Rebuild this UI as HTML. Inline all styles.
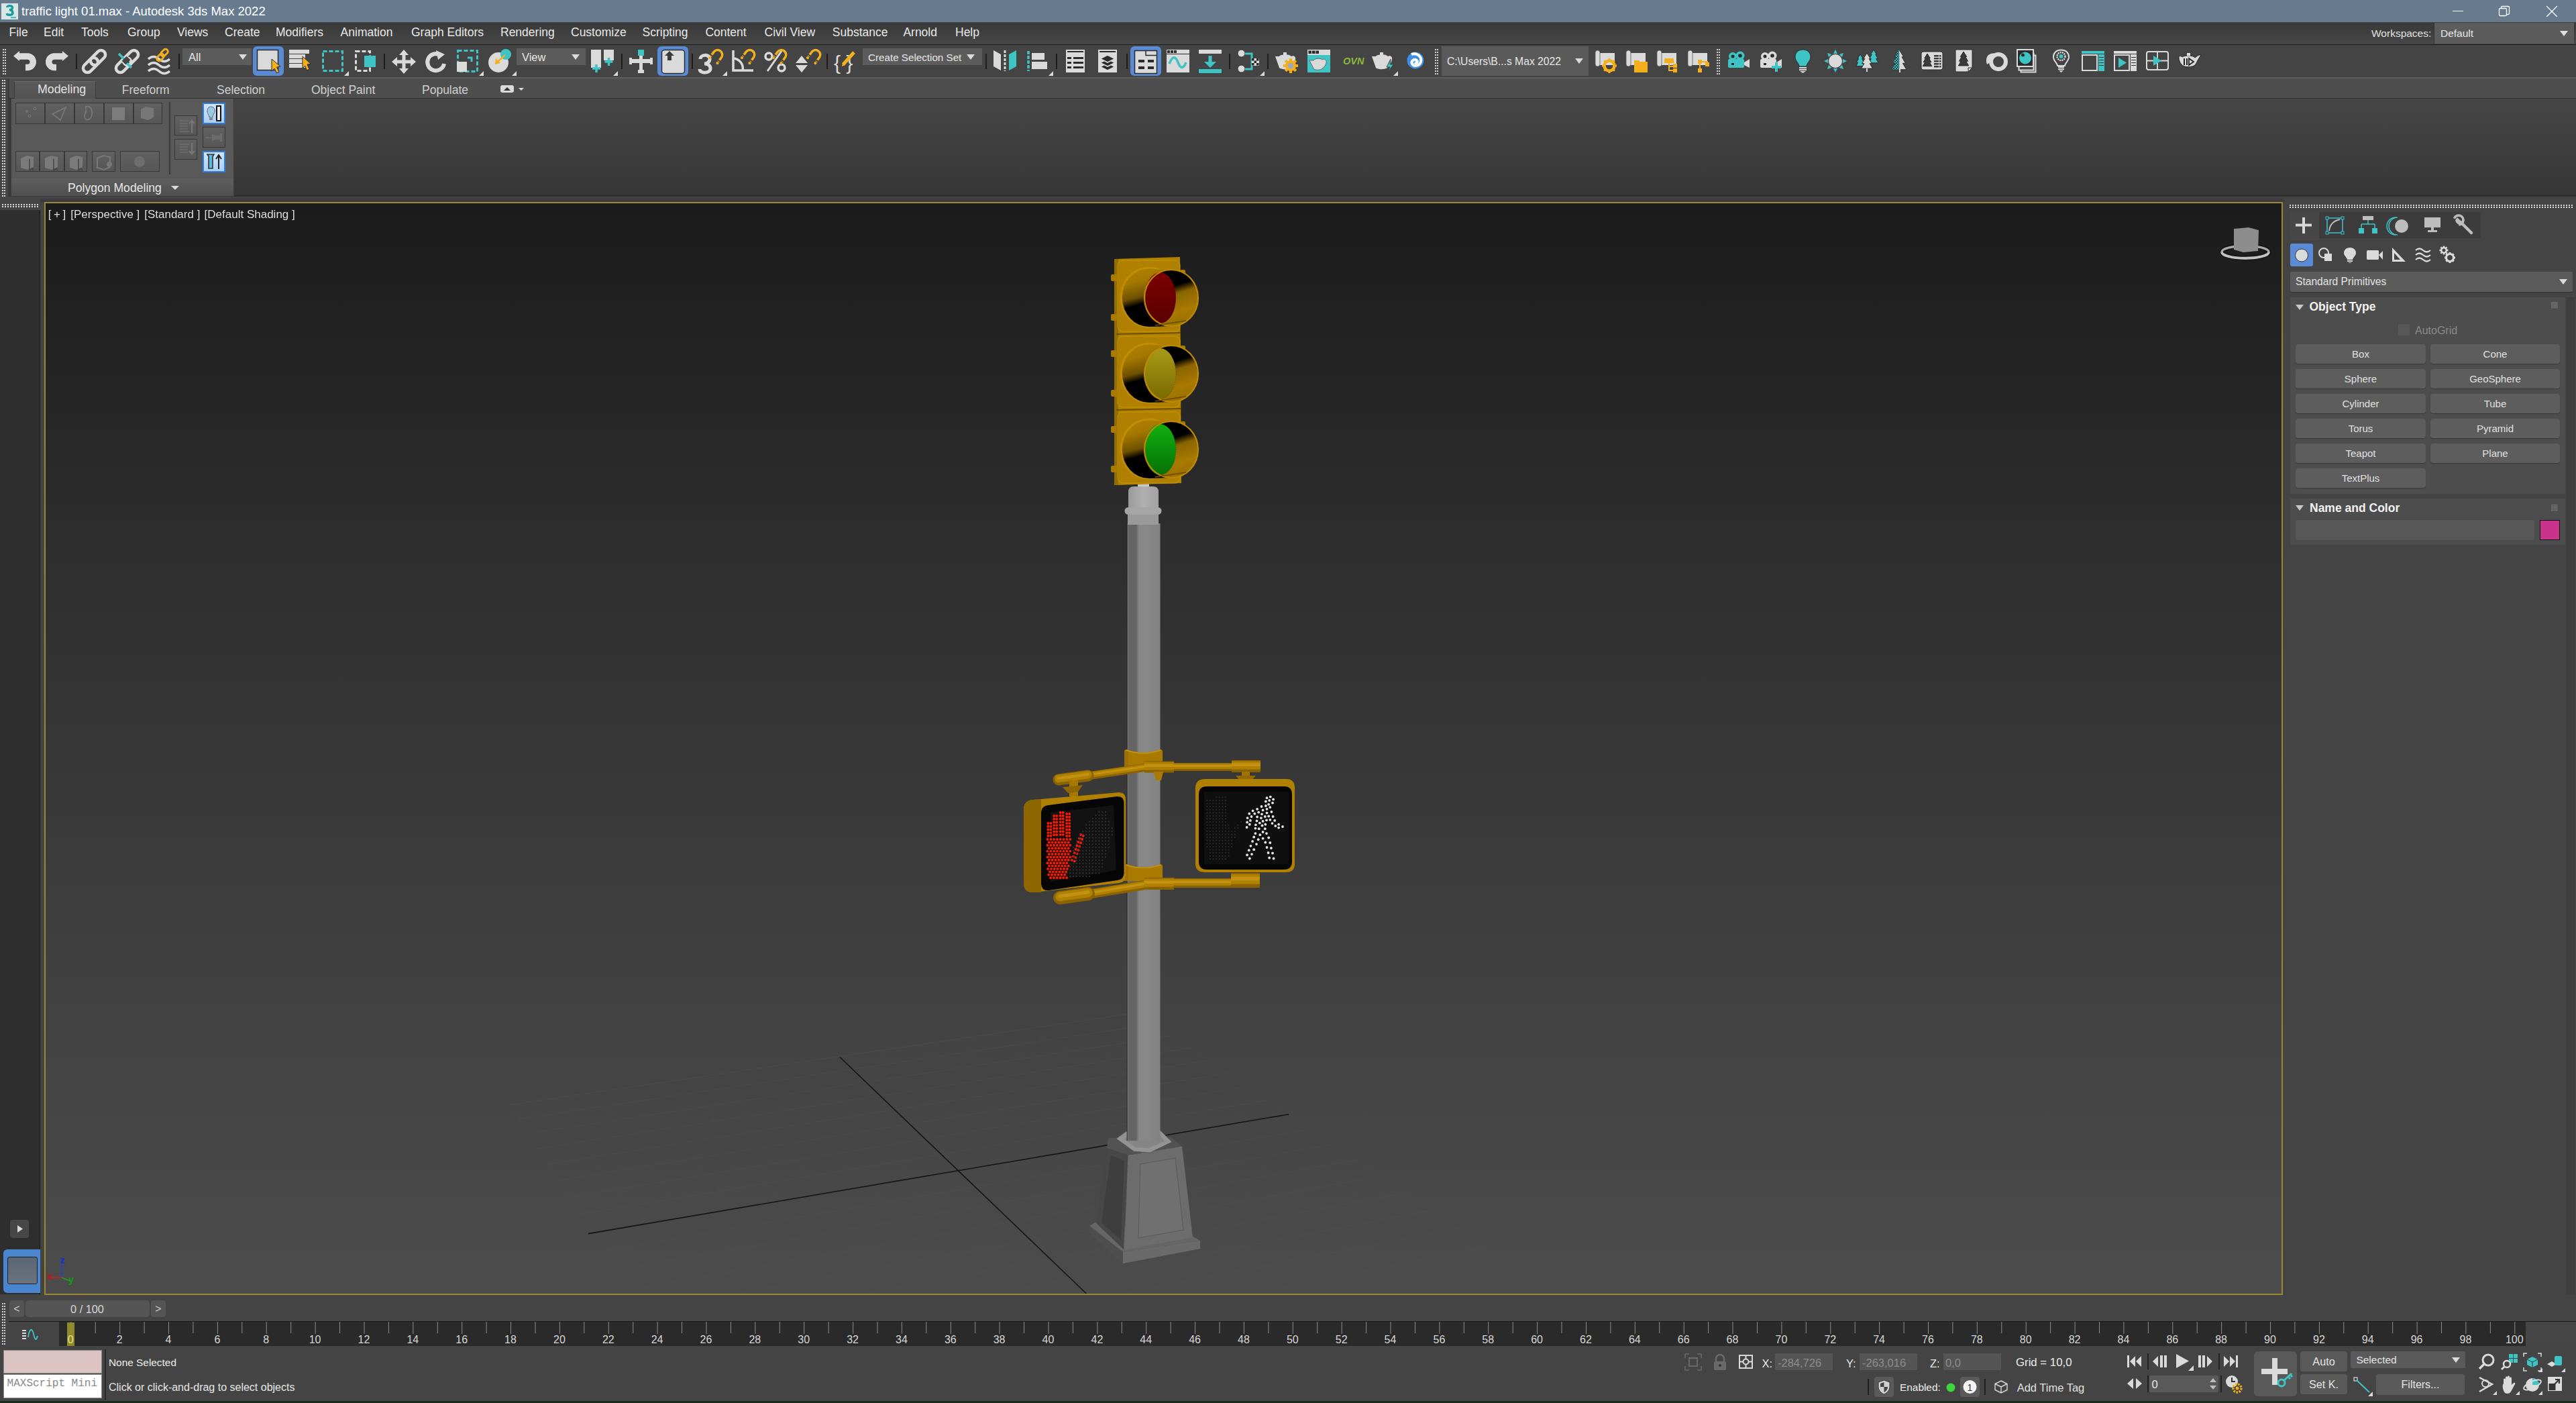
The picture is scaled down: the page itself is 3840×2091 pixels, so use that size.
<!DOCTYPE html>
<html><head><meta charset="utf-8">
<style>
*{box-sizing:border-box;margin:0;padding:0}
html,body{width:3840px;height:2091px;overflow:hidden;background:#444;font-family:"Liberation Sans",sans-serif;color:#ddd;position:relative}
.a{position:absolute}
.t{position:absolute;white-space:nowrap;line-height:1}
svg.a{overflow:visible}
</style></head><body>
<div class="a" style="left:0px;top:0px;width:3840px;height:33px;background:#687a8e;"></div>
<svg class="a" style="left:2px;top:5px;" width="25" height="24" viewBox="0 0 25 24"><rect x="0" y="0" width="25" height="24" fill="#d9e6e6"/><path d="M8.5 6 C9 2.8 16.5 2.8 16.5 6.5 C16.5 8.5 14.5 9.8 12 9.8 C15 9.8 17 11.3 17 14.3 C17 18 9 18.3 8 15" fill="none" stroke="#189c9c" stroke-width="3.4"/><rect x="14" y="20" width="8" height="2.2" fill="#3cc0c0"/></svg>
<div class="t" style="left:32.0px;top:7.8px;font-size:18.5px;color:#ffffff;font-weight:400;">traffic light 01.max - Autodesk 3ds Max 2022</div>
<div class="a" style="left:3656px;top:16px;width:16px;height:1px;background:#ffffff;"></div>
<svg class="a" style="left:3724px;top:8px;" width="18" height="18" viewBox="0 0 18 18"><rect x="1.5" y="4.5" width="11" height="11" rx="1.5" fill="none" stroke="#fff" stroke-width="1.3"/><path d="M4.5 4.5 V3 a1.5 1.5 0 0 1 1.5 -1.5 H15 a1.5 1.5 0 0 1 1.5 1.5 V12 a1.5 1.5 0 0 1 -1.5 1.5 H12.5" fill="none" stroke="#fff" stroke-width="1.3"/></svg>
<svg class="a" style="left:3795px;top:8px;" width="18" height="18" viewBox="0 0 18 18"><path d="M1 1 L17 17 M17 1 L1 17" stroke="#fff" stroke-width="1.4"/></svg>
<div class="a" style="left:0px;top:33px;width:3840px;height:33px;background:linear-gradient(#383838,#474747);"></div>
<div class="a" style="left:0px;top:33px;width:3840px;height:1px;background:#3a3f44;"></div>
<div class="t" style="left:13.5px;top:40.2px;font-size:17.5px;color:#e8e8e8;font-weight:400;">File</div>
<div class="t" style="left:65.0px;top:40.2px;font-size:17.5px;color:#e8e8e8;font-weight:400;">Edit</div>
<div class="t" style="left:121.0px;top:40.2px;font-size:17.5px;color:#e8e8e8;font-weight:400;">Tools</div>
<div class="t" style="left:190.0px;top:40.2px;font-size:17.5px;color:#e8e8e8;font-weight:400;">Group</div>
<div class="t" style="left:264.0px;top:40.2px;font-size:17.5px;color:#e8e8e8;font-weight:400;">Views</div>
<div class="t" style="left:335.0px;top:40.2px;font-size:17.5px;color:#e8e8e8;font-weight:400;">Create</div>
<div class="t" style="left:411.0px;top:40.2px;font-size:17.5px;color:#e8e8e8;font-weight:400;">Modifiers</div>
<div class="t" style="left:507.6px;top:40.2px;font-size:17.5px;color:#e8e8e8;font-weight:400;">Animation</div>
<div class="t" style="left:613.0px;top:40.2px;font-size:17.5px;color:#e8e8e8;font-weight:400;">Graph Editors</div>
<div class="t" style="left:746.0px;top:40.2px;font-size:17.5px;color:#e8e8e8;font-weight:400;">Rendering</div>
<div class="t" style="left:851.0px;top:40.2px;font-size:17.5px;color:#e8e8e8;font-weight:400;">Customize</div>
<div class="t" style="left:957.5px;top:40.2px;font-size:17.5px;color:#e8e8e8;font-weight:400;">Scripting</div>
<div class="t" style="left:1051.4px;top:40.2px;font-size:17.5px;color:#e8e8e8;font-weight:400;">Content</div>
<div class="t" style="left:1139.5px;top:40.2px;font-size:17.5px;color:#e8e8e8;font-weight:400;">Civil View</div>
<div class="t" style="left:1240.8px;top:40.2px;font-size:17.5px;color:#e8e8e8;font-weight:400;">Substance</div>
<div class="t" style="left:1346.4px;top:40.2px;font-size:17.5px;color:#e8e8e8;font-weight:400;">Arnold</div>
<div class="t" style="left:1424.0px;top:40.2px;font-size:17.5px;color:#e8e8e8;font-weight:400;">Help</div>
<div class="t" style="left:3535.0px;top:41.9px;font-size:15.5px;color:#e0e0e0;font-weight:400;">Workspaces:</div>
<div class="a" style="left:3629px;top:34px;width:208px;height:31px;background:#5c5c5c;"></div>
<div class="a" style="left:3628px;top:34px;width:1px;height:31px;background:#303030;"></div>
<div class="t" style="left:3638.0px;top:41.9px;font-size:15.5px;color:#e8e8e8;font-weight:400;">Default</div>
<svg class="a" style="left:3815px;top:45px;" width="14" height="10" viewBox="0 0 14 10"><path d="M1 1 H13 L7 9 Z" fill="#e0e0e0"/></svg>
<div class="a" style="left:0px;top:66px;width:3840px;height:1px;background:#1c1c1c;"></div>
<div class="a" style="left:0px;top:67px;width:3840px;height:49px;background:#444444;"></div>
<div class="a" style="left:0px;top:115px;width:3840px;height:2px;background:#5d5d5d;"></div>
<svg class="a" style="left:4px;top:73px;" width="6" height="38" viewBox="0 0 6 38"><rect x="0" y="0" width="2" height="2" fill="#cfcfcf"/><rect x="0" y="4" width="2" height="2" fill="#cfcfcf"/><rect x="0" y="8" width="2" height="2" fill="#cfcfcf"/><rect x="0" y="12" width="2" height="2" fill="#cfcfcf"/><rect x="0" y="16" width="2" height="2" fill="#cfcfcf"/><rect x="0" y="20" width="2" height="2" fill="#cfcfcf"/><rect x="0" y="24" width="2" height="2" fill="#cfcfcf"/><rect x="0" y="28" width="2" height="2" fill="#cfcfcf"/><rect x="0" y="32" width="2" height="2" fill="#cfcfcf"/><rect x="0" y="36" width="2" height="2" fill="#cfcfcf"/><rect x="3" y="0" width="2" height="2" fill="#cfcfcf"/><rect x="3" y="4" width="2" height="2" fill="#cfcfcf"/><rect x="3" y="8" width="2" height="2" fill="#cfcfcf"/><rect x="3" y="12" width="2" height="2" fill="#cfcfcf"/><rect x="3" y="16" width="2" height="2" fill="#cfcfcf"/><rect x="3" y="20" width="2" height="2" fill="#cfcfcf"/><rect x="3" y="24" width="2" height="2" fill="#cfcfcf"/><rect x="3" y="28" width="2" height="2" fill="#cfcfcf"/><rect x="3" y="32" width="2" height="2" fill="#cfcfcf"/><rect x="3" y="36" width="2" height="2" fill="#cfcfcf"/></svg>
<svg class="a" style="left:18px;top:74px;" width="40" height="36" viewBox="0 0 40 36"><path d="M10 10 H23 A8.2 8.2 0 0 1 23 26.5 H20" fill="none" stroke="#dadada" stroke-width="9.5"/><path d="M2 9.5 L11 2 V17 Z" fill="#dadada"/></svg>
<svg class="a" style="left:64px;top:74px;" width="40" height="36" viewBox="0 0 40 36"><path d="M30 10 H17 A8.2 8.2 0 0 0 17 26.5 H20" fill="none" stroke="#dadada" stroke-width="9.5"/><path d="M38 9.5 L29 2 V17 Z" fill="#dadada"/></svg>
<div class="a" style="left:113px;top:80px;width:2px;height:23px;background:#1e1e1e;"></div>
<svg class="a" style="left:122px;top:74px;" width="40" height="36" viewBox="0 0 40 36"><rect x="0" y="16.5" width="26" height="13" rx="6.5" fill="none" stroke="#dadada" stroke-width="4.5" transform="rotate(-45 13 23)"/><rect x="11" y="5.5" width="26" height="13" rx="6.5" fill="none" stroke="#dadada" stroke-width="4.5" transform="rotate(-45 24 12)"/></svg>
<svg class="a" style="left:171px;top:74px;" width="40" height="36" viewBox="0 0 40 36"><rect x="0" y="16.5" width="26" height="13" rx="6.5" fill="none" stroke="#dadada" stroke-width="4.5" transform="rotate(-45 13 23)"/><rect x="11" y="5.5" width="26" height="13" rx="6.5" fill="none" stroke="#dadada" stroke-width="4.5" transform="rotate(-45 24 12)"/><path d="M6 6 L14 14 M17 19 L25 27" stroke="#3fc4c6" stroke-width="3.5"/><rect x="12" y="12" width="10" height="8" fill="#444" transform="rotate(-45 17 16)"/></svg>
<svg class="a" style="left:219px;top:74px;" width="40" height="40" viewBox="0 0 40 40"><path d="M2 14 q8 -7 16 0 t16 0" fill="none" stroke="#dadada" stroke-width="3.5"/><path d="M2 23 q8 -7 16 0 t16 0" fill="none" stroke="#dadada" stroke-width="3.5"/><path d="M2 32 q8 -7 16 0 t16 0" fill="none" stroke="#dadada" stroke-width="3.5"/><rect x="20" y="1" width="12" height="7" rx="3.5" fill="none" stroke="#f4b01c" stroke-width="2.8" transform="rotate(-45 26 4.5)"/><rect x="14" y="8" width="12" height="7" rx="3.5" fill="none" stroke="#f4b01c" stroke-width="2.8" transform="rotate(-45 20 11.5)"/></svg>
<div class="a" style="left:266px;top:80px;width:2px;height:23px;background:#1e1e1e;"></div>
<div class="a" style="left:272px;top:72px;width:103px;height:25px;background:#5c5c5c;"></div>
<div class="t" style="left:281.0px;top:76.5px;font-size:16.5px;color:#e6e6e6;font-weight:400;">All</div>
<svg class="a" style="left:355px;top:80px;" width="14" height="10" viewBox="0 0 14 10"><path d="M1 1 H13 L7 9 Z" fill="#dadada"/></svg>
<div class="a" style="left:377px;top:69px;width:46px;height:44px;background:#5b8ad4;border-radius:6px"></div>
<svg class="a" style="left:377px;top:69px;" width="46" height="44" viewBox="0 0 46 44"><rect x="6.5" y="5.5" width="31" height="30" fill="#dadada" stroke="#2b2b2b" stroke-width="1.5"/><path d="M28 19 L41 30 L35.5 31 L39 38 L35.5 40 L32 33 L28 37 Z" fill="#f4b01c" stroke="#2b2b2b" stroke-width="1"/></svg>
<svg class="a" style="left:430px;top:72px;" width="40" height="40" viewBox="0 0 40 40"><rect x="1" y="2" width="30" height="6" fill="#dadada"/><rect x="1" y="9" width="24" height="6" fill="#dadada"/><rect x="1" y="16" width="24" height="6" fill="#dadada"/><rect x="1" y="23" width="24" height="6" fill="#dadada"/><path d="M21 12 L33 23 L28 24 L31 31 L27.5 33 L24.5 26 L21 30 Z" fill="#f4b01c" stroke="#2b2b2b" stroke-width="1"/></svg>
<svg class="a" style="left:478px;top:73px;" width="36" height="36" viewBox="0 0 36 36"><rect x="3.5" y="3.5" width="29" height="29" fill="none" stroke="#3fc4c6" stroke-width="3" stroke-dasharray="6 3"/></svg>
<svg class="a" style="left:513px;top:106px;" width="7" height="7" viewBox="0 0 7 7"><path d="M7 0 V7 H0 Z" fill="#dadada"/></svg>
<svg class="a" style="left:527px;top:73px;" width="36" height="36" viewBox="0 0 36 36"><rect x="3.5" y="3.5" width="21" height="29" fill="none" stroke="#dadada" stroke-width="3" stroke-dasharray="6 3"/><rect x="16" y="10" width="17" height="17" fill="#3fc4c6"/></svg>
<div class="a" style="left:572px;top:80px;width:2px;height:23px;background:#1e1e1e;"></div>
<svg class="a" style="left:583px;top:73px;" width="38" height="38" viewBox="0 0 38 38"><path d="M19 1 L26 9 H21.5 V16.5 H29 V12 L37 19 L29 26 V21.5 H21.5 V29 H26 L19 37 L12 29 H16.5 V21.5 H9 V26 L1 19 L9 12 V16.5 H16.5 V9 H12 Z" fill="#dadada"/></svg>
<svg class="a" style="left:632px;top:74px;" width="36" height="36" viewBox="0 0 36 36"><path d="M25 8.5 A12.5 12.5 0 1 0 30 21" fill="none" stroke="#dadada" stroke-width="6"/><path d="M18 1 L31 7 L21 15 Z" fill="#dadada"/></svg>
<svg class="a" style="left:680px;top:73px;" width="36" height="36" viewBox="0 0 36 36"><rect x="2.5" y="2.5" width="29" height="31" fill="none" stroke="#3fc4c6" stroke-width="3" stroke-dasharray="6 3"/><rect x="1" y="19" width="15" height="15" fill="#dadada"/><path d="M17 13 H23 V19" fill="none" stroke="#3fc4c6" stroke-width="3"/></svg>
<svg class="a" style="left:714px;top:106px;" width="7" height="7" viewBox="0 0 7 7"><path d="M7 0 V7 H0 Z" fill="#dadada"/></svg>
<svg class="a" style="left:726px;top:72px;" width="40" height="38" viewBox="0 0 40 38"><circle cx="17" cy="21" r="15" fill="#dadada"/><circle cx="28" cy="9" r="8" fill="#3fc4c6"/><path d="M27 10 L16 20" stroke="#f4b01c" stroke-width="2.5"/><path d="M12 24 L13 15 L20 22 Z" fill="#f4b01c"/></svg>
<svg class="a" style="left:763px;top:106px;" width="7" height="7" viewBox="0 0 7 7"><path d="M7 0 V7 H0 Z" fill="#dadada"/></svg>
<div class="a" style="left:770px;top:72px;width:103px;height:25px;background:#5c5c5c;"></div>
<div class="t" style="left:778.0px;top:76.5px;font-size:16.5px;color:#e6e6e6;font-weight:400;">View</div>
<svg class="a" style="left:851px;top:80px;" width="14" height="10" viewBox="0 0 14 10"><path d="M1 1 H13 L7 9 Z" fill="#dadada"/></svg>
<svg class="a" style="left:880px;top:73px;" width="40" height="40" viewBox="0 0 40 40"><rect x="1" y="1" width="15" height="27" fill="#dadada"/><rect x="20" y="1" width="15" height="16" fill="#dadada"/><path d="M9 23 V35 M3 29 H15" stroke="#3fc4c6" stroke-width="3.5"/><path d="M27.5 13 V25 M21.5 19 H33.5" stroke="#3fc4c6" stroke-width="3.5"/></svg>
<svg class="a" style="left:914px;top:106px;" width="7" height="7" viewBox="0 0 7 7"><path d="M7 0 V7 H0 Z" fill="#dadada"/></svg>
<div class="a" style="left:926px;top:80px;width:2px;height:23px;background:#1e1e1e;"></div>
<svg class="a" style="left:937px;top:73px;" width="38" height="38" viewBox="0 0 38 38"><rect x="14" y="1" width="9" height="9" fill="#3fc4c6"/><rect x="16" y="10" width="5" height="25" fill="#dadada"/><rect x="1" y="15" width="35" height="6" fill="#dadada"/><rect x="1" y="13" width="4" height="10" fill="#dadada"/><rect x="32" y="13" width="4" height="10" fill="#dadada"/><rect x="14" y="31" width="9" height="5" fill="#dadada"/></svg>
<div class="a" style="left:980px;top:69px;width:46px;height:44px;background:#5b8ad4;border-radius:6px"></div>
<svg class="a" style="left:980px;top:69px;" width="46" height="44" viewBox="0 0 46 44"><rect x="6.5" y="5.5" width="34" height="35" rx="4" fill="#dadada" stroke="#2b2b2b" stroke-width="1.5"/><path d="M11 14 L18 7 L25 14 H21 V21 H15 V14 Z" fill="#3a3a3a"/></svg>
<div class="a" style="left:1031px;top:80px;width:2px;height:23px;background:#1e1e1e;"></div>
<svg class="a" style="left:1040px;top:72px;" width="40" height="40" viewBox="0 0 40 40"><path d="M4 16 C4 9 18 8 18 16 C18 21 13 23 10 23 C14 23 19 25 19 30 C19 38 3 38 3 31" fill="none" stroke="#dadada" stroke-width="5"/><g transform="rotate(35 28 12)"><path d="M21 17 V9 A7 7 0 0 1 35 9 V17" fill="none" stroke="#f4b01c" stroke-width="3.5"/><rect x="19" y="14" width="4" height="2" fill="#444"/><rect x="33" y="14" width="4" height="2" fill="#444"/><circle cx="21" cy="19.5" r="2" fill="#f4b01c"/><circle cx="35" cy="19.5" r="2" fill="#f4b01c"/></g></svg>
<svg class="a" style="left:1077px;top:106px;" width="7" height="7" viewBox="0 0 7 7"><path d="M7 0 V7 H0 Z" fill="#dadada"/></svg>
<svg class="a" style="left:1089px;top:72px;" width="40" height="40" viewBox="0 0 40 40"><path d="M4 3 V33 H34" fill="none" stroke="#dadada" stroke-width="3.5"/><path d="M4 15 A15 15 0 0 1 18 33" fill="none" stroke="#dadada" stroke-width="3.5"/><g transform="rotate(35 27 12)"><path d="M20 17 V9 A7 7 0 0 1 34 9 V17" fill="none" stroke="#f4b01c" stroke-width="3.5"/><rect x="18" y="14" width="4" height="2" fill="#444"/><rect x="32" y="14" width="4" height="2" fill="#444"/><circle cx="20" cy="19.5" r="2" fill="#f4b01c"/><circle cx="34" cy="19.5" r="2" fill="#f4b01c"/></g></svg>
<svg class="a" style="left:1138px;top:72px;" width="40" height="40" viewBox="0 0 40 40"><circle cx="8" cy="12" r="5" fill="none" stroke="#dadada" stroke-width="3.5"/><circle cx="27" cy="29" r="5" fill="none" stroke="#dadada" stroke-width="3.5"/><path d="M6 34 L27 4" stroke="#dadada" stroke-width="3"/><g transform="rotate(35 25 12)"><path d="M18 17 V9 A7 7 0 0 1 32 9 V17" fill="none" stroke="#f4b01c" stroke-width="3.5"/><rect x="16" y="14" width="4" height="2" fill="#444"/><rect x="30" y="14" width="4" height="2" fill="#444"/><circle cx="18" cy="19.5" r="2" fill="#f4b01c"/><circle cx="32" cy="19.5" r="2" fill="#f4b01c"/></g></svg>
<svg class="a" style="left:1186px;top:72px;" width="40" height="40" viewBox="0 0 40 40"><path d="M9 11 L18 22 H0 Z" fill="#dadada"/><path d="M0 25 H18 L9 36 Z" fill="#dadada"/><g transform="rotate(35 28 12)"><path d="M21 17 V9 A7 7 0 0 1 35 9 V17" fill="none" stroke="#f4b01c" stroke-width="3.5"/><rect x="19" y="14" width="4" height="2" fill="#444"/><rect x="33" y="14" width="4" height="2" fill="#444"/><circle cx="21" cy="19.5" r="2" fill="#f4b01c"/><circle cx="35" cy="19.5" r="2" fill="#f4b01c"/></g></svg>
<div class="a" style="left:1232px;top:80px;width:2px;height:23px;background:#1e1e1e;"></div>
<svg class="a" style="left:1243px;top:72px;" width="40" height="40" viewBox="0 0 40 40"><text x="0" y="32" font-family="Liberation Sans" font-size="30" fill="#dadada">{ }</text><path d="M14 24 L30 6" stroke="#f4b01c" stroke-width="5"/><path d="M12 27 L13 21 L17 25 Z" fill="#f4b01c"/></svg>
<div class="a" style="left:1286px;top:72px;width:178px;height:25px;background:#5c5c5c;"></div>
<div class="t" style="left:1294.0px;top:77.6px;font-size:15.2px;color:#e6e6e6;font-weight:400;">Create Selection Set</div>
<svg class="a" style="left:1440px;top:80px;" width="14" height="10" viewBox="0 0 14 10"><path d="M1 1 H13 L7 9 Z" fill="#dadada"/></svg>
<div class="a" style="left:1469px;top:80px;width:2px;height:23px;background:#1e1e1e;"></div>
<svg class="a" style="left:1479px;top:72px;" width="40" height="40" viewBox="0 0 40 40"><path d="M2 3 L13 9 V33 L2 27 Z" fill="#dadada"/><path d="M19 3 V34" stroke="#dadada" stroke-width="3" stroke-dasharray="4 2"/><path d="M25 9 L36 3 V27 L25 33 Z" fill="#3fc4c6"/></svg>
<svg class="a" style="left:1530px;top:72px;" width="40" height="40" viewBox="0 0 40 40"><path d="M3 4 V34" stroke="#3fc4c6" stroke-width="3.5" stroke-dasharray="5 2"/><rect x="8" y="7" width="19" height="10" fill="#dadada"/><rect x="8" y="20" width="23" height="11" fill="#dadada"/></svg>
<svg class="a" style="left:1563px;top:106px;" width="7" height="7" viewBox="0 0 7 7"><path d="M7 0 V7 H0 Z" fill="#dadada"/></svg>
<div class="a" style="left:1574px;top:80px;width:2px;height:23px;background:#1e1e1e;"></div>
<svg class="a" style="left:1588px;top:73px;" width="32" height="36" viewBox="0 0 32 36"><rect x="1" y="1" width="28" height="34" fill="#dadada"/><rect x="3" y="3" width="24" height="2" fill="#2b2b2b"/><rect x="3" y="12" width="6" height="3" fill="#2b2b2b"/><rect x="12" y="12" width="15" height="3" fill="#2b2b2b"/><rect x="3" y="19" width="6" height="3" fill="#2b2b2b"/><rect x="12" y="19" width="15" height="3" fill="#2b2b2b"/><rect x="3" y="26" width="6" height="3" fill="#2b2b2b"/><rect x="12" y="26" width="15" height="3" fill="#2b2b2b"/></svg>
<svg class="a" style="left:1636px;top:73px;" width="32" height="36" viewBox="0 0 32 36"><rect x="1" y="1" width="28" height="34" fill="#dadada"/><rect x="3" y="3" width="24" height="2" fill="#2b2b2b"/><path d="M15 21 L26 26.5 L15 32 L4 26.5 Z" fill="#2b2b2b" stroke="#dadada" stroke-width="1.6"/><path d="M15 15 L26 20.5 L15 26 L4 20.5 Z" fill="#2b2b2b" stroke="#dadada" stroke-width="1.6"/><path d="M15 9 L26 14.5 L15 20 L4 14.5 Z" fill="#2b2b2b" stroke="#dadada" stroke-width="1.6"/></svg>
<div class="a" style="left:1679px;top:80px;width:2px;height:23px;background:#1e1e1e;"></div>
<div class="a" style="left:1685px;top:69px;width:46px;height:44px;background:#5b8ad4;border-radius:6px"></div>
<svg class="a" style="left:1685px;top:69px;" width="46" height="44" viewBox="0 0 46 44"><path d="M6.5 6.5 H39.5 V40.5 H6.5 Z" fill="#dadada" stroke="#2b2b2b" stroke-width="1.5"/><path d="M23 6.5 V13.5 H39.5" fill="none" stroke="#2b2b2b" stroke-width="1.5"/><rect x="12" y="20" width="9" height="4" fill="#2b2b2b"/><rect x="26" y="20" width="9" height="4" fill="#2b2b2b"/><rect x="12" y="30" width="9" height="4" fill="#2b2b2b"/><rect x="26" y="30" width="9" height="4" fill="#2b2b2b"/></svg>
<svg class="a" style="left:1738px;top:73px;" width="36" height="36" viewBox="0 0 36 36"><rect x="1" y="1" width="34" height="34" fill="#dadada"/><rect x="2" y="2" width="4" height="4" fill="#2b2b2b"/><rect x="7" y="2" width="4" height="4" fill="#2b2b2b"/><rect x="12" y="2" width="4" height="4" fill="#2b2b2b"/><path d="M1 7.5 H35" stroke="#2b2b2b" stroke-width="1.2"/><path d="M5 22 C10 10 14 10 18 20 S26 30 30 20" fill="none" stroke="#3fc4c6" stroke-width="3.5"/></svg>
<svg class="a" style="left:1786px;top:73px;" width="36" height="36" viewBox="0 0 36 36"><rect x="1" y="1" width="34" height="6" fill="#dadada"/><path d="M18 10 V22" stroke="#3fc4c6" stroke-width="5"/><path d="M9 19 H27 L18 28 Z" fill="#3fc4c6"/><rect x="1" y="30" width="34" height="6" fill="#3fc4c6"/></svg>
<div class="a" style="left:1832px;top:80px;width:2px;height:23px;background:#1e1e1e;"></div>
<svg class="a" style="left:1842px;top:73px;" width="40" height="38" viewBox="0 0 40 38"><circle cx="8.5" cy="6.5" r="5.5" fill="#dadada" stroke="#2b2b2b"/><circle cx="8.5" cy="29.5" r="5.5" fill="#dadada" stroke="#2b2b2b"/><path d="M14 7 H24 V30 H14" fill="none" stroke="#3fc4c6" stroke-width="3"/><rect x="24" y="14" width="11" height="11" fill="#dadada"/><rect x="24" y="14" width="3.5" height="3.5" fill="#2b2b2b"/><rect x="31" y="14" width="3.5" height="3.5" fill="#2b2b2b"/><rect x="27.5" y="17.5" width="3.5" height="3.5" fill="#2b2b2b"/><rect x="24" y="21" width="3.5" height="3.5" fill="#2b2b2b"/><rect x="31" y="21" width="3.5" height="3.5" fill="#2b2b2b"/></svg>
<svg class="a" style="left:1878px;top:106px;" width="7" height="7" viewBox="0 0 7 7"><path d="M7 0 V7 H0 Z" fill="#dadada"/></svg>
<div class="a" style="left:1889px;top:80px;width:2px;height:23px;background:#1e1e1e;"></div>
<svg class="a" style="left:1899px;top:74px;" width="40" height="40" viewBox="0 0 40 40"><path d="M2 10 L8 10 C10 7 22 6 26 10 C29 8 33 10 32 15 C31 20 28 24 26 26 C24 30 10 30 8 27 Z" fill="#dadada"/><rect x="14" y="4" width="5" height="4" fill="#dadada"/><circle cx="25" cy="24" r="8" fill="#f4b01c"/><circle cx="25" cy="24" r="4" fill="#9aa7c7"/><rect x="23" y="13" width="4" height="5" fill="#f4b01c" transform="rotate(0 25 24)"/><rect x="23" y="13" width="4" height="5" fill="#f4b01c" transform="rotate(45 25 24)"/><rect x="23" y="13" width="4" height="5" fill="#f4b01c" transform="rotate(90 25 24)"/><rect x="23" y="13" width="4" height="5" fill="#f4b01c" transform="rotate(135 25 24)"/><rect x="23" y="13" width="4" height="5" fill="#f4b01c" transform="rotate(180 25 24)"/><rect x="23" y="13" width="4" height="5" fill="#f4b01c" transform="rotate(225 25 24)"/><rect x="23" y="13" width="4" height="5" fill="#f4b01c" transform="rotate(270 25 24)"/><rect x="23" y="13" width="4" height="5" fill="#f4b01c" transform="rotate(315 25 24)"/></svg>
<svg class="a" style="left:1948px;top:73px;" width="36" height="36" viewBox="0 0 36 36"><rect x="1" y="1" width="34" height="34" fill="#3fc4c6"/><rect x="1" y="1" width="34" height="8" fill="#dadada"/><rect x="2.5" y="2.5" width="4.5" height="4.5" fill="#2b2b2b"/><rect x="8" y="2.5" width="4.5" height="4.5" fill="#2b2b2b"/><rect x="13.5" y="2.5" width="4.5" height="4.5" fill="#2b2b2b"/><path d="M4 17 H10 C12 14 20 13 23 16 C26 14 30 16 29 21 C28 25 25 28 23 29 C21 32 11 32 10 29 Z" fill="#dadada" stroke="#555" stroke-width="0.8"/></svg>
<svg class="a" style="left:2001px;top:80px;" width="28" height="20" viewBox="0 0 28 20"><text x="1" y="16" font-family="Liberation Sans" font-weight="700" font-style="italic" font-size="14.5" fill="#8cb83c">OVN</text></svg>
<svg class="a" style="left:2043px;top:74px;" width="40" height="40" viewBox="0 0 40 40"><path d="M2 10 L8 10 C10 7 22 6 26 10 C29 8 33 10 32 15 C31 20 28 24 26 26 C24 30 10 30 8 27 Z" fill="#dadada"/><rect x="14" y="4" width="5" height="4" fill="#dadada"/><path d="M30 14 L24 26 H29 L25 35 L34 22 H29 Z" fill="#3fc4c6" stroke="#444" stroke-width="1"/></svg>
<svg class="a" style="left:2077px;top:106px;" width="7" height="7" viewBox="0 0 7 7"><path d="M7 0 V7 H0 Z" fill="#dadada"/></svg>
<svg class="a" style="left:2096px;top:76px;" width="28" height="28" viewBox="0 0 28 28"><circle cx="14" cy="14" r="12.5" fill="#3d8ee6"/><path d="M8 5 C16 2 24 8 22 16 C20 22 12 24 9 19 C7 15 12 11 16 14 C18 16 15 19 13 17" fill="none" stroke="#fff" stroke-width="4"/></svg>
<svg class="a" style="left:2139px;top:73px;" width="6" height="38" viewBox="0 0 6 38"><rect x="0" y="0" width="2" height="2" fill="#cfcfcf"/><rect x="0" y="4" width="2" height="2" fill="#cfcfcf"/><rect x="0" y="8" width="2" height="2" fill="#cfcfcf"/><rect x="0" y="12" width="2" height="2" fill="#cfcfcf"/><rect x="0" y="16" width="2" height="2" fill="#cfcfcf"/><rect x="0" y="20" width="2" height="2" fill="#cfcfcf"/><rect x="0" y="24" width="2" height="2" fill="#cfcfcf"/><rect x="0" y="28" width="2" height="2" fill="#cfcfcf"/><rect x="0" y="32" width="2" height="2" fill="#cfcfcf"/><rect x="0" y="36" width="2" height="2" fill="#cfcfcf"/><rect x="3" y="0" width="2" height="2" fill="#cfcfcf"/><rect x="3" y="4" width="2" height="2" fill="#cfcfcf"/><rect x="3" y="8" width="2" height="2" fill="#cfcfcf"/><rect x="3" y="12" width="2" height="2" fill="#cfcfcf"/><rect x="3" y="16" width="2" height="2" fill="#cfcfcf"/><rect x="3" y="20" width="2" height="2" fill="#cfcfcf"/><rect x="3" y="24" width="2" height="2" fill="#cfcfcf"/><rect x="3" y="28" width="2" height="2" fill="#cfcfcf"/><rect x="3" y="32" width="2" height="2" fill="#cfcfcf"/><rect x="3" y="36" width="2" height="2" fill="#cfcfcf"/></svg>
<div class="a" style="left:2149px;top:69px;width:219px;height:44px;background:#5a5a5a;"></div>
<div class="t" style="left:2157.0px;top:83.7px;font-size:15.7px;color:#e6e6e6;font-weight:400;">C:\Users\B...s Max 2022</div>
<svg class="a" style="left:2347px;top:86px;" width="14" height="10" viewBox="0 0 14 10"><path d="M1 1 H13 L7 9 Z" fill="#dadada"/></svg>
<svg class="a" style="left:2377px;top:73px;" width="40" height="40" viewBox="0 0 40 40"><rect x="6" y="6" width="24" height="18" fill="#dadada"/><rect x="1" y="2" width="7" height="24" rx="3.5" fill="#dadada" stroke="#555" stroke-width="0.8"/><circle cx="22" cy="25" r="7.5" fill="none" stroke="#f4b01c" stroke-width="4.5"/><rect x="20.5" y="14" width="3" height="4" fill="#f4b01c" transform="rotate(0 22 25)"/><rect x="20.5" y="14" width="3" height="4" fill="#f4b01c" transform="rotate(45 22 25)"/><rect x="20.5" y="14" width="3" height="4" fill="#f4b01c" transform="rotate(90 22 25)"/><rect x="20.5" y="14" width="3" height="4" fill="#f4b01c" transform="rotate(135 22 25)"/><rect x="20.5" y="14" width="3" height="4" fill="#f4b01c" transform="rotate(180 22 25)"/><rect x="20.5" y="14" width="3" height="4" fill="#f4b01c" transform="rotate(225 22 25)"/><rect x="20.5" y="14" width="3" height="4" fill="#f4b01c" transform="rotate(270 22 25)"/><rect x="20.5" y="14" width="3" height="4" fill="#f4b01c" transform="rotate(315 22 25)"/></svg>
<svg class="a" style="left:2423px;top:73px;" width="40" height="40" viewBox="0 0 40 40"><rect x="6" y="6" width="24" height="18" fill="#dadada"/><rect x="1" y="2" width="7" height="24" rx="3.5" fill="#dadada" stroke="#555" stroke-width="0.8"/><path d="M13 17 H20 L22 19 H33 V35 H13 Z" fill="#f4b01c"/></svg>
<svg class="a" style="left:2469px;top:73px;" width="40" height="40" viewBox="0 0 40 40"><rect x="6" y="6" width="24" height="18" fill="#dadada"/><rect x="1" y="2" width="7" height="24" rx="3.5" fill="#dadada" stroke="#555" stroke-width="0.8"/><rect x="12" y="14" width="14" height="7" fill="#f4b01c"/><path d="M19 21 V32 H26 M19 26 H26" fill="none" stroke="#f4b01c" stroke-width="2"/><rect x="25" y="22" width="6" height="6" fill="#f4b01c"/><rect x="25" y="29" width="6" height="6" fill="#f4b01c"/></svg>
<svg class="a" style="left:2515px;top:73px;" width="40" height="40" viewBox="0 0 40 40"><rect x="6" y="6" width="24" height="18" fill="#dadada"/><rect x="1" y="2" width="7" height="24" rx="3.5" fill="#dadada" stroke="#555" stroke-width="0.8"/><rect x="16" y="16" width="6" height="6" fill="#f4b01c"/><rect x="27" y="20" width="6" height="6" fill="#f4b01c"/><rect x="16" y="29" width="6" height="6" fill="#f4b01c"/><path d="M19 22 V29 M22 19 H30 V20" fill="none" stroke="#f4b01c" stroke-width="2"/></svg>
<svg class="a" style="left:2559px;top:73px;" width="6" height="38" viewBox="0 0 6 38"><rect x="0" y="0" width="2" height="2" fill="#cfcfcf"/><rect x="0" y="4" width="2" height="2" fill="#cfcfcf"/><rect x="0" y="8" width="2" height="2" fill="#cfcfcf"/><rect x="0" y="12" width="2" height="2" fill="#cfcfcf"/><rect x="0" y="16" width="2" height="2" fill="#cfcfcf"/><rect x="0" y="20" width="2" height="2" fill="#cfcfcf"/><rect x="0" y="24" width="2" height="2" fill="#cfcfcf"/><rect x="0" y="28" width="2" height="2" fill="#cfcfcf"/><rect x="0" y="32" width="2" height="2" fill="#cfcfcf"/><rect x="0" y="36" width="2" height="2" fill="#cfcfcf"/><rect x="3" y="0" width="2" height="2" fill="#cfcfcf"/><rect x="3" y="4" width="2" height="2" fill="#cfcfcf"/><rect x="3" y="8" width="2" height="2" fill="#cfcfcf"/><rect x="3" y="12" width="2" height="2" fill="#cfcfcf"/><rect x="3" y="16" width="2" height="2" fill="#cfcfcf"/><rect x="3" y="20" width="2" height="2" fill="#cfcfcf"/><rect x="3" y="24" width="2" height="2" fill="#cfcfcf"/><rect x="3" y="28" width="2" height="2" fill="#cfcfcf"/><rect x="3" y="32" width="2" height="2" fill="#cfcfcf"/><rect x="3" y="36" width="2" height="2" fill="#cfcfcf"/></svg>
<svg class="a" style="left:2575px;top:75px;" width="36" height="30" viewBox="0 0 36 30"><circle cx="8" cy="9" r="6" fill="#3fc4c6"/><circle cx="19" cy="8" r="6.5" fill="#3fc4c6"/><circle cx="8" cy="9" r="2.5" fill="#2b2b2b"/><circle cx="19" cy="8" r="2.8" fill="#2b2b2b"/><rect x="1" y="13" width="24" height="13" rx="2" fill="#3fc4c6"/><path d="M25 18 L33 13 V26 L25 22 Z" fill="#dadada"/><rect x="6" y="19" width="4" height="3" fill="#2b2b2b"/></svg>
<svg class="a" style="left:2623px;top:75px;" width="36" height="34" viewBox="0 0 36 34"><circle cx="8" cy="9" r="6" fill="#dadada"/><circle cx="19" cy="8" r="6.5" fill="#dadada"/><circle cx="8" cy="9" r="2.5" fill="#2b2b2b"/><circle cx="19" cy="8" r="2.8" fill="#2b2b2b"/><rect x="1" y="13" width="24" height="13" rx="2" fill="#dadada"/><path d="M25 18 L33 13 V26 L25 22 Z" fill="#dadada"/><rect x="6" y="19" width="4" height="3" fill="#2b2b2b"/><path d="M25 18 V32 M18 25 H32" stroke="#3fc4c6" stroke-width="4"/></svg>
<svg class="a" style="left:2675px;top:73px;" width="26" height="36" viewBox="0 0 26 36"><path d="M12.5 1 C20 1 24 6 24 12 C24 18 18 21 18 26 H7 C7 21 1 18 1 12 C1 6 5 1 12.5 1 Z" fill="#3fc4c6" stroke="#2a2a2a" stroke-width="1"/><rect x="7" y="27" width="11" height="2" fill="#dadada"/><rect x="7" y="30" width="11" height="2" fill="#dadada"/><path d="M8 33 H17 L12.5 36 Z" fill="#dadada"/></svg>
<svg class="a" style="left:2719px;top:73px;" width="34" height="36" viewBox="0 0 34 36"><path d="M17 1 L20 7 H14 Z" fill="#3fc4c6" transform="rotate(0 17 18)"/><path d="M17 1 L20 7 H14 Z" fill="#3fc4c6" transform="rotate(45 17 18)"/><path d="M17 1 L20 7 H14 Z" fill="#3fc4c6" transform="rotate(90 17 18)"/><path d="M17 1 L20 7 H14 Z" fill="#3fc4c6" transform="rotate(135 17 18)"/><path d="M17 1 L20 7 H14 Z" fill="#3fc4c6" transform="rotate(180 17 18)"/><path d="M17 1 L20 7 H14 Z" fill="#3fc4c6" transform="rotate(225 17 18)"/><path d="M17 1 L20 7 H14 Z" fill="#3fc4c6" transform="rotate(270 17 18)"/><path d="M17 1 L20 7 H14 Z" fill="#3fc4c6" transform="rotate(315 17 18)"/><circle cx="17" cy="18" r="10" fill="#dadada"/></svg>
<svg class="a" style="left:2766px;top:73px;" width="36" height="36" viewBox="0 0 36 36"><path d="M7 8 L11.0 14.4 H9.4 L12.600000000000001 20.0 H10.2 L13.4 25.6 H0.5999999999999996 L3.8 20.0 H1.3999999999999995 L4.6 14.4 H3.0 Z" fill="#3fc4c6" stroke="#2a2a2a" stroke-width="1"/><path d="M27 1 L31.5 8.2 H29.7 L33.3 14.5 H30.6 L34.2 20.8 H19.8 L23.4 14.5 H20.7 L24.3 8.2 H22.5 Z" fill="#3fc4c6" stroke="#2a2a2a" stroke-width="1"/><path d="M17 6 L22.25 14.4 H20.15 L24.35 21.75 H21.2 L25.4 29.1 H8.6 L12.8 21.75 H9.649999999999999 L13.85 14.4 H11.75 Z" fill="#dadada" stroke="#2a2a2a" stroke-width="1"/><rect x="16" y="29" width="2" height="5" fill="#dadada"/></svg>
<svg class="a" style="left:2816px;top:73px;" width="32" height="36" viewBox="0 0 32 36"><defs><clipPath id="htc"><path d="M15 1 L21.75 11.8 H19.05 L24.450000000000003 21.25 H20.4 L25.8 30.700000000000003 H4.199999999999999 L9.6 21.25 H5.549999999999999 L10.95 11.8 H8.25 Z" fill="#dadada" /></clipPath></defs><path d="M15 1 L21.75 11.8 H19.05 L24.450000000000003 21.25 H20.4 L25.8 30.700000000000003 H4.199999999999999 L9.6 21.25 H5.549999999999999 L10.95 11.8 H8.25 Z" fill="#dadada" stroke="#2a2a2a" stroke-width="1"/><g clip-path="url(#htc)"><rect x="0" y="0" width="15" height="36" fill="#2a3a3a"/><rect x="0" y="0" width="2" height="2" fill="#3fc4c6"/><rect x="0" y="4" width="2" height="2" fill="#3fc4c6"/><rect x="0" y="8" width="2" height="2" fill="#3fc4c6"/><rect x="0" y="12" width="2" height="2" fill="#3fc4c6"/><rect x="0" y="16" width="2" height="2" fill="#3fc4c6"/><rect x="0" y="20" width="2" height="2" fill="#3fc4c6"/><rect x="0" y="24" width="2" height="2" fill="#3fc4c6"/><rect x="0" y="28" width="2" height="2" fill="#3fc4c6"/><rect x="0" y="32" width="2" height="2" fill="#3fc4c6"/><rect x="2" y="2" width="2" height="2" fill="#3fc4c6"/><rect x="2" y="6" width="2" height="2" fill="#3fc4c6"/><rect x="2" y="10" width="2" height="2" fill="#3fc4c6"/><rect x="2" y="14" width="2" height="2" fill="#3fc4c6"/><rect x="2" y="18" width="2" height="2" fill="#3fc4c6"/><rect x="2" y="22" width="2" height="2" fill="#3fc4c6"/><rect x="2" y="26" width="2" height="2" fill="#3fc4c6"/><rect x="2" y="30" width="2" height="2" fill="#3fc4c6"/><rect x="2" y="34" width="2" height="2" fill="#3fc4c6"/><rect x="4" y="0" width="2" height="2" fill="#3fc4c6"/><rect x="4" y="4" width="2" height="2" fill="#3fc4c6"/><rect x="4" y="8" width="2" height="2" fill="#3fc4c6"/><rect x="4" y="12" width="2" height="2" fill="#3fc4c6"/><rect x="4" y="16" width="2" height="2" fill="#3fc4c6"/><rect x="4" y="20" width="2" height="2" fill="#3fc4c6"/><rect x="4" y="24" width="2" height="2" fill="#3fc4c6"/><rect x="4" y="28" width="2" height="2" fill="#3fc4c6"/><rect x="4" y="32" width="2" height="2" fill="#3fc4c6"/><rect x="6" y="2" width="2" height="2" fill="#3fc4c6"/><rect x="6" y="6" width="2" height="2" fill="#3fc4c6"/><rect x="6" y="10" width="2" height="2" fill="#3fc4c6"/><rect x="6" y="14" width="2" height="2" fill="#3fc4c6"/><rect x="6" y="18" width="2" height="2" fill="#3fc4c6"/><rect x="6" y="22" width="2" height="2" fill="#3fc4c6"/><rect x="6" y="26" width="2" height="2" fill="#3fc4c6"/><rect x="6" y="30" width="2" height="2" fill="#3fc4c6"/><rect x="6" y="34" width="2" height="2" fill="#3fc4c6"/><rect x="8" y="0" width="2" height="2" fill="#3fc4c6"/><rect x="8" y="4" width="2" height="2" fill="#3fc4c6"/><rect x="8" y="8" width="2" height="2" fill="#3fc4c6"/><rect x="8" y="12" width="2" height="2" fill="#3fc4c6"/><rect x="8" y="16" width="2" height="2" fill="#3fc4c6"/><rect x="8" y="20" width="2" height="2" fill="#3fc4c6"/><rect x="8" y="24" width="2" height="2" fill="#3fc4c6"/><rect x="8" y="28" width="2" height="2" fill="#3fc4c6"/><rect x="8" y="32" width="2" height="2" fill="#3fc4c6"/><rect x="10" y="2" width="2" height="2" fill="#3fc4c6"/><rect x="10" y="6" width="2" height="2" fill="#3fc4c6"/><rect x="10" y="10" width="2" height="2" fill="#3fc4c6"/><rect x="10" y="14" width="2" height="2" fill="#3fc4c6"/><rect x="10" y="18" width="2" height="2" fill="#3fc4c6"/><rect x="10" y="22" width="2" height="2" fill="#3fc4c6"/><rect x="10" y="26" width="2" height="2" fill="#3fc4c6"/><rect x="10" y="30" width="2" height="2" fill="#3fc4c6"/><rect x="10" y="34" width="2" height="2" fill="#3fc4c6"/><rect x="12" y="0" width="2" height="2" fill="#3fc4c6"/><rect x="12" y="4" width="2" height="2" fill="#3fc4c6"/><rect x="12" y="8" width="2" height="2" fill="#3fc4c6"/><rect x="12" y="12" width="2" height="2" fill="#3fc4c6"/><rect x="12" y="16" width="2" height="2" fill="#3fc4c6"/><rect x="12" y="20" width="2" height="2" fill="#3fc4c6"/><rect x="12" y="24" width="2" height="2" fill="#3fc4c6"/><rect x="12" y="28" width="2" height="2" fill="#3fc4c6"/><rect x="12" y="32" width="2" height="2" fill="#3fc4c6"/><rect x="14" y="2" width="2" height="2" fill="#3fc4c6"/><rect x="14" y="6" width="2" height="2" fill="#3fc4c6"/><rect x="14" y="10" width="2" height="2" fill="#3fc4c6"/><rect x="14" y="14" width="2" height="2" fill="#3fc4c6"/><rect x="14" y="18" width="2" height="2" fill="#3fc4c6"/><rect x="14" y="22" width="2" height="2" fill="#3fc4c6"/><rect x="14" y="26" width="2" height="2" fill="#3fc4c6"/><rect x="14" y="30" width="2" height="2" fill="#3fc4c6"/><rect x="14" y="34" width="2" height="2" fill="#3fc4c6"/></g><rect x="15" y="30" width="2" height="5" fill="#dadada"/></svg>
<svg class="a" style="left:2863px;top:76px;" width="34" height="30" viewBox="0 0 34 30"><rect x="1" y="1" width="32" height="27" rx="3" fill="#dadada" stroke="#2a2a2a"/><path d="M10 4 L14.25 10.8 H12.55 L15.95 16.75 H13.4 L16.8 22.7 H3.2 L6.6 16.75 H4.05 L7.45 10.8 H5.75 Z" fill="#3a3a3a" stroke="#2a2a2a" stroke-width="1"/><rect x="20" y="6" width="7" height="2.5" fill="#3a3a3a"/><rect x="28" y="6" width="2.5" height="2.5" fill="#3a3a3a"/><rect x="20" y="10" width="7" height="2.5" fill="#3a3a3a"/><rect x="28" y="10" width="2.5" height="2.5" fill="#3a3a3a"/><rect x="20" y="14" width="7" height="2.5" fill="#3a3a3a"/><rect x="28" y="14" width="2.5" height="2.5" fill="#3a3a3a"/><rect x="20" y="18" width="7" height="2.5" fill="#3a3a3a"/><rect x="28" y="18" width="2.5" height="2.5" fill="#3a3a3a"/><rect x="20" y="22" width="7" height="2.5" fill="#3a3a3a"/><rect x="28" y="22" width="2.5" height="2.5" fill="#3a3a3a"/></svg>
<svg class="a" style="left:2914px;top:73px;" width="28" height="36" viewBox="0 0 28 36"><path d="M1 1 H26 V28 L20 34 H1 Z" fill="#dadada" stroke="#2a2a2a"/><path d="M13 4 L17.75 11.6 H15.85 L19.65 18.25 H16.8 L20.6 24.9 H5.4 L9.2 18.25 H6.3500000000000005 L10.15 11.6 H8.25 Z" fill="#3a3a3a" stroke="#2a2a2a" stroke-width="1"/><path d="M20 34 V28 H26" fill="none" stroke="#2a2a2a"/></svg>
<svg class="a" style="left:2958px;top:76px;" width="36" height="34" viewBox="0 0 36 34"><circle cx="21" cy="16" r="11" fill="none" stroke="#dadada" stroke-width="6"/><path d="M6 6 C10 3 14 3 16 4 L12 8 L17 8 L8 14 L13 14 L4 20 C2 14 3 9 6 6 Z" fill="#dadada"/></svg>
<svg class="a" style="left:3006px;top:73px;" width="36" height="36" viewBox="0 0 36 36"><rect x="6.5" y="9.5" width="22" height="25" fill="#444" stroke="#dadada" stroke-width="2"/><rect x="3.5" y="6.5" width="22" height="25" fill="#444" stroke="#dadada" stroke-width="2"/><rect x="1" y="1" width="24" height="25" fill="#2b2b2b" stroke="#dadada" stroke-width="2"/><circle cx="13" cy="13.5" r="9" fill="#3fc4c6"/><circle cx="9.5" cy="9" r="2.5" fill="#2b2b2b"/></svg>
<svg class="a" style="left:3060px;top:73px;" width="26" height="36" viewBox="0 0 26 36"><path d="M12.5 1.5 C20 1.5 24 6 24 12 C24 18 18 21 18 25 H7 C7 21 1 18 1 12 C1 6 5 1.5 12.5 1.5 Z" fill="#444" stroke="#dadada" stroke-width="2"/><circle cx="12.5" cy="11" r="6" fill="none" stroke="#dadada" stroke-width="2.5" stroke-dasharray="2 1.2"/><circle cx="12.5" cy="11" r="3" fill="#3fc4c6"/><rect x="8" y="26" width="9" height="2" fill="#dadada"/><rect x="8" y="29" width="9" height="2" fill="#dadada"/><path d="M9 32 H16 L12.5 35 Z" fill="#dadada"/></svg>
<svg class="a" style="left:3102px;top:75px;" width="36" height="34" viewBox="0 0 36 34"><rect x="1" y="1" width="34" height="4" fill="#3fc4c6"/><rect x="2" y="7" width="22" height="23" fill="none" stroke="#dadada" stroke-width="2"/><rect x="26" y="6" width="9" height="25" fill="#3fc4c6"/><rect x="27" y="10" width="7" height="1" fill="#2b2b2b"/><rect x="27" y="14" width="7" height="1" fill="#2b2b2b"/><rect x="27" y="18" width="7" height="1" fill="#2b2b2b"/><rect x="27" y="22" width="7" height="1" fill="#2b2b2b"/></svg>
<svg class="a" style="left:3150px;top:75px;" width="36" height="34" viewBox="0 0 36 34"><rect x="1" y="1" width="34" height="4" fill="#dadada"/><rect x="2" y="7" width="22" height="23" fill="none" stroke="#dadada" stroke-width="2"/><path d="M8 11 L20 18.5 L8 26 Z" fill="#3fc4c6"/><rect x="26" y="6" width="9" height="25" fill="#dadada"/><rect x="27" y="10" width="7" height="1" fill="#2b2b2b"/><rect x="27" y="14" width="7" height="1" fill="#2b2b2b"/><rect x="27" y="18" width="7" height="1" fill="#2b2b2b"/><rect x="27" y="22" width="7" height="1" fill="#2b2b2b"/></svg>
<svg class="a" style="left:3198px;top:75px;" width="36" height="32" viewBox="0 0 36 32"><rect x="2" y="2" width="32" height="27" rx="3" fill="none" stroke="#dadada" stroke-width="2"/><path d="M18 2 V29 M2 15.5 H34" stroke="#dadada" stroke-width="1.8"/><path d="M12 8 L24 15.5 L12 23 Z" fill="#3fc4c6"/></svg>
<svg class="a" style="left:3245px;top:78px;" width="38" height="26" viewBox="0 0 38 26"><path d="M3 8 C2 5 6 5 8 7 C12 4 24 4 27 8 C30 6 33 3 36 4 C33 8 30 14 28 18 C24 23 10 23 7 18 C4 15 3 11 3 8 Z" fill="#dadada" stroke="#222" stroke-width="1"/><rect x="15" y="1" width="5" height="4" fill="#dadada"/><path d="M11 9 V19 M15 9 V19" stroke="#222" stroke-width="2"/><path d="M18 9 L25 14 L18 19 Z" fill="none" stroke="#222" stroke-width="1.8"/></svg>
<div class="a" style="left:0px;top:117px;width:3840px;height:29px;background:#4e4e4e;"></div>
<div class="a" style="left:14px;top:116px;width:3826px;height:1px;background:#5f5f5f;"></div>
<div class="a" style="left:0px;top:146px;width:3840px;height:1px;background:#2e2e2e;"></div>
<div class="a" style="left:21px;top:121px;width:122px;height:26px;background:linear-gradient(#5a5a5a,#525252);border:1px solid #3a3a3a;border-bottom:none;border-top-color:#6a6a6a"></div>
<div class="t" style="left:56.0px;top:125.4px;font-size:17.8px;color:#e2e2e2;font-weight:400;">Modeling</div>
<div class="t" style="left:181.7px;top:125.7px;font-size:17.5px;color:#cfcfcf;font-weight:400;">Freeform</div>
<div class="t" style="left:323.0px;top:125.7px;font-size:17.5px;color:#cfcfcf;font-weight:400;">Selection</div>
<div class="t" style="left:464.0px;top:125.7px;font-size:17.5px;color:#cfcfcf;font-weight:400;">Object Paint</div>
<div class="t" style="left:629.0px;top:125.7px;font-size:17.5px;color:#cfcfcf;font-weight:400;">Populate</div>
<svg class="a" style="left:745px;top:126px;" width="38" height="14" viewBox="0 0 38 14"><rect x="1" y="1" width="20" height="11" rx="3" fill="#dadada"/><path d="M6 9 L11 4 L16 9 Z" fill="#333"/><path d="M28 5 H36 L32 9 Z" fill="#dadada"/></svg>
<div class="a" style="left:0px;top:147px;width:3840px;height:146px;background:linear-gradient(#464646,#363636);"></div>
<div class="a" style="left:349px;top:291px;width:3491px;height:2px;background:#2c2c2c;"></div>
<div class="a" style="left:14px;top:147px;width:2px;height:146px;background:#3a3a3a;"></div>
<div class="a" style="left:16px;top:147px;width:333px;height:145px;background:#595959;border:1px solid #3c3c3c;border-top:none"></div>
<div class="a" style="left:17px;top:266px;width:331px;height:26px;background:linear-gradient(#5e5e5e,#4f4f4f);"></div>
<div class="t" style="left:101.0px;top:271.6px;font-size:17.6px;color:#e6e6e6;font-weight:400;">Polygon Modeling</div>
<svg class="a" style="left:254px;top:276px;" width="14" height="8" viewBox="0 0 14 8"><path d="M1 1 H13 L7 7 Z" fill="#dadada"/></svg>
<div class="a" style="left:23px;top:153px;width:44px;height:32px;background:linear-gradient(#606060,#575757);border:1px solid #383838"></div>
<svg class="a" style="left:23px;top:153px;" width="44" height="32" viewBox="0 0 44 32"><circle cx="17" cy="13" r="1.6" fill="none" stroke="#7a7a7a"/><circle cx="29" cy="9" r="1.8" fill="none" stroke="#7a7a7a"/><circle cx="21" cy="20" r="1.8" fill="none" stroke="#7a7a7a"/></svg>
<div class="a" style="left:67px;top:153px;width:44px;height:32px;background:linear-gradient(#606060,#575757);border:1px solid #383838"></div>
<svg class="a" style="left:67px;top:153px;" width="44" height="32" viewBox="0 0 44 32"><path d="M11 17 L31 7 L23 26 Z" fill="none" stroke="#7a7a7a" stroke-width="1.6"/></svg>
<div class="a" style="left:111px;top:153px;width:44px;height:32px;background:linear-gradient(#606060,#575757);border:1px solid #383838"></div>
<svg class="a" style="left:111px;top:153px;" width="44" height="32" viewBox="0 0 44 32"><path d="M17 6 C25 4 27 12 26 18 C25 26 16 28 15 22 C14 17 19 14 17 10 Z" fill="none" stroke="#7a7a7a" stroke-width="1.6"/></svg>
<div class="a" style="left:155px;top:153px;width:44px;height:32px;background:linear-gradient(#606060,#575757);border:1px solid #383838"></div>
<svg class="a" style="left:155px;top:153px;" width="44" height="32" viewBox="0 0 44 32"><rect x="12" y="7" width="19" height="19" fill="#7c7c7c"/></svg>
<div class="a" style="left:199px;top:153px;width:43px;height:32px;background:linear-gradient(#606060,#575757);border:1px solid #383838"></div>
<svg class="a" style="left:199px;top:153px;" width="43" height="32" viewBox="0 0 43 32"><path d="M11 10 L18 6 L30 8 V22 L22 26 L11 23 Z" fill="#777"/></svg>
<div class="a" style="left:23px;top:225px;width:36px;height:31px;background:linear-gradient(#606060,#575757);border:1px solid #383838"></div>
<svg class="a" style="left:23px;top:225px;" width="36" height="31" viewBox="0 0 36 31"><path d="M8 11 L17 7 L27 9 V24 L18 28 L8 25 Z" fill="#7a7a7a"/><path d="M21 12 V29 L25 26 L27 30" fill="none" stroke="#444" stroke-width="1.5"/></svg>
<div class="a" style="left:59px;top:225px;width:37px;height:31px;background:linear-gradient(#606060,#575757);border:1px solid #383838"></div>
<svg class="a" style="left:59px;top:225px;" width="37" height="31" viewBox="0 0 37 31"><path d="M8 11 L17 7 L27 9 V24 L18 28 L8 25 Z" fill="#7a7a7a"/><path d="M21 12 V29 L25 26 L27 30" fill="none" stroke="#444" stroke-width="1.5"/></svg>
<div class="a" style="left:96px;top:225px;width:34px;height:31px;background:linear-gradient(#606060,#575757);border:1px solid #383838"></div>
<svg class="a" style="left:96px;top:225px;" width="34" height="31" viewBox="0 0 34 31"><path d="M8 11 L17 7 L27 9 V24 L18 28 L8 25 Z" fill="#7a7a7a"/><path d="M21 12 V29 L25 26 L27 30" fill="none" stroke="#444" stroke-width="1.5"/></svg>
<div class="a" style="left:137px;top:225px;width:35px;height:31px;background:linear-gradient(#606060,#575757);border:1px solid #383838"></div>
<svg class="a" style="left:137px;top:225px;" width="35" height="31" viewBox="0 0 35 31"><path d="M8 11 L17 7 L27 9 V24 L18 28 L8 25 Z" fill="none" stroke="#777" stroke-width="2"/><circle cx="26" cy="20" r="4" fill="#777"/></svg>
<div class="a" style="left:179px;top:225px;width:59px;height:31px;background:linear-gradient(#606060,#575757);border:1px solid #383838"></div>
<svg class="a" style="left:179px;top:225px;" width="59" height="31" viewBox="0 0 59 31"><circle cx="29" cy="16" r="8" fill="#6e6e6e"/></svg>
<div class="a" style="left:252px;top:152px;width:2px;height:108px;background:#3a3a3a;"></div>
<div class="a" style="left:260px;top:172px;width:34px;height:30px;background:linear-gradient(#606060,#575757);border:1px solid #383838"></div>
<svg class="a" style="left:260px;top:172px;" width="34" height="30" viewBox="0 0 34 30"><path d="M8 8 H22 M8 12 H20 M8 16 H20 M8 20 H20 M8 24 H22" stroke="#6e6e6e" stroke-width="1.5"/><path d="M26 26 V8 L22 12 M26 8 L30 12" fill="none" stroke="#777" stroke-width="2"/></svg>
<div class="a" style="left:260px;top:207px;width:34px;height:31px;background:linear-gradient(#606060,#575757);border:1px solid #383838"></div>
<svg class="a" style="left:260px;top:207px;" width="34" height="31" viewBox="0 0 34 31"><path d="M8 8 H22 M8 12 H20 M8 16 H20 M8 20 H20" stroke="#6e6e6e" stroke-width="1.5"/><path d="M26 6 V22 L22 18 M26 22 L30 18" fill="none" stroke="#777" stroke-width="2"/></svg>
<div class="a" style="left:302px;top:153px;width:34px;height:32px;background:linear-gradient(#cfe6fb,#a9d0f5);border:2px solid #2f7de0"></div>
<svg class="a" style="left:302px;top:153px;" width="34" height="32" viewBox="0 0 34 32"><path d="M12 6 C17 6 19 10 18 14 C17 17 15 18 15 22 H10 C10 18 7 17 7 13 C7 9 9 6 12 6 Z" fill="#9fc7e6" stroke="#667" stroke-width="1"/><rect x="10" y="23" width="5" height="3" fill="#888"/><rect x="21" y="5" width="6" height="22" fill="#eee" stroke="#111" stroke-width="2"/></svg>
<div class="a" style="left:302px;top:189px;width:34px;height:31px;background:linear-gradient(#606060,#575757);border:1px solid #383838"></div>
<svg class="a" style="left:302px;top:189px;" width="34" height="31" viewBox="0 0 34 31"><path d="M4 16 H14" stroke="#6a6a6a" stroke-width="1.5"/><path d="M14 11 L20 13 H26 V10 L29 10 V22 L26 22 V19 H20 L14 21 Z" fill="#6c6c6c"/></svg>
<div class="a" style="left:302px;top:225px;width:34px;height:32px;background:linear-gradient(#cfe6fb,#a9d0f5);border:2px solid #2f7de0"></div>
<svg class="a" style="left:302px;top:225px;" width="34" height="32" viewBox="0 0 34 32"><path d="M7 5 H17 L15 8 V26 H9 V8 Z" fill="#5fb6dc" stroke="#333" stroke-width="1.6"/><path d="M24 27 V7 M20 12 L24 6 L28 12" fill="none" stroke="#222" stroke-width="2"/></svg>
<div class="a" style="left:0px;top:293px;width:3840px;height:8px;background:#444;"></div>
<div class="a" style="left:60px;top:296px;width:3350px;height:5px;background:#3c3b42;"></div>
<div class="a" style="left:0px;top:292px;width:349px;height:1px;background:#3a3a3a;"></div>
<div class="a" style="left:0px;top:117px;width:14px;height:176px;background:#444;"></div>
<div class="a" style="left:12px;top:117px;width:2px;height:176px;background:#3a3a3a;"></div>
<svg class="a" style="left:3px;top:119px;" width="6" height="173" viewBox="0 0 6 173"><rect x="0" y="0" width="2" height="2" fill="#d8d8d8"/><rect x="0" y="4" width="2" height="2" fill="#d8d8d8"/><rect x="0" y="8" width="2" height="2" fill="#d8d8d8"/><rect x="0" y="12" width="2" height="2" fill="#d8d8d8"/><rect x="0" y="16" width="2" height="2" fill="#d8d8d8"/><rect x="0" y="20" width="2" height="2" fill="#d8d8d8"/><rect x="0" y="24" width="2" height="2" fill="#d8d8d8"/><rect x="0" y="28" width="2" height="2" fill="#d8d8d8"/><rect x="0" y="32" width="2" height="2" fill="#d8d8d8"/><rect x="0" y="36" width="2" height="2" fill="#d8d8d8"/><rect x="0" y="40" width="2" height="2" fill="#d8d8d8"/><rect x="0" y="44" width="2" height="2" fill="#d8d8d8"/><rect x="0" y="48" width="2" height="2" fill="#d8d8d8"/><rect x="0" y="52" width="2" height="2" fill="#d8d8d8"/><rect x="0" y="56" width="2" height="2" fill="#d8d8d8"/><rect x="0" y="60" width="2" height="2" fill="#d8d8d8"/><rect x="0" y="64" width="2" height="2" fill="#d8d8d8"/><rect x="0" y="68" width="2" height="2" fill="#d8d8d8"/><rect x="0" y="72" width="2" height="2" fill="#d8d8d8"/><rect x="0" y="76" width="2" height="2" fill="#d8d8d8"/><rect x="0" y="80" width="2" height="2" fill="#d8d8d8"/><rect x="0" y="84" width="2" height="2" fill="#d8d8d8"/><rect x="0" y="88" width="2" height="2" fill="#d8d8d8"/><rect x="0" y="92" width="2" height="2" fill="#d8d8d8"/><rect x="0" y="96" width="2" height="2" fill="#d8d8d8"/><rect x="0" y="100" width="2" height="2" fill="#d8d8d8"/><rect x="0" y="104" width="2" height="2" fill="#d8d8d8"/><rect x="0" y="108" width="2" height="2" fill="#d8d8d8"/><rect x="0" y="112" width="2" height="2" fill="#d8d8d8"/><rect x="0" y="116" width="2" height="2" fill="#d8d8d8"/><rect x="0" y="120" width="2" height="2" fill="#d8d8d8"/><rect x="0" y="124" width="2" height="2" fill="#d8d8d8"/><rect x="0" y="128" width="2" height="2" fill="#d8d8d8"/><rect x="0" y="132" width="2" height="2" fill="#d8d8d8"/><rect x="0" y="136" width="2" height="2" fill="#d8d8d8"/><rect x="0" y="140" width="2" height="2" fill="#d8d8d8"/><rect x="0" y="144" width="2" height="2" fill="#d8d8d8"/><rect x="0" y="148" width="2" height="2" fill="#d8d8d8"/><rect x="0" y="152" width="2" height="2" fill="#d8d8d8"/><rect x="0" y="156" width="2" height="2" fill="#d8d8d8"/><rect x="0" y="160" width="2" height="2" fill="#d8d8d8"/><rect x="0" y="164" width="2" height="2" fill="#d8d8d8"/><rect x="0" y="168" width="2" height="2" fill="#d8d8d8"/><rect x="0" y="172" width="2" height="2" fill="#d8d8d8"/><rect x="3" y="0" width="2" height="2" fill="#d8d8d8"/><rect x="3" y="4" width="2" height="2" fill="#d8d8d8"/><rect x="3" y="8" width="2" height="2" fill="#d8d8d8"/><rect x="3" y="12" width="2" height="2" fill="#d8d8d8"/><rect x="3" y="16" width="2" height="2" fill="#d8d8d8"/><rect x="3" y="20" width="2" height="2" fill="#d8d8d8"/><rect x="3" y="24" width="2" height="2" fill="#d8d8d8"/><rect x="3" y="28" width="2" height="2" fill="#d8d8d8"/><rect x="3" y="32" width="2" height="2" fill="#d8d8d8"/><rect x="3" y="36" width="2" height="2" fill="#d8d8d8"/><rect x="3" y="40" width="2" height="2" fill="#d8d8d8"/><rect x="3" y="44" width="2" height="2" fill="#d8d8d8"/><rect x="3" y="48" width="2" height="2" fill="#d8d8d8"/><rect x="3" y="52" width="2" height="2" fill="#d8d8d8"/><rect x="3" y="56" width="2" height="2" fill="#d8d8d8"/><rect x="3" y="60" width="2" height="2" fill="#d8d8d8"/><rect x="3" y="64" width="2" height="2" fill="#d8d8d8"/><rect x="3" y="68" width="2" height="2" fill="#d8d8d8"/><rect x="3" y="72" width="2" height="2" fill="#d8d8d8"/><rect x="3" y="76" width="2" height="2" fill="#d8d8d8"/><rect x="3" y="80" width="2" height="2" fill="#d8d8d8"/><rect x="3" y="84" width="2" height="2" fill="#d8d8d8"/><rect x="3" y="88" width="2" height="2" fill="#d8d8d8"/><rect x="3" y="92" width="2" height="2" fill="#d8d8d8"/><rect x="3" y="96" width="2" height="2" fill="#d8d8d8"/><rect x="3" y="100" width="2" height="2" fill="#d8d8d8"/><rect x="3" y="104" width="2" height="2" fill="#d8d8d8"/><rect x="3" y="108" width="2" height="2" fill="#d8d8d8"/><rect x="3" y="112" width="2" height="2" fill="#d8d8d8"/><rect x="3" y="116" width="2" height="2" fill="#d8d8d8"/><rect x="3" y="120" width="2" height="2" fill="#d8d8d8"/><rect x="3" y="124" width="2" height="2" fill="#d8d8d8"/><rect x="3" y="128" width="2" height="2" fill="#d8d8d8"/><rect x="3" y="132" width="2" height="2" fill="#d8d8d8"/><rect x="3" y="136" width="2" height="2" fill="#d8d8d8"/><rect x="3" y="140" width="2" height="2" fill="#d8d8d8"/><rect x="3" y="144" width="2" height="2" fill="#d8d8d8"/><rect x="3" y="148" width="2" height="2" fill="#d8d8d8"/><rect x="3" y="152" width="2" height="2" fill="#d8d8d8"/><rect x="3" y="156" width="2" height="2" fill="#d8d8d8"/><rect x="3" y="160" width="2" height="2" fill="#d8d8d8"/><rect x="3" y="164" width="2" height="2" fill="#d8d8d8"/><rect x="3" y="168" width="2" height="2" fill="#d8d8d8"/><rect x="3" y="172" width="2" height="2" fill="#d8d8d8"/></svg>
<div class="a" style="left:0px;top:301px;width:60px;height:12px;background:#444;"></div>
<svg class="a" style="left:3px;top:304px;" width="54" height="6" viewBox="0 0 54 6"><rect x="0" y="0" width="2" height="2" fill="#d8d8d8"/><rect x="4" y="0" width="2" height="2" fill="#d8d8d8"/><rect x="8" y="0" width="2" height="2" fill="#d8d8d8"/><rect x="12" y="0" width="2" height="2" fill="#d8d8d8"/><rect x="16" y="0" width="2" height="2" fill="#d8d8d8"/><rect x="20" y="0" width="2" height="2" fill="#d8d8d8"/><rect x="24" y="0" width="2" height="2" fill="#d8d8d8"/><rect x="28" y="0" width="2" height="2" fill="#d8d8d8"/><rect x="32" y="0" width="2" height="2" fill="#d8d8d8"/><rect x="36" y="0" width="2" height="2" fill="#d8d8d8"/><rect x="40" y="0" width="2" height="2" fill="#d8d8d8"/><rect x="44" y="0" width="2" height="2" fill="#d8d8d8"/><rect x="48" y="0" width="2" height="2" fill="#d8d8d8"/><rect x="52" y="0" width="2" height="2" fill="#d8d8d8"/><rect x="0" y="3" width="2" height="2" fill="#d8d8d8"/><rect x="4" y="3" width="2" height="2" fill="#d8d8d8"/><rect x="8" y="3" width="2" height="2" fill="#d8d8d8"/><rect x="12" y="3" width="2" height="2" fill="#d8d8d8"/><rect x="16" y="3" width="2" height="2" fill="#d8d8d8"/><rect x="20" y="3" width="2" height="2" fill="#d8d8d8"/><rect x="24" y="3" width="2" height="2" fill="#d8d8d8"/><rect x="28" y="3" width="2" height="2" fill="#d8d8d8"/><rect x="32" y="3" width="2" height="2" fill="#d8d8d8"/><rect x="36" y="3" width="2" height="2" fill="#d8d8d8"/><rect x="40" y="3" width="2" height="2" fill="#d8d8d8"/><rect x="44" y="3" width="2" height="2" fill="#d8d8d8"/><rect x="48" y="3" width="2" height="2" fill="#d8d8d8"/><rect x="52" y="3" width="2" height="2" fill="#d8d8d8"/></svg>
<div class="a" style="left:0px;top:313px;width:60px;height:1616px;background:#2e2e2e;"></div>
<div class="a" style="left:59px;top:313px;width:1px;height:1616px;background:#161616;"></div>
<div class="a" style="left:15px;top:1818px;width:28px;height:27px;background:#474747;border-radius:4px"></div>
<svg class="a" style="left:15px;top:1818px;" width="28" height="27" viewBox="0 0 28 27"><path d="M11 8 L19 13.5 L11 19 Z" fill="#dadada"/></svg>
<div class="a" style="left:5px;top:1862px;width:55px;height:65px;background:#4a86d0;border-radius:6px 0 0 6px"></div>
<div class="a" style="left:11px;top:1873px;width:45px;height:41px;background:linear-gradient(#5b6674,#6a7480);border:1.5px solid #202020;border-radius:3px"></div>
<div class="a" style="left:3404px;top:296px;width:436px;height:1634px;background:#444;"></div>
<svg class="a" style="left:3413px;top:305px;" width="421" height="6" viewBox="0 0 421 6"><rect x="0" y="0" width="2" height="2" fill="#d8d8d8"/><rect x="4" y="0" width="2" height="2" fill="#d8d8d8"/><rect x="8" y="0" width="2" height="2" fill="#d8d8d8"/><rect x="12" y="0" width="2" height="2" fill="#d8d8d8"/><rect x="16" y="0" width="2" height="2" fill="#d8d8d8"/><rect x="20" y="0" width="2" height="2" fill="#d8d8d8"/><rect x="24" y="0" width="2" height="2" fill="#d8d8d8"/><rect x="28" y="0" width="2" height="2" fill="#d8d8d8"/><rect x="32" y="0" width="2" height="2" fill="#d8d8d8"/><rect x="36" y="0" width="2" height="2" fill="#d8d8d8"/><rect x="40" y="0" width="2" height="2" fill="#d8d8d8"/><rect x="44" y="0" width="2" height="2" fill="#d8d8d8"/><rect x="48" y="0" width="2" height="2" fill="#d8d8d8"/><rect x="52" y="0" width="2" height="2" fill="#d8d8d8"/><rect x="56" y="0" width="2" height="2" fill="#d8d8d8"/><rect x="60" y="0" width="2" height="2" fill="#d8d8d8"/><rect x="64" y="0" width="2" height="2" fill="#d8d8d8"/><rect x="68" y="0" width="2" height="2" fill="#d8d8d8"/><rect x="72" y="0" width="2" height="2" fill="#d8d8d8"/><rect x="76" y="0" width="2" height="2" fill="#d8d8d8"/><rect x="80" y="0" width="2" height="2" fill="#d8d8d8"/><rect x="84" y="0" width="2" height="2" fill="#d8d8d8"/><rect x="88" y="0" width="2" height="2" fill="#d8d8d8"/><rect x="92" y="0" width="2" height="2" fill="#d8d8d8"/><rect x="96" y="0" width="2" height="2" fill="#d8d8d8"/><rect x="100" y="0" width="2" height="2" fill="#d8d8d8"/><rect x="104" y="0" width="2" height="2" fill="#d8d8d8"/><rect x="108" y="0" width="2" height="2" fill="#d8d8d8"/><rect x="112" y="0" width="2" height="2" fill="#d8d8d8"/><rect x="116" y="0" width="2" height="2" fill="#d8d8d8"/><rect x="120" y="0" width="2" height="2" fill="#d8d8d8"/><rect x="124" y="0" width="2" height="2" fill="#d8d8d8"/><rect x="128" y="0" width="2" height="2" fill="#d8d8d8"/><rect x="132" y="0" width="2" height="2" fill="#d8d8d8"/><rect x="136" y="0" width="2" height="2" fill="#d8d8d8"/><rect x="140" y="0" width="2" height="2" fill="#d8d8d8"/><rect x="144" y="0" width="2" height="2" fill="#d8d8d8"/><rect x="148" y="0" width="2" height="2" fill="#d8d8d8"/><rect x="152" y="0" width="2" height="2" fill="#d8d8d8"/><rect x="156" y="0" width="2" height="2" fill="#d8d8d8"/><rect x="160" y="0" width="2" height="2" fill="#d8d8d8"/><rect x="164" y="0" width="2" height="2" fill="#d8d8d8"/><rect x="168" y="0" width="2" height="2" fill="#d8d8d8"/><rect x="172" y="0" width="2" height="2" fill="#d8d8d8"/><rect x="176" y="0" width="2" height="2" fill="#d8d8d8"/><rect x="180" y="0" width="2" height="2" fill="#d8d8d8"/><rect x="184" y="0" width="2" height="2" fill="#d8d8d8"/><rect x="188" y="0" width="2" height="2" fill="#d8d8d8"/><rect x="192" y="0" width="2" height="2" fill="#d8d8d8"/><rect x="196" y="0" width="2" height="2" fill="#d8d8d8"/><rect x="200" y="0" width="2" height="2" fill="#d8d8d8"/><rect x="204" y="0" width="2" height="2" fill="#d8d8d8"/><rect x="208" y="0" width="2" height="2" fill="#d8d8d8"/><rect x="212" y="0" width="2" height="2" fill="#d8d8d8"/><rect x="216" y="0" width="2" height="2" fill="#d8d8d8"/><rect x="220" y="0" width="2" height="2" fill="#d8d8d8"/><rect x="224" y="0" width="2" height="2" fill="#d8d8d8"/><rect x="228" y="0" width="2" height="2" fill="#d8d8d8"/><rect x="232" y="0" width="2" height="2" fill="#d8d8d8"/><rect x="236" y="0" width="2" height="2" fill="#d8d8d8"/><rect x="240" y="0" width="2" height="2" fill="#d8d8d8"/><rect x="244" y="0" width="2" height="2" fill="#d8d8d8"/><rect x="248" y="0" width="2" height="2" fill="#d8d8d8"/><rect x="252" y="0" width="2" height="2" fill="#d8d8d8"/><rect x="256" y="0" width="2" height="2" fill="#d8d8d8"/><rect x="260" y="0" width="2" height="2" fill="#d8d8d8"/><rect x="264" y="0" width="2" height="2" fill="#d8d8d8"/><rect x="268" y="0" width="2" height="2" fill="#d8d8d8"/><rect x="272" y="0" width="2" height="2" fill="#d8d8d8"/><rect x="276" y="0" width="2" height="2" fill="#d8d8d8"/><rect x="280" y="0" width="2" height="2" fill="#d8d8d8"/><rect x="284" y="0" width="2" height="2" fill="#d8d8d8"/><rect x="288" y="0" width="2" height="2" fill="#d8d8d8"/><rect x="292" y="0" width="2" height="2" fill="#d8d8d8"/><rect x="296" y="0" width="2" height="2" fill="#d8d8d8"/><rect x="300" y="0" width="2" height="2" fill="#d8d8d8"/><rect x="304" y="0" width="2" height="2" fill="#d8d8d8"/><rect x="308" y="0" width="2" height="2" fill="#d8d8d8"/><rect x="312" y="0" width="2" height="2" fill="#d8d8d8"/><rect x="316" y="0" width="2" height="2" fill="#d8d8d8"/><rect x="320" y="0" width="2" height="2" fill="#d8d8d8"/><rect x="324" y="0" width="2" height="2" fill="#d8d8d8"/><rect x="328" y="0" width="2" height="2" fill="#d8d8d8"/><rect x="332" y="0" width="2" height="2" fill="#d8d8d8"/><rect x="336" y="0" width="2" height="2" fill="#d8d8d8"/><rect x="340" y="0" width="2" height="2" fill="#d8d8d8"/><rect x="344" y="0" width="2" height="2" fill="#d8d8d8"/><rect x="348" y="0" width="2" height="2" fill="#d8d8d8"/><rect x="352" y="0" width="2" height="2" fill="#d8d8d8"/><rect x="356" y="0" width="2" height="2" fill="#d8d8d8"/><rect x="360" y="0" width="2" height="2" fill="#d8d8d8"/><rect x="364" y="0" width="2" height="2" fill="#d8d8d8"/><rect x="368" y="0" width="2" height="2" fill="#d8d8d8"/><rect x="372" y="0" width="2" height="2" fill="#d8d8d8"/><rect x="376" y="0" width="2" height="2" fill="#d8d8d8"/><rect x="380" y="0" width="2" height="2" fill="#d8d8d8"/><rect x="384" y="0" width="2" height="2" fill="#d8d8d8"/><rect x="388" y="0" width="2" height="2" fill="#d8d8d8"/><rect x="392" y="0" width="2" height="2" fill="#d8d8d8"/><rect x="396" y="0" width="2" height="2" fill="#d8d8d8"/><rect x="400" y="0" width="2" height="2" fill="#d8d8d8"/><rect x="404" y="0" width="2" height="2" fill="#d8d8d8"/><rect x="408" y="0" width="2" height="2" fill="#d8d8d8"/><rect x="412" y="0" width="2" height="2" fill="#d8d8d8"/><rect x="416" y="0" width="2" height="2" fill="#d8d8d8"/><rect x="420" y="0" width="2" height="2" fill="#d8d8d8"/><rect x="0" y="3" width="2" height="2" fill="#d8d8d8"/><rect x="4" y="3" width="2" height="2" fill="#d8d8d8"/><rect x="8" y="3" width="2" height="2" fill="#d8d8d8"/><rect x="12" y="3" width="2" height="2" fill="#d8d8d8"/><rect x="16" y="3" width="2" height="2" fill="#d8d8d8"/><rect x="20" y="3" width="2" height="2" fill="#d8d8d8"/><rect x="24" y="3" width="2" height="2" fill="#d8d8d8"/><rect x="28" y="3" width="2" height="2" fill="#d8d8d8"/><rect x="32" y="3" width="2" height="2" fill="#d8d8d8"/><rect x="36" y="3" width="2" height="2" fill="#d8d8d8"/><rect x="40" y="3" width="2" height="2" fill="#d8d8d8"/><rect x="44" y="3" width="2" height="2" fill="#d8d8d8"/><rect x="48" y="3" width="2" height="2" fill="#d8d8d8"/><rect x="52" y="3" width="2" height="2" fill="#d8d8d8"/><rect x="56" y="3" width="2" height="2" fill="#d8d8d8"/><rect x="60" y="3" width="2" height="2" fill="#d8d8d8"/><rect x="64" y="3" width="2" height="2" fill="#d8d8d8"/><rect x="68" y="3" width="2" height="2" fill="#d8d8d8"/><rect x="72" y="3" width="2" height="2" fill="#d8d8d8"/><rect x="76" y="3" width="2" height="2" fill="#d8d8d8"/><rect x="80" y="3" width="2" height="2" fill="#d8d8d8"/><rect x="84" y="3" width="2" height="2" fill="#d8d8d8"/><rect x="88" y="3" width="2" height="2" fill="#d8d8d8"/><rect x="92" y="3" width="2" height="2" fill="#d8d8d8"/><rect x="96" y="3" width="2" height="2" fill="#d8d8d8"/><rect x="100" y="3" width="2" height="2" fill="#d8d8d8"/><rect x="104" y="3" width="2" height="2" fill="#d8d8d8"/><rect x="108" y="3" width="2" height="2" fill="#d8d8d8"/><rect x="112" y="3" width="2" height="2" fill="#d8d8d8"/><rect x="116" y="3" width="2" height="2" fill="#d8d8d8"/><rect x="120" y="3" width="2" height="2" fill="#d8d8d8"/><rect x="124" y="3" width="2" height="2" fill="#d8d8d8"/><rect x="128" y="3" width="2" height="2" fill="#d8d8d8"/><rect x="132" y="3" width="2" height="2" fill="#d8d8d8"/><rect x="136" y="3" width="2" height="2" fill="#d8d8d8"/><rect x="140" y="3" width="2" height="2" fill="#d8d8d8"/><rect x="144" y="3" width="2" height="2" fill="#d8d8d8"/><rect x="148" y="3" width="2" height="2" fill="#d8d8d8"/><rect x="152" y="3" width="2" height="2" fill="#d8d8d8"/><rect x="156" y="3" width="2" height="2" fill="#d8d8d8"/><rect x="160" y="3" width="2" height="2" fill="#d8d8d8"/><rect x="164" y="3" width="2" height="2" fill="#d8d8d8"/><rect x="168" y="3" width="2" height="2" fill="#d8d8d8"/><rect x="172" y="3" width="2" height="2" fill="#d8d8d8"/><rect x="176" y="3" width="2" height="2" fill="#d8d8d8"/><rect x="180" y="3" width="2" height="2" fill="#d8d8d8"/><rect x="184" y="3" width="2" height="2" fill="#d8d8d8"/><rect x="188" y="3" width="2" height="2" fill="#d8d8d8"/><rect x="192" y="3" width="2" height="2" fill="#d8d8d8"/><rect x="196" y="3" width="2" height="2" fill="#d8d8d8"/><rect x="200" y="3" width="2" height="2" fill="#d8d8d8"/><rect x="204" y="3" width="2" height="2" fill="#d8d8d8"/><rect x="208" y="3" width="2" height="2" fill="#d8d8d8"/><rect x="212" y="3" width="2" height="2" fill="#d8d8d8"/><rect x="216" y="3" width="2" height="2" fill="#d8d8d8"/><rect x="220" y="3" width="2" height="2" fill="#d8d8d8"/><rect x="224" y="3" width="2" height="2" fill="#d8d8d8"/><rect x="228" y="3" width="2" height="2" fill="#d8d8d8"/><rect x="232" y="3" width="2" height="2" fill="#d8d8d8"/><rect x="236" y="3" width="2" height="2" fill="#d8d8d8"/><rect x="240" y="3" width="2" height="2" fill="#d8d8d8"/><rect x="244" y="3" width="2" height="2" fill="#d8d8d8"/><rect x="248" y="3" width="2" height="2" fill="#d8d8d8"/><rect x="252" y="3" width="2" height="2" fill="#d8d8d8"/><rect x="256" y="3" width="2" height="2" fill="#d8d8d8"/><rect x="260" y="3" width="2" height="2" fill="#d8d8d8"/><rect x="264" y="3" width="2" height="2" fill="#d8d8d8"/><rect x="268" y="3" width="2" height="2" fill="#d8d8d8"/><rect x="272" y="3" width="2" height="2" fill="#d8d8d8"/><rect x="276" y="3" width="2" height="2" fill="#d8d8d8"/><rect x="280" y="3" width="2" height="2" fill="#d8d8d8"/><rect x="284" y="3" width="2" height="2" fill="#d8d8d8"/><rect x="288" y="3" width="2" height="2" fill="#d8d8d8"/><rect x="292" y="3" width="2" height="2" fill="#d8d8d8"/><rect x="296" y="3" width="2" height="2" fill="#d8d8d8"/><rect x="300" y="3" width="2" height="2" fill="#d8d8d8"/><rect x="304" y="3" width="2" height="2" fill="#d8d8d8"/><rect x="308" y="3" width="2" height="2" fill="#d8d8d8"/><rect x="312" y="3" width="2" height="2" fill="#d8d8d8"/><rect x="316" y="3" width="2" height="2" fill="#d8d8d8"/><rect x="320" y="3" width="2" height="2" fill="#d8d8d8"/><rect x="324" y="3" width="2" height="2" fill="#d8d8d8"/><rect x="328" y="3" width="2" height="2" fill="#d8d8d8"/><rect x="332" y="3" width="2" height="2" fill="#d8d8d8"/><rect x="336" y="3" width="2" height="2" fill="#d8d8d8"/><rect x="340" y="3" width="2" height="2" fill="#d8d8d8"/><rect x="344" y="3" width="2" height="2" fill="#d8d8d8"/><rect x="348" y="3" width="2" height="2" fill="#d8d8d8"/><rect x="352" y="3" width="2" height="2" fill="#d8d8d8"/><rect x="356" y="3" width="2" height="2" fill="#d8d8d8"/><rect x="360" y="3" width="2" height="2" fill="#d8d8d8"/><rect x="364" y="3" width="2" height="2" fill="#d8d8d8"/><rect x="368" y="3" width="2" height="2" fill="#d8d8d8"/><rect x="372" y="3" width="2" height="2" fill="#d8d8d8"/><rect x="376" y="3" width="2" height="2" fill="#d8d8d8"/><rect x="380" y="3" width="2" height="2" fill="#d8d8d8"/><rect x="384" y="3" width="2" height="2" fill="#d8d8d8"/><rect x="388" y="3" width="2" height="2" fill="#d8d8d8"/><rect x="392" y="3" width="2" height="2" fill="#d8d8d8"/><rect x="396" y="3" width="2" height="2" fill="#d8d8d8"/><rect x="400" y="3" width="2" height="2" fill="#d8d8d8"/><rect x="404" y="3" width="2" height="2" fill="#d8d8d8"/><rect x="408" y="3" width="2" height="2" fill="#d8d8d8"/><rect x="412" y="3" width="2" height="2" fill="#d8d8d8"/><rect x="416" y="3" width="2" height="2" fill="#d8d8d8"/><rect x="420" y="3" width="2" height="2" fill="#d8d8d8"/></svg>
<div class="a" style="left:3457px;top:316px;width:241px;height:39px;background:#3c3c3c;"></div>
<div class="a" style="left:3414px;top:316px;width:43px;height:43px;background:#474747;"></div>
<svg class="a" style="left:3414px;top:316px;" width="43" height="40" viewBox="0 0 43 40"><path d="M20 8 V32 M8 19.5 H32" stroke="#dadada" stroke-width="4"/></svg>
<svg class="a" style="left:3462px;top:318px;" width="40" height="38" viewBox="0 0 40 38"><rect x="7" y="7" width="23" height="22" fill="none" stroke="#3fc4c6" stroke-width="1.5"/><rect x="5" y="5" width="4" height="4" fill="#3c3c3c" stroke="#3fc4c6"/><rect x="28" y="5" width="4" height="4" fill="#3c3c3c" stroke="#3fc4c6"/><rect x="5" y="27" width="4" height="4" fill="#3c3c3c" stroke="#3fc4c6"/><rect x="28" y="27" width="4" height="4" fill="#3c3c3c" stroke="#3fc4c6"/><path d="M10 26 C11 17 17 11 26 9" fill="none" stroke="#bdbdbd" stroke-width="1.8"/></svg>
<svg class="a" style="left:3510px;top:318px;" width="40" height="38" viewBox="0 0 40 38"><rect x="12" y="4" width="16" height="6" fill="#bdbdbd"/><path d="M20 10 V16 M10 16 H30 M10 16 V22 M30 16 V22" fill="none" stroke="#3fc4c6" stroke-width="1.5"/><rect x="6" y="22" width="8" height="8" fill="#3fc4c6"/><rect x="26" y="22" width="8" height="8" fill="#3fc4c6"/></svg>
<svg class="a" style="left:3557px;top:318px;" width="40" height="38" viewBox="0 0 40 38"><path d="M14 6 A13 13 0 0 0 14 32" fill="none" stroke="#3fc4c6" stroke-width="1.5"/><path d="M17 6 A13 13 0 0 0 17 32" fill="none" stroke="#3fc4c6" stroke-width="1.5"/><circle cx="23" cy="19" r="10" fill="#bdbdbd"/></svg>
<svg class="a" style="left:3606px;top:318px;" width="40" height="38" viewBox="0 0 40 38"><rect x="8" y="6" width="24" height="15" fill="#bdbdbd"/><rect x="18" y="21" width="4" height="4" fill="#bdbdbd"/><rect x="13" y="25" width="14" height="3" fill="#bdbdbd"/></svg>
<svg class="a" style="left:3654px;top:318px;" width="40" height="38" viewBox="0 0 40 38"><path d="M14 13 L30 29" stroke="#bdbdbd" stroke-width="4.5" stroke-linecap="round"/><path d="M6 10 A8 8 0 0 0 16 17 L13 10 L9 6 Z" fill="#bdbdbd"/><circle cx="11" cy="10" r="7" fill="none" stroke="#bdbdbd" stroke-width="3.5" stroke-dasharray="30 14" transform="rotate(200 11 10)"/></svg>
<div class="a" style="left:3414px;top:363px;width:34px;height:34px;background:#5b8ad4;border-radius:3px"></div>
<svg class="a" style="left:3414px;top:363px;" width="34" height="34" viewBox="0 0 34 34"><circle cx="17" cy="17.5" r="9.5" fill="#dadada" stroke="#333" stroke-width="1"/></svg>
<svg class="a" style="left:3455px;top:368px;" width="26" height="24" viewBox="0 0 26 24"><circle cx="9" cy="9" r="7" fill="none" stroke="#dadada" stroke-width="2"/><rect x="10" y="10" width="11" height="11" fill="#dadada"/></svg>
<svg class="a" style="left:3491px;top:368px;" width="24" height="24" viewBox="0 0 24 24"><path d="M12 1 C18 1 21 5 21 9 C21 13 17 15 16 19 H8 C7 15 3 13 3 9 C3 5 6 1 12 1 Z" fill="#dadada"/><rect x="8" y="20" width="8" height="2" fill="#dadada"/><path d="M9 23 H15 L12 24 Z" fill="#dadada"/></svg>
<svg class="a" style="left:3527px;top:370px;" width="26" height="20" viewBox="0 0 26 20"><rect x="1" y="3" width="18" height="14" rx="1.5" fill="#dadada"/><path d="M19 10 L25 4 V17 Z" fill="#dadada"/></svg>
<svg class="a" style="left:3563px;top:367px;" width="26" height="26" viewBox="0 0 26 26"><path d="M3 2 V23 H23 Z M6 10 V20 H15 Z" fill="#dadada" fill-rule="evenodd"/></svg>
<svg class="a" style="left:3599px;top:368px;" width="26" height="24" viewBox="0 0 26 24"><path d="M2 5 q5.5 -5 11 0 t11 0" fill="none" stroke="#dadada" stroke-width="2.2"/><path d="M2 12 q5.5 -5 11 0 t11 0" fill="none" stroke="#dadada" stroke-width="2.2"/><path d="M2 19 q5.5 -5 11 0 t11 0" fill="none" stroke="#dadada" stroke-width="2.2"/></svg>
<svg class="a" style="left:3635px;top:366px;" width="28" height="28" viewBox="0 0 28 28"><circle cx="8" cy="7" r="4" fill="none" stroke="#dadada" stroke-width="2.2"/><rect x="6.8" y="0.5" width="2.4" height="4" fill="#dadada" transform="rotate(0 8 7)"/><rect x="6.8" y="0.5" width="2.4" height="4" fill="#dadada" transform="rotate(45 8 7)"/><rect x="6.8" y="0.5" width="2.4" height="4" fill="#dadada" transform="rotate(90 8 7)"/><rect x="6.8" y="0.5" width="2.4" height="4" fill="#dadada" transform="rotate(135 8 7)"/><rect x="6.8" y="0.5" width="2.4" height="4" fill="#dadada" transform="rotate(180 8 7)"/><rect x="6.8" y="0.5" width="2.4" height="4" fill="#dadada" transform="rotate(225 8 7)"/><rect x="6.8" y="0.5" width="2.4" height="4" fill="#dadada" transform="rotate(270 8 7)"/><rect x="6.8" y="0.5" width="2.4" height="4" fill="#dadada" transform="rotate(315 8 7)"/><circle cx="17" cy="18" r="5.5" fill="none" stroke="#dadada" stroke-width="3.0"/><rect x="15.5" y="10.0" width="3" height="4" fill="#dadada" transform="rotate(0 17 18)"/><rect x="15.5" y="10.0" width="3" height="4" fill="#dadada" transform="rotate(45 17 18)"/><rect x="15.5" y="10.0" width="3" height="4" fill="#dadada" transform="rotate(90 17 18)"/><rect x="15.5" y="10.0" width="3" height="4" fill="#dadada" transform="rotate(135 17 18)"/><rect x="15.5" y="10.0" width="3" height="4" fill="#dadada" transform="rotate(180 17 18)"/><rect x="15.5" y="10.0" width="3" height="4" fill="#dadada" transform="rotate(225 17 18)"/><rect x="15.5" y="10.0" width="3" height="4" fill="#dadada" transform="rotate(270 17 18)"/><rect x="15.5" y="10.0" width="3" height="4" fill="#dadada" transform="rotate(315 17 18)"/></svg>
<div class="a" style="left:3414px;top:405px;width:421px;height:30px;background:#5b5b5b;border-radius:2px;box-shadow:0 1px 1px #333"></div>
<div class="t" style="left:3422.0px;top:412.3px;font-size:15.6px;color:#e2e2e2;font-weight:400;">Standard Primitives</div>
<svg class="a" style="left:3814px;top:415px;" width="14" height="10" viewBox="0 0 14 10"><path d="M1 1 H13 L7 9 Z" fill="#dadada"/></svg>
<div class="a" style="left:3414px;top:443px;width:410px;height:293px;background:#4d4d4d;"></div>
<div class="a" style="left:3826px;top:443px;width:12px;height:1486px;background:#3e3e3e;"></div>
<svg class="a" style="left:3421px;top:453px;" width="14" height="10" viewBox="0 0 14 10"><path d="M1 1 H13 L7 9 Z" fill="#c8c8c8"/></svg>
<div class="t" style="left:3442.5px;top:449.2px;font-size:17.5px;color:#f2f2f2;font-weight:700;">Object Type</div>
<svg class="a" style="left:3803px;top:450px;" width="10" height="10" viewBox="0 0 10 10"><rect x="0" y="0" width="1.5" height="1.5" fill="#777"/><rect x="0" y="2" width="1.5" height="1.5" fill="#777"/><rect x="0" y="4" width="1.5" height="1.5" fill="#777"/><rect x="0" y="6" width="1.5" height="1.5" fill="#777"/><rect x="0" y="8" width="1.5" height="1.5" fill="#777"/><rect x="2" y="0" width="1.5" height="1.5" fill="#777"/><rect x="2" y="2" width="1.5" height="1.5" fill="#777"/><rect x="2" y="4" width="1.5" height="1.5" fill="#777"/><rect x="2" y="6" width="1.5" height="1.5" fill="#777"/><rect x="2" y="8" width="1.5" height="1.5" fill="#777"/><rect x="4" y="0" width="1.5" height="1.5" fill="#777"/><rect x="4" y="2" width="1.5" height="1.5" fill="#777"/><rect x="4" y="4" width="1.5" height="1.5" fill="#777"/><rect x="4" y="6" width="1.5" height="1.5" fill="#777"/><rect x="4" y="8" width="1.5" height="1.5" fill="#777"/><rect x="6" y="0" width="1.5" height="1.5" fill="#777"/><rect x="6" y="2" width="1.5" height="1.5" fill="#777"/><rect x="6" y="4" width="1.5" height="1.5" fill="#777"/><rect x="6" y="6" width="1.5" height="1.5" fill="#777"/><rect x="6" y="8" width="1.5" height="1.5" fill="#777"/><rect x="8" y="0" width="1.5" height="1.5" fill="#777"/><rect x="8" y="2" width="1.5" height="1.5" fill="#777"/><rect x="8" y="4" width="1.5" height="1.5" fill="#777"/><rect x="8" y="6" width="1.5" height="1.5" fill="#777"/><rect x="8" y="8" width="1.5" height="1.5" fill="#777"/></svg>
<div class="a" style="left:3575px;top:483px;width:17px;height:17px;background:#575757;"></div>
<div class="t" style="left:3600.0px;top:484.5px;font-size:16px;color:#8a8a8a;font-weight:400;">AutoGrid</div>
<div class="a" style="left:3422px;top:513px;width:194px;height:29px;background:#5d5d5d;border-radius:4px;box-shadow:0 1px 1px #3a3a3a"></div>
<div class="t" style="left:3219.0px;width:600px;text-align:center;top:520.3px;font-size:15px;color:#e0e0e0;font-weight:400;">Box</div>
<div class="a" style="left:3623px;top:513px;width:193px;height:29px;background:#5d5d5d;border-radius:4px;box-shadow:0 1px 1px #3a3a3a"></div>
<div class="t" style="left:3419.5px;width:600px;text-align:center;top:520.3px;font-size:15px;color:#e0e0e0;font-weight:400;">Cone</div>
<div class="a" style="left:3422px;top:550px;width:194px;height:29px;background:#5d5d5d;border-radius:4px;box-shadow:0 1px 1px #3a3a3a"></div>
<div class="t" style="left:3219.0px;width:600px;text-align:center;top:557.3px;font-size:15px;color:#e0e0e0;font-weight:400;">Sphere</div>
<div class="a" style="left:3623px;top:550px;width:193px;height:29px;background:#5d5d5d;border-radius:4px;box-shadow:0 1px 1px #3a3a3a"></div>
<div class="t" style="left:3419.5px;width:600px;text-align:center;top:557.3px;font-size:15px;color:#e0e0e0;font-weight:400;">GeoSphere</div>
<div class="a" style="left:3422px;top:587px;width:194px;height:29px;background:#5d5d5d;border-radius:4px;box-shadow:0 1px 1px #3a3a3a"></div>
<div class="t" style="left:3219.0px;width:600px;text-align:center;top:594.3px;font-size:15px;color:#e0e0e0;font-weight:400;">Cylinder</div>
<div class="a" style="left:3623px;top:587px;width:193px;height:29px;background:#5d5d5d;border-radius:4px;box-shadow:0 1px 1px #3a3a3a"></div>
<div class="t" style="left:3419.5px;width:600px;text-align:center;top:594.3px;font-size:15px;color:#e0e0e0;font-weight:400;">Tube</div>
<div class="a" style="left:3422px;top:624px;width:194px;height:29px;background:#5d5d5d;border-radius:4px;box-shadow:0 1px 1px #3a3a3a"></div>
<div class="t" style="left:3219.0px;width:600px;text-align:center;top:631.3px;font-size:15px;color:#e0e0e0;font-weight:400;">Torus</div>
<div class="a" style="left:3623px;top:624px;width:193px;height:29px;background:#5d5d5d;border-radius:4px;box-shadow:0 1px 1px #3a3a3a"></div>
<div class="t" style="left:3419.5px;width:600px;text-align:center;top:631.3px;font-size:15px;color:#e0e0e0;font-weight:400;">Pyramid</div>
<div class="a" style="left:3422px;top:661px;width:194px;height:29px;background:#5d5d5d;border-radius:4px;box-shadow:0 1px 1px #3a3a3a"></div>
<div class="t" style="left:3219.0px;width:600px;text-align:center;top:668.3px;font-size:15px;color:#e0e0e0;font-weight:400;">Teapot</div>
<div class="a" style="left:3623px;top:661px;width:193px;height:29px;background:#5d5d5d;border-radius:4px;box-shadow:0 1px 1px #3a3a3a"></div>
<div class="t" style="left:3419.5px;width:600px;text-align:center;top:668.3px;font-size:15px;color:#e0e0e0;font-weight:400;">Plane</div>
<div class="a" style="left:3422px;top:698px;width:194px;height:29px;background:#5d5d5d;border-radius:4px;box-shadow:0 1px 1px #3a3a3a"></div>
<div class="t" style="left:3219.0px;width:600px;text-align:center;top:705.3px;font-size:15px;color:#e0e0e0;font-weight:400;">TextPlus</div>
<div class="a" style="left:3414px;top:743px;width:410px;height:69px;background:#4d4d4d;"></div>
<svg class="a" style="left:3421px;top:752px;" width="14" height="10" viewBox="0 0 14 10"><path d="M1 1 H13 L7 9 Z" fill="#c8c8c8"/></svg>
<div class="t" style="left:3443.0px;top:748.7px;font-size:17.5px;color:#f2f2f2;font-weight:700;">Name and Color</div>
<svg class="a" style="left:3803px;top:752px;" width="10" height="10" viewBox="0 0 10 10"><rect x="0" y="0" width="1.5" height="1.5" fill="#777"/><rect x="0" y="2" width="1.5" height="1.5" fill="#777"/><rect x="0" y="4" width="1.5" height="1.5" fill="#777"/><rect x="0" y="6" width="1.5" height="1.5" fill="#777"/><rect x="0" y="8" width="1.5" height="1.5" fill="#777"/><rect x="2" y="0" width="1.5" height="1.5" fill="#777"/><rect x="2" y="2" width="1.5" height="1.5" fill="#777"/><rect x="2" y="4" width="1.5" height="1.5" fill="#777"/><rect x="2" y="6" width="1.5" height="1.5" fill="#777"/><rect x="2" y="8" width="1.5" height="1.5" fill="#777"/><rect x="4" y="0" width="1.5" height="1.5" fill="#777"/><rect x="4" y="2" width="1.5" height="1.5" fill="#777"/><rect x="4" y="4" width="1.5" height="1.5" fill="#777"/><rect x="4" y="6" width="1.5" height="1.5" fill="#777"/><rect x="4" y="8" width="1.5" height="1.5" fill="#777"/><rect x="6" y="0" width="1.5" height="1.5" fill="#777"/><rect x="6" y="2" width="1.5" height="1.5" fill="#777"/><rect x="6" y="4" width="1.5" height="1.5" fill="#777"/><rect x="6" y="6" width="1.5" height="1.5" fill="#777"/><rect x="6" y="8" width="1.5" height="1.5" fill="#777"/><rect x="8" y="0" width="1.5" height="1.5" fill="#777"/><rect x="8" y="2" width="1.5" height="1.5" fill="#777"/><rect x="8" y="4" width="1.5" height="1.5" fill="#777"/><rect x="8" y="6" width="1.5" height="1.5" fill="#777"/><rect x="8" y="8" width="1.5" height="1.5" fill="#777"/></svg>
<div class="a" style="left:3422px;top:775px;width:356px;height:30px;background:#575757;border-radius:3px"></div>
<div class="a" style="left:3786px;top:775px;width:30px;height:30px;background:#c8338c;border:1.5px solid #111"></div>
<div class="a" style="left:60px;top:1929px;width:3344px;height:9px;background:#444;"></div>
<div class="a" style="left:14px;top:1938px;width:22px;height:25px;background:#545454;border-radius:4px"></div>
<div class="a" style="left:38px;top:1938px;width:185px;height:25px;background:#555555;border-radius:5px"></div>
<div class="a" style="left:225px;top:1938px;width:22px;height:25px;background:#545454;border-radius:4px"></div>
<div class="t" style="left:-275.0px;width:600px;text-align:center;top:1943.0px;font-size:16px;color:#d0d0d0;font-weight:400;">&lt;</div>
<div class="t" style="left:-64.0px;width:600px;text-align:center;top:1943.0px;font-size:16px;color:#d0d0d0;font-weight:400;">&gt;</div>
<div class="t" style="left:-170.0px;width:600px;text-align:center;top:1942.9px;font-size:16.3px;color:#d8d8d8;font-weight:400;">0 / 100</div>
<svg class="a" style="left:3px;top:1942px;" width="6" height="62" viewBox="0 0 6 62"><rect x="0" y="0" width="2" height="2" fill="#cfcfcf"/><rect x="0" y="4" width="2" height="2" fill="#cfcfcf"/><rect x="0" y="8" width="2" height="2" fill="#cfcfcf"/><rect x="0" y="12" width="2" height="2" fill="#cfcfcf"/><rect x="0" y="16" width="2" height="2" fill="#cfcfcf"/><rect x="0" y="20" width="2" height="2" fill="#cfcfcf"/><rect x="0" y="24" width="2" height="2" fill="#cfcfcf"/><rect x="0" y="28" width="2" height="2" fill="#cfcfcf"/><rect x="0" y="32" width="2" height="2" fill="#cfcfcf"/><rect x="0" y="36" width="2" height="2" fill="#cfcfcf"/><rect x="0" y="40" width="2" height="2" fill="#cfcfcf"/><rect x="0" y="44" width="2" height="2" fill="#cfcfcf"/><rect x="0" y="48" width="2" height="2" fill="#cfcfcf"/><rect x="0" y="52" width="2" height="2" fill="#cfcfcf"/><rect x="0" y="56" width="2" height="2" fill="#cfcfcf"/><rect x="0" y="60" width="2" height="2" fill="#cfcfcf"/><rect x="3" y="0" width="2" height="2" fill="#cfcfcf"/><rect x="3" y="4" width="2" height="2" fill="#cfcfcf"/><rect x="3" y="8" width="2" height="2" fill="#cfcfcf"/><rect x="3" y="12" width="2" height="2" fill="#cfcfcf"/><rect x="3" y="16" width="2" height="2" fill="#cfcfcf"/><rect x="3" y="20" width="2" height="2" fill="#cfcfcf"/><rect x="3" y="24" width="2" height="2" fill="#cfcfcf"/><rect x="3" y="28" width="2" height="2" fill="#cfcfcf"/><rect x="3" y="32" width="2" height="2" fill="#cfcfcf"/><rect x="3" y="36" width="2" height="2" fill="#cfcfcf"/><rect x="3" y="40" width="2" height="2" fill="#cfcfcf"/><rect x="3" y="44" width="2" height="2" fill="#cfcfcf"/><rect x="3" y="48" width="2" height="2" fill="#cfcfcf"/><rect x="3" y="52" width="2" height="2" fill="#cfcfcf"/><rect x="3" y="56" width="2" height="2" fill="#cfcfcf"/><rect x="3" y="60" width="2" height="2" fill="#cfcfcf"/></svg>
<div class="a" style="left:13px;top:1969px;width:3827px;height:1px;background:#1a1a1a;"></div>
<div class="a" style="left:13px;top:1970px;width:75px;height:36px;background:#444;"></div>
<div class="a" style="left:88px;top:1970px;width:3677px;height:36px;background:#2a2a2a;"></div>
<div class="a" style="left:3765px;top:1970px;width:75px;height:36px;background:#464646;"></div>
<svg class="a" style="left:33px;top:1981px;" width="24" height="17" viewBox="0 0 24 17"><rect x="0" y="1" width="6" height="2" fill="#dadada"/><rect x="0" y="5" width="6" height="2" fill="#dadada"/><rect x="0" y="9" width="6" height="2" fill="#dadada"/><rect x="0" y="13" width="6" height="2" fill="#dadada"/><path d="M9 12 C11 -2 15 -2 17 7 S21 18 23 10" fill="none" stroke="#3fc4c6" stroke-width="1.8"/></svg>
<div class="a" style="left:100px;top:1971px;width:11px;height:35px;background:#8f8a22;"></div>
<svg class="a" style="left:88px;top:1970px;" width="3677" height="20" viewBox="0 0 3677 20"><rect x="17.3" y="0" width="1" height="18" fill="#8c8c8c"/><rect x="53.7" y="0" width="1" height="17" fill="#8c8c8c"/><rect x="90.2" y="0" width="1" height="18" fill="#8c8c8c"/><rect x="126.6" y="0" width="1" height="17" fill="#8c8c8c"/><rect x="163.0" y="0" width="1" height="18" fill="#8c8c8c"/><rect x="199.4" y="0" width="1" height="17" fill="#8c8c8c"/><rect x="235.9" y="0" width="1" height="18" fill="#8c8c8c"/><rect x="272.3" y="0" width="1" height="17" fill="#8c8c8c"/><rect x="308.7" y="0" width="1" height="18" fill="#8c8c8c"/><rect x="345.2" y="0" width="1" height="17" fill="#8c8c8c"/><rect x="381.6" y="0" width="1" height="18" fill="#8c8c8c"/><rect x="418.0" y="0" width="1" height="17" fill="#8c8c8c"/><rect x="454.5" y="0" width="1" height="18" fill="#8c8c8c"/><rect x="490.9" y="0" width="1" height="17" fill="#8c8c8c"/><rect x="527.3" y="0" width="1" height="18" fill="#8c8c8c"/><rect x="563.8" y="0" width="1" height="17" fill="#8c8c8c"/><rect x="600.2" y="0" width="1" height="18" fill="#8c8c8c"/><rect x="636.6" y="0" width="1" height="17" fill="#8c8c8c"/><rect x="673.0" y="0" width="1" height="18" fill="#8c8c8c"/><rect x="709.5" y="0" width="1" height="17" fill="#8c8c8c"/><rect x="745.9" y="0" width="1" height="18" fill="#8c8c8c"/><rect x="782.3" y="0" width="1" height="17" fill="#8c8c8c"/><rect x="818.8" y="0" width="1" height="18" fill="#8c8c8c"/><rect x="855.2" y="0" width="1" height="17" fill="#8c8c8c"/><rect x="891.6" y="0" width="1" height="18" fill="#8c8c8c"/><rect x="928.0" y="0" width="1" height="17" fill="#8c8c8c"/><rect x="964.5" y="0" width="1" height="18" fill="#8c8c8c"/><rect x="1000.9" y="0" width="1" height="17" fill="#8c8c8c"/><rect x="1037.3" y="0" width="1" height="18" fill="#8c8c8c"/><rect x="1073.8" y="0" width="1" height="17" fill="#8c8c8c"/><rect x="1110.2" y="0" width="1" height="18" fill="#8c8c8c"/><rect x="1146.6" y="0" width="1" height="17" fill="#8c8c8c"/><rect x="1183.1" y="0" width="1" height="18" fill="#8c8c8c"/><rect x="1219.5" y="0" width="1" height="17" fill="#8c8c8c"/><rect x="1255.9" y="0" width="1" height="18" fill="#8c8c8c"/><rect x="1292.3" y="0" width="1" height="17" fill="#8c8c8c"/><rect x="1328.8" y="0" width="1" height="18" fill="#8c8c8c"/><rect x="1365.2" y="0" width="1" height="17" fill="#8c8c8c"/><rect x="1401.6" y="0" width="1" height="18" fill="#8c8c8c"/><rect x="1438.1" y="0" width="1" height="17" fill="#8c8c8c"/><rect x="1474.5" y="0" width="1" height="18" fill="#8c8c8c"/><rect x="1510.9" y="0" width="1" height="17" fill="#8c8c8c"/><rect x="1547.4" y="0" width="1" height="18" fill="#8c8c8c"/><rect x="1583.8" y="0" width="1" height="17" fill="#8c8c8c"/><rect x="1620.2" y="0" width="1" height="18" fill="#8c8c8c"/><rect x="1656.6" y="0" width="1" height="17" fill="#8c8c8c"/><rect x="1693.1" y="0" width="1" height="18" fill="#8c8c8c"/><rect x="1729.5" y="0" width="1" height="17" fill="#8c8c8c"/><rect x="1765.9" y="0" width="1" height="18" fill="#8c8c8c"/><rect x="1802.4" y="0" width="1" height="17" fill="#8c8c8c"/><rect x="1838.8" y="0" width="1" height="18" fill="#8c8c8c"/><rect x="1875.2" y="0" width="1" height="17" fill="#8c8c8c"/><rect x="1911.7" y="0" width="1" height="18" fill="#8c8c8c"/><rect x="1948.1" y="0" width="1" height="17" fill="#8c8c8c"/><rect x="1984.5" y="0" width="1" height="18" fill="#8c8c8c"/><rect x="2021.0" y="0" width="1" height="17" fill="#8c8c8c"/><rect x="2057.4" y="0" width="1" height="18" fill="#8c8c8c"/><rect x="2093.8" y="0" width="1" height="17" fill="#8c8c8c"/><rect x="2130.2" y="0" width="1" height="18" fill="#8c8c8c"/><rect x="2166.7" y="0" width="1" height="17" fill="#8c8c8c"/><rect x="2203.1" y="0" width="1" height="18" fill="#8c8c8c"/><rect x="2239.5" y="0" width="1" height="17" fill="#8c8c8c"/><rect x="2276.0" y="0" width="1" height="18" fill="#8c8c8c"/><rect x="2312.4" y="0" width="1" height="17" fill="#8c8c8c"/><rect x="2348.8" y="0" width="1" height="18" fill="#8c8c8c"/><rect x="2385.2" y="0" width="1" height="17" fill="#8c8c8c"/><rect x="2421.7" y="0" width="1" height="18" fill="#8c8c8c"/><rect x="2458.1" y="0" width="1" height="17" fill="#8c8c8c"/><rect x="2494.5" y="0" width="1" height="18" fill="#8c8c8c"/><rect x="2531.0" y="0" width="1" height="17" fill="#8c8c8c"/><rect x="2567.4" y="0" width="1" height="18" fill="#8c8c8c"/><rect x="2603.8" y="0" width="1" height="17" fill="#8c8c8c"/><rect x="2640.3" y="0" width="1" height="18" fill="#8c8c8c"/><rect x="2676.7" y="0" width="1" height="17" fill="#8c8c8c"/><rect x="2713.1" y="0" width="1" height="18" fill="#8c8c8c"/><rect x="2749.6" y="0" width="1" height="17" fill="#8c8c8c"/><rect x="2786.0" y="0" width="1" height="18" fill="#8c8c8c"/><rect x="2822.4" y="0" width="1" height="17" fill="#8c8c8c"/><rect x="2858.8" y="0" width="1" height="18" fill="#8c8c8c"/><rect x="2895.3" y="0" width="1" height="17" fill="#8c8c8c"/><rect x="2931.7" y="0" width="1" height="18" fill="#8c8c8c"/><rect x="2968.1" y="0" width="1" height="17" fill="#8c8c8c"/><rect x="3004.6" y="0" width="1" height="18" fill="#8c8c8c"/><rect x="3041.0" y="0" width="1" height="17" fill="#8c8c8c"/><rect x="3077.4" y="0" width="1" height="18" fill="#8c8c8c"/><rect x="3113.9" y="0" width="1" height="17" fill="#8c8c8c"/><rect x="3150.3" y="0" width="1" height="18" fill="#8c8c8c"/><rect x="3186.7" y="0" width="1" height="17" fill="#8c8c8c"/><rect x="3223.1" y="0" width="1" height="18" fill="#8c8c8c"/><rect x="3259.6" y="0" width="1" height="17" fill="#8c8c8c"/><rect x="3296.0" y="0" width="1" height="18" fill="#8c8c8c"/><rect x="3332.4" y="0" width="1" height="17" fill="#8c8c8c"/><rect x="3368.9" y="0" width="1" height="18" fill="#8c8c8c"/><rect x="3405.3" y="0" width="1" height="17" fill="#8c8c8c"/><rect x="3441.7" y="0" width="1" height="18" fill="#8c8c8c"/><rect x="3478.2" y="0" width="1" height="17" fill="#8c8c8c"/><rect x="3514.6" y="0" width="1" height="18" fill="#8c8c8c"/><rect x="3551.0" y="0" width="1" height="17" fill="#8c8c8c"/><rect x="3587.4" y="0" width="1" height="18" fill="#8c8c8c"/><rect x="3623.9" y="0" width="1" height="17" fill="#8c8c8c"/><rect x="3660.3" y="0" width="1" height="18" fill="#8c8c8c"/></svg>
<div class="t" style="left:-194.7px;width:600px;text-align:center;top:1989.0px;font-size:16px;color:#e0e0a0;font-weight:400;">0</div>
<div class="t" style="left:-121.8px;width:600px;text-align:center;top:1989.0px;font-size:16px;color:#d6d6d6;font-weight:400;">2</div>
<div class="t" style="left:-49.0px;width:600px;text-align:center;top:1989.0px;font-size:16px;color:#d6d6d6;font-weight:400;">4</div>
<div class="t" style="left:23.9px;width:600px;text-align:center;top:1989.0px;font-size:16px;color:#d6d6d6;font-weight:400;">6</div>
<div class="t" style="left:96.7px;width:600px;text-align:center;top:1989.0px;font-size:16px;color:#d6d6d6;font-weight:400;">8</div>
<div class="t" style="left:169.6px;width:600px;text-align:center;top:1989.0px;font-size:16px;color:#d6d6d6;font-weight:400;">10</div>
<div class="t" style="left:242.5px;width:600px;text-align:center;top:1989.0px;font-size:16px;color:#d6d6d6;font-weight:400;">12</div>
<div class="t" style="left:315.3px;width:600px;text-align:center;top:1989.0px;font-size:16px;color:#d6d6d6;font-weight:400;">14</div>
<div class="t" style="left:388.2px;width:600px;text-align:center;top:1989.0px;font-size:16px;color:#d6d6d6;font-weight:400;">16</div>
<div class="t" style="left:461.0px;width:600px;text-align:center;top:1989.0px;font-size:16px;color:#d6d6d6;font-weight:400;">18</div>
<div class="t" style="left:533.9px;width:600px;text-align:center;top:1989.0px;font-size:16px;color:#d6d6d6;font-weight:400;">20</div>
<div class="t" style="left:606.8px;width:600px;text-align:center;top:1989.0px;font-size:16px;color:#d6d6d6;font-weight:400;">22</div>
<div class="t" style="left:679.6px;width:600px;text-align:center;top:1989.0px;font-size:16px;color:#d6d6d6;font-weight:400;">24</div>
<div class="t" style="left:752.5px;width:600px;text-align:center;top:1989.0px;font-size:16px;color:#d6d6d6;font-weight:400;">26</div>
<div class="t" style="left:825.3px;width:600px;text-align:center;top:1989.0px;font-size:16px;color:#d6d6d6;font-weight:400;">28</div>
<div class="t" style="left:898.2px;width:600px;text-align:center;top:1989.0px;font-size:16px;color:#d6d6d6;font-weight:400;">30</div>
<div class="t" style="left:971.1px;width:600px;text-align:center;top:1989.0px;font-size:16px;color:#d6d6d6;font-weight:400;">32</div>
<div class="t" style="left:1043.9px;width:600px;text-align:center;top:1989.0px;font-size:16px;color:#d6d6d6;font-weight:400;">34</div>
<div class="t" style="left:1116.8px;width:600px;text-align:center;top:1989.0px;font-size:16px;color:#d6d6d6;font-weight:400;">36</div>
<div class="t" style="left:1189.6px;width:600px;text-align:center;top:1989.0px;font-size:16px;color:#d6d6d6;font-weight:400;">38</div>
<div class="t" style="left:1262.5px;width:600px;text-align:center;top:1989.0px;font-size:16px;color:#d6d6d6;font-weight:400;">40</div>
<div class="t" style="left:1335.4px;width:600px;text-align:center;top:1989.0px;font-size:16px;color:#d6d6d6;font-weight:400;">42</div>
<div class="t" style="left:1408.2px;width:600px;text-align:center;top:1989.0px;font-size:16px;color:#d6d6d6;font-weight:400;">44</div>
<div class="t" style="left:1481.1px;width:600px;text-align:center;top:1989.0px;font-size:16px;color:#d6d6d6;font-weight:400;">46</div>
<div class="t" style="left:1553.9px;width:600px;text-align:center;top:1989.0px;font-size:16px;color:#d6d6d6;font-weight:400;">48</div>
<div class="t" style="left:1626.8px;width:600px;text-align:center;top:1989.0px;font-size:16px;color:#d6d6d6;font-weight:400;">50</div>
<div class="t" style="left:1699.7px;width:600px;text-align:center;top:1989.0px;font-size:16px;color:#d6d6d6;font-weight:400;">52</div>
<div class="t" style="left:1772.5px;width:600px;text-align:center;top:1989.0px;font-size:16px;color:#d6d6d6;font-weight:400;">54</div>
<div class="t" style="left:1845.4px;width:600px;text-align:center;top:1989.0px;font-size:16px;color:#d6d6d6;font-weight:400;">56</div>
<div class="t" style="left:1918.2px;width:600px;text-align:center;top:1989.0px;font-size:16px;color:#d6d6d6;font-weight:400;">58</div>
<div class="t" style="left:1991.1px;width:600px;text-align:center;top:1989.0px;font-size:16px;color:#d6d6d6;font-weight:400;">60</div>
<div class="t" style="left:2064.0px;width:600px;text-align:center;top:1989.0px;font-size:16px;color:#d6d6d6;font-weight:400;">62</div>
<div class="t" style="left:2136.8px;width:600px;text-align:center;top:1989.0px;font-size:16px;color:#d6d6d6;font-weight:400;">64</div>
<div class="t" style="left:2209.7px;width:600px;text-align:center;top:1989.0px;font-size:16px;color:#d6d6d6;font-weight:400;">66</div>
<div class="t" style="left:2282.5px;width:600px;text-align:center;top:1989.0px;font-size:16px;color:#d6d6d6;font-weight:400;">68</div>
<div class="t" style="left:2355.4px;width:600px;text-align:center;top:1989.0px;font-size:16px;color:#d6d6d6;font-weight:400;">70</div>
<div class="t" style="left:2428.3px;width:600px;text-align:center;top:1989.0px;font-size:16px;color:#d6d6d6;font-weight:400;">72</div>
<div class="t" style="left:2501.1px;width:600px;text-align:center;top:1989.0px;font-size:16px;color:#d6d6d6;font-weight:400;">74</div>
<div class="t" style="left:2574.0px;width:600px;text-align:center;top:1989.0px;font-size:16px;color:#d6d6d6;font-weight:400;">76</div>
<div class="t" style="left:2646.8px;width:600px;text-align:center;top:1989.0px;font-size:16px;color:#d6d6d6;font-weight:400;">78</div>
<div class="t" style="left:2719.7px;width:600px;text-align:center;top:1989.0px;font-size:16px;color:#d6d6d6;font-weight:400;">80</div>
<div class="t" style="left:2792.6px;width:600px;text-align:center;top:1989.0px;font-size:16px;color:#d6d6d6;font-weight:400;">82</div>
<div class="t" style="left:2865.4px;width:600px;text-align:center;top:1989.0px;font-size:16px;color:#d6d6d6;font-weight:400;">84</div>
<div class="t" style="left:2938.3px;width:600px;text-align:center;top:1989.0px;font-size:16px;color:#d6d6d6;font-weight:400;">86</div>
<div class="t" style="left:3011.1px;width:600px;text-align:center;top:1989.0px;font-size:16px;color:#d6d6d6;font-weight:400;">88</div>
<div class="t" style="left:3084.0px;width:600px;text-align:center;top:1989.0px;font-size:16px;color:#d6d6d6;font-weight:400;">90</div>
<div class="t" style="left:3156.9px;width:600px;text-align:center;top:1989.0px;font-size:16px;color:#d6d6d6;font-weight:400;">92</div>
<div class="t" style="left:3229.7px;width:600px;text-align:center;top:1989.0px;font-size:16px;color:#d6d6d6;font-weight:400;">94</div>
<div class="t" style="left:3302.6px;width:600px;text-align:center;top:1989.0px;font-size:16px;color:#d6d6d6;font-weight:400;">96</div>
<div class="t" style="left:3375.4px;width:600px;text-align:center;top:1989.0px;font-size:16px;color:#d6d6d6;font-weight:400;">98</div>
<div class="t" style="left:3448.3px;width:600px;text-align:center;top:1989.0px;font-size:16px;color:#d6d6d6;font-weight:400;">100</div>
<div class="a" style="left:0px;top:2006px;width:3840px;height:82px;background:#444;"></div>
<div class="a" style="left:0px;top:2088px;width:3840px;height:3px;background:#1a2a1a;"></div>
<div class="a" style="left:5px;top:2012px;width:147px;height:35px;background:#dcc4c4;border:1px solid #8a8a8a"></div>
<div class="a" style="left:5px;top:2048px;width:147px;height:36px;background:#ffffff;border:1px solid #8a8a8a"></div>
<div class="t" style="left:10.6px;top:2053.5px;font-size:16px;color:#8a8a8a;font-weight:400;font-family:'Liberation Mono',monospace;">MAXScript Mini</div>
<div class="a" style="left:156px;top:2011px;width:2px;height:76px;background:#2a2a2a;"></div>
<div class="t" style="left:162.0px;top:2023.3px;font-size:15.4px;color:#ececec;font-weight:400;">None Selected</div>
<div class="t" style="left:162.0px;top:2060.0px;font-size:16px;color:#e4e4e4;font-weight:400;">Click or click-and-drag to select objects</div>
<svg class="a" style="left:2510px;top:2016px;" width="28" height="28" viewBox="0 0 28 28"><path d="M2 8 V2 H8 M20 2 H26 V8 M26 20 V26 H20 M8 26 H2 V20" fill="none" stroke="#6a6a6a" stroke-width="1.5"/><rect x="8" y="8" width="12" height="12" fill="none" stroke="#6a6a6a" stroke-width="2"/></svg>
<svg class="a" style="left:2552px;top:2017px;" width="24" height="26" viewBox="0 0 24 26"><path d="M6 12 V8 A6 6 0 0 1 18 8 V12" fill="none" stroke="#6a6a6a" stroke-width="2.5"/><rect x="3" y="12" width="18" height="13" rx="2" fill="#6a6a6a"/><circle cx="12" cy="18" r="2" fill="#333"/></svg>
<svg class="a" style="left:2592px;top:2019px;" width="24" height="22" viewBox="0 0 24 22"><rect x="1" y="1" width="19" height="19" fill="none" stroke="#dadada" stroke-width="2"/><path d="M10.5 1 V20 M1 10.5 H20" stroke="#dadada" stroke-width="2"/><circle cx="10.5" cy="10.5" r="4" fill="#444" stroke="#dadada" stroke-width="2"/></svg>
<div class="t" style="left:2626.5px;top:2023.5px;font-size:16.5px;color:#e8e8e8;font-weight:400;">X:</div>
<div class="a" style="left:2646px;top:2017px;width:86px;height:25px;background:#555;"></div>
<div class="t" style="left:2650.0px;top:2022.5px;font-size:16.5px;color:#8c8c8c;font-weight:400;">-284,726</div>
<div class="t" style="left:2752.0px;top:2023.5px;font-size:16.5px;color:#e8e8e8;font-weight:400;">Y:</div>
<div class="a" style="left:2772px;top:2017px;width:86px;height:25px;background:#555;"></div>
<div class="t" style="left:2776.0px;top:2022.5px;font-size:16.5px;color:#8c8c8c;font-weight:400;">-263,016</div>
<div class="t" style="left:2877.0px;top:2023.5px;font-size:16.5px;color:#e8e8e8;font-weight:400;">Z:</div>
<div class="a" style="left:2897px;top:2017px;width:86px;height:25px;background:#555;"></div>
<div class="t" style="left:2900.0px;top:2022.5px;font-size:16.5px;color:#8c8c8c;font-weight:400;">0,0</div>
<div class="t" style="left:3005.0px;top:2023.3px;font-size:16.8px;color:#ececec;font-weight:400;">Grid = 10,0</div>
<div class="a" style="left:2784px;top:2055px;width:2px;height:24px;background:#222;"></div>
<div class="a" style="left:2794px;top:2052px;width:29px;height:30px;background:#5a5a5a;border-radius:4px"></div>
<svg class="a" style="left:2794px;top:2052px;" width="29" height="30" viewBox="0 0 29 30"><path d="M14.5 5 L23 8 V15 C23 20 19 24 14.5 26 C10 24 6 20 6 15 V8 Z" fill="#cfcfcf" stroke="#333" stroke-width="1"/><path d="M14.5 8 V15 H20 C20 19 17 22 14.5 23 V15 H9 V10 Z" fill="#444"/></svg>
<div class="t" style="left:2832.0px;top:2060.0px;font-size:15.4px;color:#ececec;font-weight:400;">Enabled:</div>
<svg class="a" style="left:2901px;top:2061px;" width="14" height="14" viewBox="0 0 14 14"><circle cx="7" cy="7" r="6.5" fill="#3ed43e"/></svg>
<div class="a" style="left:2922px;top:2052px;width:29px;height:30px;background:#5a5a5a;border-radius:4px"></div>
<svg class="a" style="left:2922px;top:2052px;" width="29" height="30" viewBox="0 0 29 30"><circle cx="14.5" cy="15" r="10" fill="#f4f4f4"/><text x="10.5" y="20.5" font-family="Liberation Sans" font-size="14" fill="#333">1</text></svg>
<div class="a" style="left:2958px;top:2055px;width:2px;height:24px;background:#222;"></div>
<svg class="a" style="left:2972px;top:2056px;" width="22" height="22" viewBox="0 0 22 22"><path d="M11 2 L20 6.5 V15.5 L11 20 L2 15.5 V6.5 Z M2 6.5 L11 11 L20 6.5 M11 11 V20" fill="none" stroke="#dadada" stroke-width="1.4"/></svg>
<div class="t" style="left:3006.7px;top:2059.5px;font-size:16.5px;color:#e0e0e0;font-weight:400;">Add Time Tag</div>
<svg class="a" style="left:3170px;top:2018px;" width="24" height="22" viewBox="0 0 24 22"><rect x="1" y="2" width="3" height="18" fill="#dadada"/><path d="M13 3 V19 L5 11 Z M22 3 V19 L14 11 Z" fill="#dadada"/></svg>
<div class="a" style="left:3201px;top:2017px;width:2px;height:24px;background:#222;"></div>
<svg class="a" style="left:3208px;top:2018px;" width="24" height="22" viewBox="0 0 24 22"><path d="M9 3 V19 L1 11 Z" fill="#dadada"/><rect x="12" y="2" width="4" height="18" fill="#dadada"/><rect x="18" y="2" width="4" height="18" fill="#dadada"/></svg>
<svg class="a" style="left:3243px;top:2016px;" width="28" height="28" viewBox="0 0 28 28"><path d="M1 2 L20 12.5 L1 23 Z" fill="#dadada"/><path d="M27 19 V27 H19 Z" fill="#dadada"/></svg>
<svg class="a" style="left:3276px;top:2018px;" width="24" height="22" viewBox="0 0 24 22"><rect x="1" y="2" width="4" height="18" fill="#dadada"/><rect x="7" y="2" width="4" height="18" fill="#dadada"/><path d="M14 3 L22 11 L14 19 Z" fill="#dadada"/></svg>
<div class="a" style="left:3307px;top:2017px;width:2px;height:24px;background:#222;"></div>
<svg class="a" style="left:3314px;top:2018px;" width="24" height="22" viewBox="0 0 24 22"><path d="M1 3 L9 11 L1 19 Z M10 3 L18 11 L10 19 Z" fill="#dadada"/><rect x="19" y="2" width="3" height="18" fill="#dadada"/></svg>
<svg class="a" style="left:3170px;top:2052px;" width="24" height="20" viewBox="0 0 24 20"><path d="M10 2 V18 L1 10 Z M14 2 L23 10 L14 18 Z" fill="#dadada"/></svg>
<div class="a" style="left:3201px;top:2050px;width:2px;height:25px;background:#222;"></div>
<div class="a" style="left:3204px;top:2050px;width:103px;height:25px;background:#595959;border-radius:2px"></div>
<div class="t" style="left:3207.5px;top:2054.5px;font-size:16.5px;color:#e6e6e6;font-weight:400;">0</div>
<svg class="a" style="left:3293px;top:2052px;" width="12" height="22" viewBox="0 0 12 22"><path d="M6 2 L11 8 H1 Z M1 13 H11 L6 19 Z" fill="#bdbdbd"/></svg>
<div class="a" style="left:3310px;top:2050px;width:2px;height:25px;background:#222;"></div>
<svg class="a" style="left:3316px;top:2048px;" width="28" height="30" viewBox="0 0 28 30"><circle cx="11" cy="11" r="9" fill="#dadada"/><path d="M11 5 V11 H16" fill="none" stroke="#333" stroke-width="2"/><circle cx="19" cy="21" r="6" fill="none" stroke="#f4b01c" stroke-width="3.5" stroke-dasharray="2.5 1.6"/><circle cx="19" cy="21" r="2.5" fill="#f4b01c"/></svg>
<div class="a" style="left:3360px;top:2014px;width:64px;height:67px;background:#595959;border-radius:6px"></div>
<svg class="a" style="left:3360px;top:2014px;" width="64" height="67" viewBox="0 0 64 67"><path d="M31 10 V50 M11 30 H50" stroke="#dadada" stroke-width="8"/><circle cx="41" cy="47" r="5" fill="none" stroke="#3fc4c6" stroke-width="3"/><path d="M45 43 L56 33 M51 38 L54 41 M54 35 L57 38" stroke="#3fc4c6" stroke-width="3"/></svg>
<div class="a" style="left:3429px;top:2014px;width:70px;height:30px;background:#5a5a5a;border-radius:4px"></div>
<div class="t" style="left:3164.0px;width:600px;text-align:center;top:2021.3px;font-size:16.2px;color:#e4e4e4;font-weight:400;">Auto</div>
<div class="a" style="left:3429px;top:2048px;width:70px;height:30px;background:#5a5a5a;border-radius:4px"></div>
<div class="t" style="left:3164.0px;width:600px;text-align:center;top:2054.8px;font-size:16.2px;color:#e4e4e4;font-weight:400;">Set K.</div>
<div class="a" style="left:3504px;top:2014px;width:171px;height:25px;background:#5a5a5a;border-radius:2px"></div>
<div class="t" style="left:3512.4px;top:2019.4px;font-size:15.5px;color:#e4e4e4;font-weight:400;">Selected</div>
<svg class="a" style="left:3654px;top:2022px;" width="14" height="10" viewBox="0 0 14 10"><path d="M1 1 H13 L7 9 Z" fill="#dadada"/></svg>
<svg class="a" style="left:3508px;top:2052px;" width="30" height="30" viewBox="0 0 30 30"><rect x="1" y="1" width="5" height="5" fill="none" stroke="#dadada" stroke-width="1.2"/><path d="M5 5 L24 23" stroke="#3fc4c6" stroke-width="2"/><path d="M29 22 V29 H22 Z" fill="#dadada"/></svg>
<div class="a" style="left:3542px;top:2048px;width:132px;height:31px;background:#5a5a5a;border-radius:4px"></div>
<div class="t" style="left:3308.0px;width:600px;text-align:center;top:2055.5px;font-size:16px;color:#e4e4e4;font-weight:400;">Filters...</div>
<svg class="a" style="left:3693px;top:2016px;" width="28" height="28" viewBox="0 0 28 28"><circle cx="16" cy="11" r="8" fill="none" stroke="#dadada" stroke-width="3"/><path d="M10 17 L3 24" stroke="#dadada" stroke-width="3.5"/></svg>
<svg class="a" style="left:3727px;top:2016px;" width="28" height="28" viewBox="0 0 28 28"><rect x="13" y="2" width="6" height="6" fill="#3fc4c6"/><rect x="20" y="2" width="6" height="6" fill="#3fc4c6"/><rect x="13" y="9" width="6" height="6" fill="#3fc4c6"/><rect x="20" y="9" width="6" height="6" fill="#3fc4c6"/><circle cx="10" cy="17" r="5" fill="none" stroke="#dadada" stroke-width="2.5"/><path d="M6 21 L2 25" stroke="#dadada" stroke-width="3"/></svg>
<svg class="a" style="left:3761px;top:2016px;" width="30" height="30" viewBox="0 0 30 30"><path d="M1 6 V1 H6 M22 1 H27 V6 M27 22 V27 H22 M6 27 H1 V22" fill="none" stroke="#dadada" stroke-width="1.5"/><path d="M14 6 L22 10 V18 L14 22 L6 18 V10 Z" fill="#3fc4c6"/><path d="M6 10 L14 14 L22 10 M14 14 V22" fill="none" stroke="#333" stroke-width="1"/><path d="M29 23 V29 H23 Z" fill="#dadada"/></svg>
<svg class="a" style="left:3795px;top:2016px;" width="30" height="30" viewBox="0 0 30 30"><path d="M2 17 L9 13 L16 17 L9 21 Z" fill="#dadada"/><rect x="13" y="5" width="11" height="14" rx="2" fill="#3fc4c6"/><path d="M29 23 V29 H23 Z" fill="#dadada"/></svg>
<svg class="a" style="left:3693px;top:2050px;" width="30" height="30" viewBox="0 0 30 30"><path d="M3 3 L22 13 L3 24" fill="none" stroke="#dadada" stroke-width="2.5"/><circle cx="12" cy="12" r="5" fill="none" stroke="#dadada" stroke-width="2"/><path d="M29 23 V29 H23 Z" fill="#dadada"/></svg>
<svg class="a" style="left:3727px;top:2050px;" width="30" height="30" viewBox="0 0 30 30"><path d="M7 26 C3 20 3 14 5 12 V6 C5 4 8 4 8 6 V11 V3 C8 1 11 1 11 3 V10 V2 C11 0 14 0 14 2 V10 V4 C14 2 17 2 17 4 V14 L20 11 C22 10 23 12 22 13 L16 24 C15 26 13 27 10 27 Z" fill="#dadada"/><path d="M29 23 V29 H23 Z" fill="#dadada"/></svg>
<svg class="a" style="left:3761px;top:2050px;" width="30" height="30" viewBox="0 0 30 30"><circle cx="14" cy="14" r="10" fill="#dadada"/><path d="M14 4 A10 10 0 0 1 24 14 H14 Z" fill="#3fc4c6"/><ellipse cx="14" cy="14" rx="14" ry="5" fill="none" stroke="#dadada" stroke-width="2" transform="rotate(-25 14 14)"/><path d="M29 23 V29 H23 Z" fill="#dadada"/></svg>
<svg class="a" style="left:3797px;top:2051px;" width="28" height="28" viewBox="0 0 28 28"><rect x="1" y="1" width="21" height="21" fill="#dadada"/><rect x="2.5" y="11" width="10" height="10" fill="#333"/><path d="M8 15 L18 5 M12 5 H18 V11" fill="none" stroke="#333" stroke-width="2.2"/></svg>
<svg class="a" style="left:0px;top:0px;" width="3840" height="2091" viewBox="0 0 3840 2091"><defs><linearGradient id="vbg" x1="0" y1="0" x2="0" y2="1"><stop offset="0" stop-color="#1b1b1b"/><stop offset="0.3" stop-color="#2d2d2d"/><stop offset="0.72" stop-color="#414141"/><stop offset="1" stop-color="#4c4c4c"/></linearGradient><linearGradient id="visorOut" x1="0" y1="0" x2="0.35" y2="1"><stop offset="0" stop-color="#b08000"/><stop offset="0.25" stop-color="#a47800"/><stop offset="0.5" stop-color="#6e5000"/><stop offset="0.62" stop-color="#000"/><stop offset="1" stop-color="#000"/></linearGradient><linearGradient id="visorIn" x1="0.2" y1="0" x2="0.5" y2="1"><stop offset="0" stop-color="#000"/><stop offset="0.36" stop-color="#000"/><stop offset="0.5" stop-color="#8a6400"/><stop offset="0.8" stop-color="#a87a00"/><stop offset="1" stop-color="#9a7000"/></linearGradient><linearGradient id="lensR" x1="0" y1="0" x2="0" y2="1"><stop offset="0" stop-color="#7a0000"/><stop offset="1" stop-color="#5a0000"/></linearGradient><linearGradient id="lensY" x1="0" y1="0" x2="0" y2="1"><stop offset="0" stop-color="#a89a18"/><stop offset="1" stop-color="#7a6a00"/></linearGradient><linearGradient id="lensG" x1="0" y1="0" x2="0" y2="1"><stop offset="0" stop-color="#10b010"/><stop offset="1" stop-color="#067006"/></linearGradient><linearGradient id="pole" x1="0" y1="0" x2="1" y2="0"><stop offset="0" stop-color="#6c6c6c"/><stop offset="0.06" stop-color="#6a6a6a"/><stop offset="0.1" stop-color="#646464"/><stop offset="0.27" stop-color="#636363"/><stop offset="0.36" stop-color="#888"/><stop offset="0.6" stop-color="#888"/><stop offset="1" stop-color="#828282"/></linearGradient><linearGradient id="capg" x1="0" y1="0" x2="1" y2="0"><stop offset="0" stop-color="#9a9a9a"/><stop offset="0.5" stop-color="#b0b0b0"/><stop offset="1" stop-color="#a2a2a2"/></linearGradient><linearGradient id="armg" x1="0" y1="0" x2="0" y2="1"><stop offset="0" stop-color="#c08c08"/><stop offset="1" stop-color="#8a6200"/></linearGradient><clipPath id="vpc"><rect x="68" y="303" width="3334" height="1626"/></clipPath></defs><rect x="68" y="303" width="3334" height="1626" fill="url(#vbg)"/><g clip-path="url(#vpc)"><g stroke="#585858" stroke-width="1" opacity="0.32"><line x1="760.8" y1="1646.5" x2="1032.9" y2="2095.2" opacity="0.55"/><line x1="760.8" y1="1646.5" x2="1694.4" y2="1509.4"/><line x1="825.1" y1="1637.1" x2="1117.1" y2="2078.4" opacity="0.55"/><line x1="773.6" y1="1667.7" x2="1719.8" y2="1526.4"/><line x1="888.5" y1="1627.8" x2="1199.7" y2="2061.8" opacity="0.55"/><line x1="786.8" y1="1689.5" x2="1745.9" y2="1543.9"/><line x1="951.1" y1="1618.6" x2="1280.8" y2="2045.6" opacity="0.55"/><line x1="800.5" y1="1712.0" x2="1772.8" y2="1561.9"/><line x1="1012.9" y1="1609.5" x2="1360.4" y2="2029.7" opacity="0.55"/><line x1="814.7" y1="1735.4" x2="1800.6" y2="1580.4"/><line x1="1073.8" y1="1600.6" x2="1438.7" y2="2014.0" opacity="0.55"/><line x1="829.3" y1="1759.6" x2="1829.2" y2="1599.6"/><line x1="1133.9" y1="1591.7" x2="1515.5" y2="1998.6" opacity="0.55"/><line x1="844.5" y1="1784.6" x2="1858.8" y2="1619.4"/><line x1="1193.3" y1="1583.0" x2="1591.1" y2="1983.5" opacity="0.55"/><line x1="860.2" y1="1810.5" x2="1889.3" y2="1639.8"/><line x1="1309.7" y1="1565.9" x2="1738.3" y2="1954.1" opacity="0.55"/><line x1="893.5" y1="1865.4" x2="1953.4" y2="1682.6"/><line x1="1366.7" y1="1557.5" x2="1810.0" y2="1939.7" opacity="0.55"/><line x1="911.1" y1="1894.4" x2="1987.1" y2="1705.2"/><line x1="1423.1" y1="1549.3" x2="1880.6" y2="1925.6" opacity="0.55"/><line x1="929.4" y1="1924.6" x2="2021.9" y2="1728.5"/><line x1="1478.7" y1="1541.1" x2="1949.9" y2="1911.7" opacity="0.55"/><line x1="948.5" y1="1956.0" x2="2058.0" y2="1752.6"/><line x1="1533.7" y1="1533.0" x2="2018.2" y2="1898.1" opacity="0.55"/><line x1="968.3" y1="1988.6" x2="2095.4" y2="1777.7"/><line x1="1587.9" y1="1525.1" x2="2085.2" y2="1884.6" opacity="0.55"/><line x1="988.9" y1="2022.7" x2="2134.2" y2="1803.6"/><line x1="1641.5" y1="1517.2" x2="2151.3" y2="1871.4" opacity="0.55"/><line x1="1010.5" y1="2058.2" x2="2174.4" y2="1830.5"/><line x1="1694.4" y1="1509.4" x2="2216.2" y2="1858.4" opacity="0.55"/><line x1="1032.9" y1="2095.2" x2="2216.2" y2="1858.4"/><line x1="760.8" y1="1646.5" x2="1694.4" y2="1509.4"/></g><line x1="1252" y1="1575.5" x2="1621" y2="1929.5" stroke="#151515" stroke-width="1.6"/><line x1="877" y1="1838.6" x2="1921" y2="1660.7" stroke="#151515" stroke-width="1.6"/><polygon points="1624,1827 1674,1866 1789,1849 1789,1861 1674,1883 1624,1837" fill="#5e5e5e"/><polygon points="1624,1827 1634,1821 1777,1842 1789,1849 1674,1866" fill="#666"/><polygon points="1674,1866 1789,1849 1789,1861 1674,1883" fill="#6a6a6a"/><polygon points="1624,1827 1674,1866 1674,1883 1624,1837" fill="#4e4e4e"/><polygon points="1650,1711 1681.5,1721.5 1675,1862 1634,1823" fill="#474747"/><polygon points="1656,1722 1676,1730 1671,1848 1642,1822" fill="#3e3e3e"/><polygon points="1681.5,1721.5 1762,1708.5 1778,1844 1676,1863" fill="#6c6c6c"/><polygon points="1700,1735 1752,1726 1764,1833 1697,1845" fill="#707070" stroke="#5e5e5e" stroke-width="1.2"/><polygon points="1652,1696 1746,1695 1762,1708.5 1681.5,1721.5 1650,1711" fill="#525252"/><polygon points="1664,1697 1679,1686 1729,1684 1747,1702 1714,1718 1690,1716" fill="#939393" stroke="#555" stroke-width="0.8"/><polygon points="1676,1698 1684,1688 1726,1688 1736,1701 1712,1711 1692,1710" fill="#858585"/><rect x="1680" y="780" width="49.5" height="920" fill="url(#pole)"/><rect x="1679.5" y="780" width="1.2" height="920" fill="#202020" opacity="0.6"/><rect x="1696" y="718" width="17" height="9" fill="#c8c8c8"/><path d="M1682 757 V733 Q1682 725 1690 725 H1719 Q1727 725 1727 733 V757 Z" fill="url(#capg)"/><rect x="1676.5" y="756" width="55" height="11" rx="5.5" fill="#a6a6a6"/><rect x="1681" y="767" width="46" height="15" fill="#9a9a9a"/><path d="M1676 1120 Q1676 1117 1679 1117 Q1704 1126 1730 1117 Q1733 1117 1733 1120 L1733 1143 L1676 1143 Z" fill="#a87a00"/><path d="M1679 1118 Q1704 1127 1730 1118" fill="none" stroke="#c8960e" stroke-width="1.5"/><rect x="1676" y="1120" width="6" height="23" fill="#94690a" opacity="0.6"/><path d="M1676 1291 Q1676 1288 1679 1288 Q1704 1297 1730 1288 Q1733 1288 1733 1291 L1733 1313 L1676 1313 Z" fill="#a87a00"/><path d="M1679 1289 Q1704 1298 1730 1289" fill="none" stroke="#c8960e" stroke-width="1.5"/><rect x="1676" y="1291" width="6" height="22" fill="#94690a" opacity="0.6"/><line x1="1590" y1="1161" x2="1706" y2="1144" stroke="#8a6200" stroke-width="12" stroke-linecap="butt"/><line x1="1590" y1="1160.0" x2="1706" y2="1143.0" stroke="#b08000" stroke-width="8.2" stroke-linecap="butt"/><line x1="1590" y1="1159.6" x2="1706" y2="1142.6" stroke="#c49212" stroke-width="3.0" stroke-linecap="butt"/><line x1="1578" y1="1162" x2="1622" y2="1156" stroke="#8a6200" stroke-width="17" stroke-linecap="round"/><line x1="1578" y1="1160.6" x2="1622" y2="1154.6" stroke="#b08000" stroke-width="11.6" stroke-linecap="round"/><line x1="1578" y1="1160.0" x2="1622" y2="1154.0" stroke="#c49212" stroke-width="4.2" stroke-linecap="round"/><line x1="1706" y1="1143" x2="1750" y2="1143" stroke="#8a6200" stroke-width="17" stroke-linecap="butt"/><line x1="1706" y1="1141.6" x2="1750" y2="1141.6" stroke="#b08000" stroke-width="11.6" stroke-linecap="butt"/><line x1="1706" y1="1141.0" x2="1750" y2="1141.0" stroke="#c49212" stroke-width="4.2" stroke-linecap="butt"/><line x1="1750" y1="1143" x2="1836" y2="1143" stroke="#8a6200" stroke-width="12" stroke-linecap="butt"/><line x1="1750" y1="1142.0" x2="1836" y2="1142.0" stroke="#b08000" stroke-width="8.2" stroke-linecap="butt"/><line x1="1750" y1="1141.6" x2="1836" y2="1141.6" stroke="#c49212" stroke-width="3.0" stroke-linecap="butt"/><line x1="1836" y1="1142" x2="1879" y2="1142" stroke="#8a6200" stroke-width="18" stroke-linecap="butt"/><line x1="1836" y1="1140.6" x2="1879" y2="1140.6" stroke="#b08000" stroke-width="12.2" stroke-linecap="butt"/><line x1="1836" y1="1139.8" x2="1879" y2="1139.8" stroke="#c49212" stroke-width="4.5" stroke-linecap="butt"/><path d="M1720 1150 H1734 L1731 1163 H1723 Z" fill="#a87a00"/><path d="M1851 1150 H1863 V1163 H1851 Z" fill="#a07400"/><path d="M1842 1156 L1872 1156 L1866 1163 H1848 Z" fill="#946a00"/><path d="M1540 1192 L1668 1181 Q1678 1181 1678 1192 L1678 1305 Q1678 1315 1668 1316 L1540 1330 Q1526 1330 1526 1316 L1526 1206 Q1526 1193 1540 1192 Z" fill="#b08000"/><path d="M1526 1206 Q1526 1193 1540 1192 L1552 1191 L1552 1330 L1540 1330 Q1526 1330 1526 1316 Z" fill="#8e6600"/><path d="M1563 1200 L1665 1187 Q1675.5 1186 1675.5 1197 L1675.5 1301 Q1675.5 1311 1665 1312 L1563 1327 Q1552 1328 1552 1316 L1552 1212 Q1552 1201 1563 1200 Z" fill="#060606"/><path d="M1566 1211 L1660 1200 L1664 1297 L1566 1314 Z" fill="#121212"/><rect x="1594" y="1163" width="13" height="24" fill="#a67800"/><path d="M1584 1173 L1614 1170 L1607 1180 L1592 1182 Z" fill="#8f6600"/><g fill="#ff1800"><circle cx="1562.4" cy="1227.0" r="1.95"/><circle cx="1566.4" cy="1227.0" r="1.95"/><circle cx="1562.4" cy="1231.7" r="1.95"/><circle cx="1566.4" cy="1231.7" r="1.95"/><circle cx="1562.4" cy="1236.4" r="1.95"/><circle cx="1566.4" cy="1236.4" r="1.95"/><circle cx="1562.4" cy="1241.1" r="1.95"/><circle cx="1566.4" cy="1241.1" r="1.95"/><circle cx="1562.4" cy="1245.8" r="1.95"/><circle cx="1566.4" cy="1245.8" r="1.95"/><circle cx="1571.2" cy="1216.0" r="1.95"/><circle cx="1575.2" cy="1216.0" r="1.95"/><circle cx="1571.2" cy="1220.7" r="1.95"/><circle cx="1575.2" cy="1220.7" r="1.95"/><circle cx="1571.2" cy="1225.4" r="1.95"/><circle cx="1575.2" cy="1225.4" r="1.95"/><circle cx="1571.2" cy="1230.1" r="1.95"/><circle cx="1575.2" cy="1230.1" r="1.95"/><circle cx="1571.2" cy="1234.8" r="1.95"/><circle cx="1575.2" cy="1234.8" r="1.95"/><circle cx="1571.2" cy="1239.5" r="1.95"/><circle cx="1575.2" cy="1239.5" r="1.95"/><circle cx="1571.2" cy="1244.2" r="1.95"/><circle cx="1575.2" cy="1244.2" r="1.95"/><circle cx="1580.7" cy="1211.0" r="1.95"/><circle cx="1584.7" cy="1211.0" r="1.95"/><circle cx="1580.7" cy="1215.7" r="1.95"/><circle cx="1584.7" cy="1215.7" r="1.95"/><circle cx="1580.7" cy="1220.4" r="1.95"/><circle cx="1584.7" cy="1220.4" r="1.95"/><circle cx="1580.7" cy="1225.1" r="1.95"/><circle cx="1584.7" cy="1225.1" r="1.95"/><circle cx="1580.7" cy="1229.8" r="1.95"/><circle cx="1584.7" cy="1229.8" r="1.95"/><circle cx="1580.7" cy="1234.5" r="1.95"/><circle cx="1584.7" cy="1234.5" r="1.95"/><circle cx="1580.7" cy="1239.2" r="1.95"/><circle cx="1584.7" cy="1239.2" r="1.95"/><circle cx="1580.7" cy="1243.9" r="1.95"/><circle cx="1584.7" cy="1243.9" r="1.95"/><circle cx="1590.2" cy="1213.0" r="1.95"/><circle cx="1594.2" cy="1213.0" r="1.95"/><circle cx="1590.2" cy="1217.7" r="1.95"/><circle cx="1594.2" cy="1217.7" r="1.95"/><circle cx="1590.2" cy="1222.4" r="1.95"/><circle cx="1594.2" cy="1222.4" r="1.95"/><circle cx="1590.2" cy="1227.1" r="1.95"/><circle cx="1594.2" cy="1227.1" r="1.95"/><circle cx="1590.2" cy="1231.8" r="1.95"/><circle cx="1594.2" cy="1231.8" r="1.95"/><circle cx="1590.2" cy="1236.5" r="1.95"/><circle cx="1594.2" cy="1236.5" r="1.95"/><circle cx="1590.2" cy="1241.2" r="1.95"/><circle cx="1594.2" cy="1241.2" r="1.95"/><circle cx="1590.2" cy="1245.9" r="1.95"/><circle cx="1594.2" cy="1245.9" r="1.95"/><circle cx="1561.5" cy="1251.0" r="1.95"/><circle cx="1566.3" cy="1251.0" r="1.95"/><circle cx="1571.1" cy="1251.0" r="1.95"/><circle cx="1575.9" cy="1251.0" r="1.95"/><circle cx="1580.7" cy="1251.0" r="1.95"/><circle cx="1585.5" cy="1251.0" r="1.95"/><circle cx="1590.3" cy="1251.0" r="1.95"/><circle cx="1595.1" cy="1251.0" r="1.95"/><circle cx="1563.9" cy="1255.4" r="1.95"/><circle cx="1568.7" cy="1255.4" r="1.95"/><circle cx="1573.5" cy="1255.4" r="1.95"/><circle cx="1578.3" cy="1255.4" r="1.95"/><circle cx="1583.1" cy="1255.4" r="1.95"/><circle cx="1587.9" cy="1255.4" r="1.95"/><circle cx="1592.7" cy="1255.4" r="1.95"/><circle cx="1561.5" cy="1259.8" r="1.95"/><circle cx="1566.3" cy="1259.8" r="1.95"/><circle cx="1571.1" cy="1259.8" r="1.95"/><circle cx="1575.9" cy="1259.8" r="1.95"/><circle cx="1580.7" cy="1259.8" r="1.95"/><circle cx="1585.5" cy="1259.8" r="1.95"/><circle cx="1590.3" cy="1259.8" r="1.95"/><circle cx="1595.1" cy="1259.8" r="1.95"/><circle cx="1563.9" cy="1264.2" r="1.95"/><circle cx="1568.7" cy="1264.2" r="1.95"/><circle cx="1573.5" cy="1264.2" r="1.95"/><circle cx="1578.3" cy="1264.2" r="1.95"/><circle cx="1583.1" cy="1264.2" r="1.95"/><circle cx="1587.9" cy="1264.2" r="1.95"/><circle cx="1592.7" cy="1264.2" r="1.95"/><circle cx="1561.5" cy="1268.6" r="1.95"/><circle cx="1566.3" cy="1268.6" r="1.95"/><circle cx="1571.1" cy="1268.6" r="1.95"/><circle cx="1575.9" cy="1268.6" r="1.95"/><circle cx="1580.7" cy="1268.6" r="1.95"/><circle cx="1585.5" cy="1268.6" r="1.95"/><circle cx="1590.3" cy="1268.6" r="1.95"/><circle cx="1595.1" cy="1268.6" r="1.95"/><circle cx="1563.9" cy="1273.0" r="1.95"/><circle cx="1568.7" cy="1273.0" r="1.95"/><circle cx="1573.5" cy="1273.0" r="1.95"/><circle cx="1578.3" cy="1273.0" r="1.95"/><circle cx="1583.1" cy="1273.0" r="1.95"/><circle cx="1587.9" cy="1273.0" r="1.95"/><circle cx="1592.7" cy="1273.0" r="1.95"/><circle cx="1561.5" cy="1277.4" r="1.95"/><circle cx="1566.3" cy="1277.4" r="1.95"/><circle cx="1571.1" cy="1277.4" r="1.95"/><circle cx="1575.9" cy="1277.4" r="1.95"/><circle cx="1580.7" cy="1277.4" r="1.95"/><circle cx="1585.5" cy="1277.4" r="1.95"/><circle cx="1590.3" cy="1277.4" r="1.95"/><circle cx="1595.1" cy="1277.4" r="1.95"/><circle cx="1563.9" cy="1281.8" r="1.95"/><circle cx="1568.7" cy="1281.8" r="1.95"/><circle cx="1573.5" cy="1281.8" r="1.95"/><circle cx="1578.3" cy="1281.8" r="1.95"/><circle cx="1583.1" cy="1281.8" r="1.95"/><circle cx="1587.9" cy="1281.8" r="1.95"/><circle cx="1592.7" cy="1281.8" r="1.95"/><circle cx="1561.5" cy="1286.2" r="1.95"/><circle cx="1566.3" cy="1286.2" r="1.95"/><circle cx="1571.1" cy="1286.2" r="1.95"/><circle cx="1575.9" cy="1286.2" r="1.95"/><circle cx="1580.7" cy="1286.2" r="1.95"/><circle cx="1585.5" cy="1286.2" r="1.95"/><circle cx="1590.3" cy="1286.2" r="1.95"/><circle cx="1564.0" cy="1290.6" r="1.95"/><circle cx="1568.8" cy="1290.6" r="1.95"/><circle cx="1573.6" cy="1290.6" r="1.95"/><circle cx="1578.4" cy="1290.6" r="1.95"/><circle cx="1583.2" cy="1290.6" r="1.95"/><circle cx="1588.0" cy="1290.6" r="1.95"/><circle cx="1592.8" cy="1290.6" r="1.95"/><circle cx="1562.1" cy="1295.0" r="1.95"/><circle cx="1566.9" cy="1295.0" r="1.95"/><circle cx="1571.7" cy="1295.0" r="1.95"/><circle cx="1576.5" cy="1295.0" r="1.95"/><circle cx="1581.3" cy="1295.0" r="1.95"/><circle cx="1586.1" cy="1295.0" r="1.95"/><circle cx="1590.9" cy="1295.0" r="1.95"/><circle cx="1565.0" cy="1299.4" r="1.95"/><circle cx="1569.8" cy="1299.4" r="1.95"/><circle cx="1574.6" cy="1299.4" r="1.95"/><circle cx="1579.4" cy="1299.4" r="1.95"/><circle cx="1584.2" cy="1299.4" r="1.95"/><circle cx="1589.0" cy="1299.4" r="1.95"/><circle cx="1563.2" cy="1303.8" r="1.95"/><circle cx="1568.0" cy="1303.8" r="1.95"/><circle cx="1572.8" cy="1303.8" r="1.95"/><circle cx="1577.6" cy="1303.8" r="1.95"/><circle cx="1582.4" cy="1303.8" r="1.95"/><circle cx="1587.2" cy="1303.8" r="1.95"/><circle cx="1566.1" cy="1308.2" r="1.95"/><circle cx="1570.9" cy="1308.2" r="1.95"/><circle cx="1575.7" cy="1308.2" r="1.95"/><circle cx="1580.5" cy="1308.2" r="1.95"/><circle cx="1585.3" cy="1308.2" r="1.95"/><circle cx="1590.1" cy="1308.2" r="1.95"/><circle cx="1598.0" cy="1282.0" r="1.95"/><circle cx="1601.8" cy="1283.4" r="1.95"/><circle cx="1599.9" cy="1276.6" r="1.95"/><circle cx="1603.7" cy="1278.0" r="1.95"/><circle cx="1601.7" cy="1271.1" r="1.95"/><circle cx="1605.5" cy="1272.5" r="1.95"/><circle cx="1603.6" cy="1265.7" r="1.95"/><circle cx="1607.4" cy="1267.1" r="1.95"/><circle cx="1605.4" cy="1260.3" r="1.95"/><circle cx="1609.2" cy="1261.7" r="1.95"/><circle cx="1607.3" cy="1254.9" r="1.95"/><circle cx="1611.1" cy="1256.3" r="1.95"/><circle cx="1609.1" cy="1249.4" r="1.95"/><circle cx="1612.9" cy="1250.8" r="1.95"/><circle cx="1611.0" cy="1244.0" r="1.95"/><circle cx="1614.8" cy="1245.4" r="1.95"/></g><g fill="#333"><circle cx="1638.4" cy="1210.2" r="1.1"/><circle cx="1643.2" cy="1210.2" r="1.1"/><circle cx="1648.0" cy="1210.2" r="1.1"/><circle cx="1633.6" cy="1215.0" r="1.1"/><circle cx="1638.4" cy="1215.0" r="1.1"/><circle cx="1643.2" cy="1215.0" r="1.1"/><circle cx="1648.0" cy="1215.0" r="1.1"/><circle cx="1628.8" cy="1219.8" r="1.1"/><circle cx="1633.6" cy="1219.8" r="1.1"/><circle cx="1638.4" cy="1219.8" r="1.1"/><circle cx="1643.2" cy="1219.8" r="1.1"/><circle cx="1648.0" cy="1219.8" r="1.1"/><circle cx="1624.0" cy="1224.6" r="1.1"/><circle cx="1628.8" cy="1224.6" r="1.1"/><circle cx="1633.6" cy="1224.6" r="1.1"/><circle cx="1638.4" cy="1224.6" r="1.1"/><circle cx="1643.2" cy="1224.6" r="1.1"/><circle cx="1648.0" cy="1224.6" r="1.1"/><circle cx="1652.8" cy="1224.6" r="1.1"/><circle cx="1619.2" cy="1229.4" r="1.1"/><circle cx="1624.0" cy="1229.4" r="1.1"/><circle cx="1628.8" cy="1229.4" r="1.1"/><circle cx="1633.6" cy="1229.4" r="1.1"/><circle cx="1638.4" cy="1229.4" r="1.1"/><circle cx="1643.2" cy="1229.4" r="1.1"/><circle cx="1648.0" cy="1229.4" r="1.1"/><circle cx="1652.8" cy="1229.4" r="1.1"/><circle cx="1619.2" cy="1234.2" r="1.1"/><circle cx="1624.0" cy="1234.2" r="1.1"/><circle cx="1628.8" cy="1234.2" r="1.1"/><circle cx="1633.6" cy="1234.2" r="1.1"/><circle cx="1638.4" cy="1234.2" r="1.1"/><circle cx="1643.2" cy="1234.2" r="1.1"/><circle cx="1648.0" cy="1234.2" r="1.1"/><circle cx="1652.8" cy="1234.2" r="1.1"/><circle cx="1657.6" cy="1234.2" r="1.1"/><circle cx="1614.4" cy="1239.0" r="1.1"/><circle cx="1619.2" cy="1239.0" r="1.1"/><circle cx="1624.0" cy="1239.0" r="1.1"/><circle cx="1628.8" cy="1239.0" r="1.1"/><circle cx="1633.6" cy="1239.0" r="1.1"/><circle cx="1638.4" cy="1239.0" r="1.1"/><circle cx="1643.2" cy="1239.0" r="1.1"/><circle cx="1648.0" cy="1239.0" r="1.1"/><circle cx="1652.8" cy="1239.0" r="1.1"/><circle cx="1657.6" cy="1239.0" r="1.1"/><circle cx="1609.6" cy="1243.8" r="1.1"/><circle cx="1614.4" cy="1243.8" r="1.1"/><circle cx="1619.2" cy="1243.8" r="1.1"/><circle cx="1624.0" cy="1243.8" r="1.1"/><circle cx="1628.8" cy="1243.8" r="1.1"/><circle cx="1633.6" cy="1243.8" r="1.1"/><circle cx="1638.4" cy="1243.8" r="1.1"/><circle cx="1643.2" cy="1243.8" r="1.1"/><circle cx="1648.0" cy="1243.8" r="1.1"/><circle cx="1652.8" cy="1243.8" r="1.1"/><circle cx="1657.6" cy="1243.8" r="1.1"/><circle cx="1609.6" cy="1248.6" r="1.1"/><circle cx="1614.4" cy="1248.6" r="1.1"/><circle cx="1619.2" cy="1248.6" r="1.1"/><circle cx="1624.0" cy="1248.6" r="1.1"/><circle cx="1628.8" cy="1248.6" r="1.1"/><circle cx="1633.6" cy="1248.6" r="1.1"/><circle cx="1638.4" cy="1248.6" r="1.1"/><circle cx="1643.2" cy="1248.6" r="1.1"/><circle cx="1648.0" cy="1248.6" r="1.1"/><circle cx="1652.8" cy="1248.6" r="1.1"/><circle cx="1604.8" cy="1253.4" r="1.1"/><circle cx="1609.6" cy="1253.4" r="1.1"/><circle cx="1614.4" cy="1253.4" r="1.1"/><circle cx="1619.2" cy="1253.4" r="1.1"/><circle cx="1624.0" cy="1253.4" r="1.1"/><circle cx="1628.8" cy="1253.4" r="1.1"/><circle cx="1633.6" cy="1253.4" r="1.1"/><circle cx="1638.4" cy="1253.4" r="1.1"/><circle cx="1643.2" cy="1253.4" r="1.1"/><circle cx="1648.0" cy="1253.4" r="1.1"/><circle cx="1652.8" cy="1253.4" r="1.1"/><circle cx="1604.8" cy="1258.2" r="1.1"/><circle cx="1609.6" cy="1258.2" r="1.1"/><circle cx="1614.4" cy="1258.2" r="1.1"/><circle cx="1619.2" cy="1258.2" r="1.1"/><circle cx="1624.0" cy="1258.2" r="1.1"/><circle cx="1628.8" cy="1258.2" r="1.1"/><circle cx="1633.6" cy="1258.2" r="1.1"/><circle cx="1638.4" cy="1258.2" r="1.1"/><circle cx="1643.2" cy="1258.2" r="1.1"/><circle cx="1648.0" cy="1258.2" r="1.1"/><circle cx="1652.8" cy="1258.2" r="1.1"/><circle cx="1600.0" cy="1263.0" r="1.1"/><circle cx="1604.8" cy="1263.0" r="1.1"/><circle cx="1609.6" cy="1263.0" r="1.1"/><circle cx="1614.4" cy="1263.0" r="1.1"/><circle cx="1619.2" cy="1263.0" r="1.1"/><circle cx="1624.0" cy="1263.0" r="1.1"/><circle cx="1628.8" cy="1263.0" r="1.1"/><circle cx="1633.6" cy="1263.0" r="1.1"/><circle cx="1638.4" cy="1263.0" r="1.1"/><circle cx="1643.2" cy="1263.0" r="1.1"/><circle cx="1648.0" cy="1263.0" r="1.1"/><circle cx="1652.8" cy="1263.0" r="1.1"/><circle cx="1600.0" cy="1267.8" r="1.1"/><circle cx="1604.8" cy="1267.8" r="1.1"/><circle cx="1609.6" cy="1267.8" r="1.1"/><circle cx="1614.4" cy="1267.8" r="1.1"/><circle cx="1619.2" cy="1267.8" r="1.1"/><circle cx="1624.0" cy="1267.8" r="1.1"/><circle cx="1628.8" cy="1267.8" r="1.1"/><circle cx="1633.6" cy="1267.8" r="1.1"/><circle cx="1638.4" cy="1267.8" r="1.1"/><circle cx="1643.2" cy="1267.8" r="1.1"/><circle cx="1648.0" cy="1267.8" r="1.1"/><circle cx="1600.0" cy="1272.6" r="1.1"/><circle cx="1604.8" cy="1272.6" r="1.1"/><circle cx="1609.6" cy="1272.6" r="1.1"/><circle cx="1614.4" cy="1272.6" r="1.1"/><circle cx="1619.2" cy="1272.6" r="1.1"/><circle cx="1624.0" cy="1272.6" r="1.1"/><circle cx="1628.8" cy="1272.6" r="1.1"/><circle cx="1633.6" cy="1272.6" r="1.1"/><circle cx="1638.4" cy="1272.6" r="1.1"/><circle cx="1643.2" cy="1272.6" r="1.1"/><circle cx="1648.0" cy="1272.6" r="1.1"/><circle cx="1600.0" cy="1277.4" r="1.1"/><circle cx="1604.8" cy="1277.4" r="1.1"/><circle cx="1609.6" cy="1277.4" r="1.1"/><circle cx="1614.4" cy="1277.4" r="1.1"/><circle cx="1619.2" cy="1277.4" r="1.1"/><circle cx="1624.0" cy="1277.4" r="1.1"/><circle cx="1628.8" cy="1277.4" r="1.1"/><circle cx="1633.6" cy="1277.4" r="1.1"/><circle cx="1638.4" cy="1277.4" r="1.1"/><circle cx="1643.2" cy="1277.4" r="1.1"/><circle cx="1648.0" cy="1277.4" r="1.1"/><circle cx="1595.2" cy="1282.2" r="1.1"/><circle cx="1600.0" cy="1282.2" r="1.1"/><circle cx="1604.8" cy="1282.2" r="1.1"/><circle cx="1609.6" cy="1282.2" r="1.1"/><circle cx="1614.4" cy="1282.2" r="1.1"/><circle cx="1619.2" cy="1282.2" r="1.1"/><circle cx="1624.0" cy="1282.2" r="1.1"/><circle cx="1628.8" cy="1282.2" r="1.1"/><circle cx="1633.6" cy="1282.2" r="1.1"/><circle cx="1638.4" cy="1282.2" r="1.1"/><circle cx="1643.2" cy="1282.2" r="1.1"/><circle cx="1595.2" cy="1287.0" r="1.1"/><circle cx="1600.0" cy="1287.0" r="1.1"/><circle cx="1604.8" cy="1287.0" r="1.1"/><circle cx="1609.6" cy="1287.0" r="1.1"/><circle cx="1614.4" cy="1287.0" r="1.1"/><circle cx="1619.2" cy="1287.0" r="1.1"/><circle cx="1624.0" cy="1287.0" r="1.1"/><circle cx="1628.8" cy="1287.0" r="1.1"/><circle cx="1633.6" cy="1287.0" r="1.1"/><circle cx="1638.4" cy="1287.0" r="1.1"/><circle cx="1643.2" cy="1287.0" r="1.1"/><circle cx="1595.2" cy="1291.8" r="1.1"/><circle cx="1600.0" cy="1291.8" r="1.1"/><circle cx="1604.8" cy="1291.8" r="1.1"/><circle cx="1609.6" cy="1291.8" r="1.1"/><circle cx="1614.4" cy="1291.8" r="1.1"/><circle cx="1619.2" cy="1291.8" r="1.1"/><circle cx="1624.0" cy="1291.8" r="1.1"/><circle cx="1628.8" cy="1291.8" r="1.1"/><circle cx="1633.6" cy="1291.8" r="1.1"/><circle cx="1638.4" cy="1291.8" r="1.1"/><circle cx="1643.2" cy="1291.8" r="1.1"/><circle cx="1595.2" cy="1296.6" r="1.1"/><circle cx="1600.0" cy="1296.6" r="1.1"/><circle cx="1604.8" cy="1296.6" r="1.1"/><circle cx="1609.6" cy="1296.6" r="1.1"/><circle cx="1614.4" cy="1296.6" r="1.1"/><circle cx="1619.2" cy="1296.6" r="1.1"/><circle cx="1624.0" cy="1296.6" r="1.1"/><circle cx="1628.8" cy="1296.6" r="1.1"/><circle cx="1633.6" cy="1296.6" r="1.1"/><circle cx="1638.4" cy="1296.6" r="1.1"/><circle cx="1590.4" cy="1301.4" r="1.1"/><circle cx="1595.2" cy="1301.4" r="1.1"/><circle cx="1600.0" cy="1301.4" r="1.1"/><circle cx="1604.8" cy="1301.4" r="1.1"/><circle cx="1609.6" cy="1301.4" r="1.1"/><circle cx="1614.4" cy="1301.4" r="1.1"/><circle cx="1619.2" cy="1301.4" r="1.1"/><circle cx="1624.0" cy="1301.4" r="1.1"/><circle cx="1628.8" cy="1301.4" r="1.1"/><circle cx="1633.6" cy="1301.4" r="1.1"/><circle cx="1638.4" cy="1301.4" r="1.1"/><circle cx="1590.4" cy="1306.2" r="1.1"/><circle cx="1595.2" cy="1306.2" r="1.1"/><circle cx="1600.0" cy="1306.2" r="1.1"/><circle cx="1604.8" cy="1306.2" r="1.1"/><circle cx="1609.6" cy="1306.2" r="1.1"/><circle cx="1614.4" cy="1306.2" r="1.1"/><circle cx="1619.2" cy="1306.2" r="1.1"/><circle cx="1624.0" cy="1306.2" r="1.1"/></g><path d="M1796 1161 H1917 Q1930 1161 1930 1174 V1288 Q1930 1300 1917 1300 H1796 Q1782 1300 1782 1287 V1175 Q1782 1161 1796 1161 Z" fill="#b08000"/><path d="M1799 1172 H1914 Q1926 1172 1926 1184 V1284 Q1926 1296 1914 1296 H1799 Q1787 1296 1787 1284 V1184 Q1787 1172 1799 1172 Z" fill="#060606"/><rect x="1795" y="1180" width="126" height="108" fill="#0f0f0f"/><g fill="#2e2e2e"><circle cx="1813.1" cy="1188.3" r="1.0"/><circle cx="1817.7" cy="1188.3" r="1.0"/><circle cx="1822.3" cy="1188.3" r="1.0"/><circle cx="1826.9" cy="1188.3" r="1.0"/><circle cx="1799.3" cy="1192.9" r="1.0"/><circle cx="1803.9" cy="1192.9" r="1.0"/><circle cx="1808.5" cy="1192.9" r="1.0"/><circle cx="1813.1" cy="1192.9" r="1.0"/><circle cx="1817.7" cy="1192.9" r="1.0"/><circle cx="1822.3" cy="1192.9" r="1.0"/><circle cx="1826.9" cy="1192.9" r="1.0"/><circle cx="1799.3" cy="1197.5" r="1.0"/><circle cx="1803.9" cy="1197.5" r="1.0"/><circle cx="1808.5" cy="1197.5" r="1.0"/><circle cx="1813.1" cy="1197.5" r="1.0"/><circle cx="1817.7" cy="1197.5" r="1.0"/><circle cx="1822.3" cy="1197.5" r="1.0"/><circle cx="1826.9" cy="1197.5" r="1.0"/><circle cx="1799.3" cy="1202.1" r="1.0"/><circle cx="1803.9" cy="1202.1" r="1.0"/><circle cx="1808.5" cy="1202.1" r="1.0"/><circle cx="1813.1" cy="1202.1" r="1.0"/><circle cx="1817.7" cy="1202.1" r="1.0"/><circle cx="1822.3" cy="1202.1" r="1.0"/><circle cx="1826.9" cy="1202.1" r="1.0"/><circle cx="1799.3" cy="1206.7" r="1.0"/><circle cx="1803.9" cy="1206.7" r="1.0"/><circle cx="1808.5" cy="1206.7" r="1.0"/><circle cx="1813.1" cy="1206.7" r="1.0"/><circle cx="1817.7" cy="1206.7" r="1.0"/><circle cx="1822.3" cy="1206.7" r="1.0"/><circle cx="1826.9" cy="1206.7" r="1.0"/><circle cx="1799.3" cy="1211.3" r="1.0"/><circle cx="1803.9" cy="1211.3" r="1.0"/><circle cx="1808.5" cy="1211.3" r="1.0"/><circle cx="1813.1" cy="1211.3" r="1.0"/><circle cx="1817.7" cy="1211.3" r="1.0"/><circle cx="1822.3" cy="1211.3" r="1.0"/><circle cx="1826.9" cy="1211.3" r="1.0"/><circle cx="1799.3" cy="1215.9" r="1.0"/><circle cx="1803.9" cy="1215.9" r="1.0"/><circle cx="1808.5" cy="1215.9" r="1.0"/><circle cx="1813.1" cy="1215.9" r="1.0"/><circle cx="1817.7" cy="1215.9" r="1.0"/><circle cx="1822.3" cy="1215.9" r="1.0"/><circle cx="1826.9" cy="1215.9" r="1.0"/><circle cx="1799.3" cy="1220.5" r="1.0"/><circle cx="1803.9" cy="1220.5" r="1.0"/><circle cx="1808.5" cy="1220.5" r="1.0"/><circle cx="1813.1" cy="1220.5" r="1.0"/><circle cx="1817.7" cy="1220.5" r="1.0"/><circle cx="1822.3" cy="1220.5" r="1.0"/><circle cx="1826.9" cy="1220.5" r="1.0"/><circle cx="1799.3" cy="1225.1" r="1.0"/><circle cx="1803.9" cy="1225.1" r="1.0"/><circle cx="1808.5" cy="1225.1" r="1.0"/><circle cx="1813.1" cy="1225.1" r="1.0"/><circle cx="1817.7" cy="1225.1" r="1.0"/><circle cx="1822.3" cy="1225.1" r="1.0"/><circle cx="1826.9" cy="1225.1" r="1.0"/><circle cx="1849.9" cy="1225.1" r="1.0"/><circle cx="1799.3" cy="1229.7" r="1.0"/><circle cx="1803.9" cy="1229.7" r="1.0"/><circle cx="1808.5" cy="1229.7" r="1.0"/><circle cx="1813.1" cy="1229.7" r="1.0"/><circle cx="1817.7" cy="1229.7" r="1.0"/><circle cx="1822.3" cy="1229.7" r="1.0"/><circle cx="1826.9" cy="1229.7" r="1.0"/><circle cx="1831.5" cy="1229.7" r="1.0"/><circle cx="1845.3" cy="1229.7" r="1.0"/><circle cx="1799.3" cy="1234.3" r="1.0"/><circle cx="1803.9" cy="1234.3" r="1.0"/><circle cx="1808.5" cy="1234.3" r="1.0"/><circle cx="1813.1" cy="1234.3" r="1.0"/><circle cx="1817.7" cy="1234.3" r="1.0"/><circle cx="1822.3" cy="1234.3" r="1.0"/><circle cx="1826.9" cy="1234.3" r="1.0"/><circle cx="1831.5" cy="1234.3" r="1.0"/><circle cx="1840.7" cy="1234.3" r="1.0"/><circle cx="1845.3" cy="1234.3" r="1.0"/><circle cx="1799.3" cy="1238.9" r="1.0"/><circle cx="1803.9" cy="1238.9" r="1.0"/><circle cx="1808.5" cy="1238.9" r="1.0"/><circle cx="1813.1" cy="1238.9" r="1.0"/><circle cx="1817.7" cy="1238.9" r="1.0"/><circle cx="1822.3" cy="1238.9" r="1.0"/><circle cx="1826.9" cy="1238.9" r="1.0"/><circle cx="1831.5" cy="1238.9" r="1.0"/><circle cx="1836.1" cy="1238.9" r="1.0"/><circle cx="1840.7" cy="1238.9" r="1.0"/><circle cx="1799.3" cy="1243.5" r="1.0"/><circle cx="1803.9" cy="1243.5" r="1.0"/><circle cx="1808.5" cy="1243.5" r="1.0"/><circle cx="1813.1" cy="1243.5" r="1.0"/><circle cx="1817.7" cy="1243.5" r="1.0"/><circle cx="1822.3" cy="1243.5" r="1.0"/><circle cx="1826.9" cy="1243.5" r="1.0"/><circle cx="1831.5" cy="1243.5" r="1.0"/><circle cx="1836.1" cy="1243.5" r="1.0"/><circle cx="1840.7" cy="1243.5" r="1.0"/><circle cx="1799.3" cy="1248.1" r="1.0"/><circle cx="1803.9" cy="1248.1" r="1.0"/><circle cx="1808.5" cy="1248.1" r="1.0"/><circle cx="1813.1" cy="1248.1" r="1.0"/><circle cx="1817.7" cy="1248.1" r="1.0"/><circle cx="1822.3" cy="1248.1" r="1.0"/><circle cx="1826.9" cy="1248.1" r="1.0"/><circle cx="1831.5" cy="1248.1" r="1.0"/><circle cx="1836.1" cy="1248.1" r="1.0"/><circle cx="1840.7" cy="1248.1" r="1.0"/><circle cx="1799.3" cy="1252.7" r="1.0"/><circle cx="1803.9" cy="1252.7" r="1.0"/><circle cx="1808.5" cy="1252.7" r="1.0"/><circle cx="1813.1" cy="1252.7" r="1.0"/><circle cx="1817.7" cy="1252.7" r="1.0"/><circle cx="1822.3" cy="1252.7" r="1.0"/><circle cx="1826.9" cy="1252.7" r="1.0"/><circle cx="1831.5" cy="1252.7" r="1.0"/><circle cx="1836.1" cy="1252.7" r="1.0"/><circle cx="1799.3" cy="1257.3" r="1.0"/><circle cx="1803.9" cy="1257.3" r="1.0"/><circle cx="1808.5" cy="1257.3" r="1.0"/><circle cx="1813.1" cy="1257.3" r="1.0"/><circle cx="1817.7" cy="1257.3" r="1.0"/><circle cx="1822.3" cy="1257.3" r="1.0"/><circle cx="1826.9" cy="1257.3" r="1.0"/><circle cx="1831.5" cy="1257.3" r="1.0"/><circle cx="1836.1" cy="1257.3" r="1.0"/><circle cx="1799.3" cy="1261.9" r="1.0"/><circle cx="1803.9" cy="1261.9" r="1.0"/><circle cx="1808.5" cy="1261.9" r="1.0"/><circle cx="1813.1" cy="1261.9" r="1.0"/><circle cx="1817.7" cy="1261.9" r="1.0"/><circle cx="1822.3" cy="1261.9" r="1.0"/><circle cx="1826.9" cy="1261.9" r="1.0"/><circle cx="1831.5" cy="1261.9" r="1.0"/><circle cx="1836.1" cy="1261.9" r="1.0"/><circle cx="1803.9" cy="1266.5" r="1.0"/><circle cx="1808.5" cy="1266.5" r="1.0"/><circle cx="1813.1" cy="1266.5" r="1.0"/><circle cx="1817.7" cy="1266.5" r="1.0"/><circle cx="1822.3" cy="1266.5" r="1.0"/><circle cx="1826.9" cy="1266.5" r="1.0"/><circle cx="1831.5" cy="1266.5" r="1.0"/><circle cx="1803.9" cy="1271.1" r="1.0"/><circle cx="1808.5" cy="1271.1" r="1.0"/><circle cx="1813.1" cy="1271.1" r="1.0"/><circle cx="1817.7" cy="1271.1" r="1.0"/><circle cx="1822.3" cy="1271.1" r="1.0"/><circle cx="1826.9" cy="1271.1" r="1.0"/><circle cx="1831.5" cy="1271.1" r="1.0"/><circle cx="1803.9" cy="1275.7" r="1.0"/><circle cx="1808.5" cy="1275.7" r="1.0"/><circle cx="1813.1" cy="1275.7" r="1.0"/><circle cx="1817.7" cy="1275.7" r="1.0"/><circle cx="1822.3" cy="1275.7" r="1.0"/><circle cx="1826.9" cy="1275.7" r="1.0"/><circle cx="1831.5" cy="1275.7" r="1.0"/><circle cx="1803.9" cy="1280.3" r="1.0"/><circle cx="1808.5" cy="1280.3" r="1.0"/><circle cx="1813.1" cy="1280.3" r="1.0"/><circle cx="1817.7" cy="1280.3" r="1.0"/><circle cx="1822.3" cy="1280.3" r="1.0"/><circle cx="1826.9" cy="1280.3" r="1.0"/></g><g fill="#e4e4e4"><circle cx="1888.5" cy="1189.2" r="1.9"/><circle cx="1893.8" cy="1187.6" r="1.9"/><circle cx="1898.1" cy="1191.3" r="1.9"/><circle cx="1886.9" cy="1194.5" r="1.9"/><circle cx="1892.2" cy="1192.9" r="1.9"/><circle cx="1897.0" cy="1196.7" r="1.9"/><circle cx="1891.2" cy="1198.8" r="1.9"/><circle cx="1886.9" cy="1201.0" r="1.9"/><circle cx="1893.3" cy="1203.1" r="1.9"/><circle cx="1888.5" cy="1205.8" r="1.9"/><circle cx="1880.5" cy="1202.0" r="1.9"/><circle cx="1882.6" cy="1207.4" r="1.9"/><circle cx="1874.1" cy="1205.8" r="1.9"/><circle cx="1895.4" cy="1210.0" r="1.9"/><circle cx="1867.6" cy="1208.4" r="1.9"/><circle cx="1876.2" cy="1210.6" r="1.9"/><circle cx="1870.3" cy="1212.7" r="1.9"/><circle cx="1862.3" cy="1212.7" r="1.9"/><circle cx="1881.0" cy="1213.3" r="1.9"/><circle cx="1888.5" cy="1211.6" r="1.9"/><circle cx="1897.6" cy="1217.0" r="1.9"/><circle cx="1865.5" cy="1217.0" r="1.9"/><circle cx="1874.1" cy="1217.5" r="1.9"/><circle cx="1879.9" cy="1219.1" r="1.9"/><circle cx="1885.8" cy="1217.0" r="1.9"/><circle cx="1891.2" cy="1216.5" r="1.9"/><circle cx="1859.6" cy="1219.1" r="1.9"/><circle cx="1863.9" cy="1222.9" r="1.9"/><circle cx="1873.5" cy="1223.4" r="1.9"/><circle cx="1882.6" cy="1223.9" r="1.9"/><circle cx="1888.0" cy="1222.3" r="1.9"/><circle cx="1893.3" cy="1221.8" r="1.9"/><circle cx="1900.2" cy="1222.9" r="1.9"/><circle cx="1859.1" cy="1225.5" r="1.9"/><circle cx="1862.8" cy="1228.7" r="1.9"/><circle cx="1871.9" cy="1229.3" r="1.9"/><circle cx="1877.8" cy="1226.6" r="1.9"/><circle cx="1881.5" cy="1230.4" r="1.9"/><circle cx="1886.3" cy="1228.7" r="1.9"/><circle cx="1896.5" cy="1227.1" r="1.9"/><circle cx="1901.3" cy="1230.9" r="1.9"/><circle cx="1906.1" cy="1228.7" r="1.9"/><circle cx="1912.0" cy="1232.0" r="1.9"/><circle cx="1906.1" cy="1233.6" r="1.9"/><circle cx="1858.6" cy="1233.0" r="1.9"/><circle cx="1871.4" cy="1234.6" r="1.9"/><circle cx="1876.7" cy="1235.2" r="1.9"/><circle cx="1885.8" cy="1235.2" r="1.9"/><circle cx="1882.6" cy="1240.0" r="1.9"/><circle cx="1871.4" cy="1242.1" r="1.9"/><circle cx="1878.3" cy="1244.2" r="1.9"/><circle cx="1888.0" cy="1242.1" r="1.9"/><circle cx="1869.2" cy="1247.5" r="1.9"/><circle cx="1875.7" cy="1251.2" r="1.9"/><circle cx="1882.6" cy="1249.6" r="1.9"/><circle cx="1891.2" cy="1248.5" r="1.9"/><circle cx="1867.1" cy="1253.9" r="1.9"/><circle cx="1873.0" cy="1258.1" r="1.9"/><circle cx="1886.3" cy="1255.5" r="1.9"/><circle cx="1893.3" cy="1256.0" r="1.9"/><circle cx="1864.4" cy="1260.8" r="1.9"/><circle cx="1869.2" cy="1266.2" r="1.9"/><circle cx="1888.5" cy="1263.0" r="1.9"/><circle cx="1894.9" cy="1264.0" r="1.9"/><circle cx="1861.8" cy="1267.2" r="1.9"/><circle cx="1866.0" cy="1273.1" r="1.9"/><circle cx="1890.6" cy="1271.0" r="1.9"/><circle cx="1897.0" cy="1271.5" r="1.9"/><circle cx="1859.1" cy="1274.2" r="1.9"/><circle cx="1862.8" cy="1279.5" r="1.9"/><circle cx="1892.2" cy="1278.5" r="1.9"/><circle cx="1898.6" cy="1279.5" r="1.9"/></g><line x1="1590" y1="1338" x2="1706" y2="1319" stroke="#8a6200" stroke-width="14" stroke-linecap="butt"/><line x1="1590" y1="1336.9" x2="1706" y2="1317.9" stroke="#b08000" stroke-width="9.5" stroke-linecap="butt"/><line x1="1590" y1="1336.3" x2="1706" y2="1317.3" stroke="#c49212" stroke-width="3.5" stroke-linecap="butt"/><line x1="1580" y1="1338" x2="1622" y2="1332" stroke="#8a6200" stroke-width="20" stroke-linecap="round"/><line x1="1580" y1="1336.4" x2="1622" y2="1330.4" stroke="#b08000" stroke-width="13.6" stroke-linecap="round"/><line x1="1580" y1="1335.6" x2="1622" y2="1329.6" stroke="#c49212" stroke-width="5.0" stroke-linecap="round"/><line x1="1706" y1="1317" x2="1750" y2="1317" stroke="#8a6200" stroke-width="18" stroke-linecap="butt"/><line x1="1706" y1="1315.6" x2="1750" y2="1315.6" stroke="#b08000" stroke-width="12.2" stroke-linecap="butt"/><line x1="1706" y1="1314.8" x2="1750" y2="1314.8" stroke="#c49212" stroke-width="4.5" stroke-linecap="butt"/><line x1="1750" y1="1316" x2="1836" y2="1316" stroke="#8a6200" stroke-width="14" stroke-linecap="butt"/><line x1="1750" y1="1314.9" x2="1836" y2="1314.9" stroke="#b08000" stroke-width="9.5" stroke-linecap="butt"/><line x1="1750" y1="1314.3" x2="1836" y2="1314.3" stroke="#c49212" stroke-width="3.5" stroke-linecap="butt"/><line x1="1835" y1="1312" x2="1878" y2="1312" stroke="#8a6200" stroke-width="22" stroke-linecap="butt"/><line x1="1835" y1="1310.2" x2="1878" y2="1310.2" stroke="#b08000" stroke-width="15.0" stroke-linecap="butt"/><line x1="1835" y1="1309.4" x2="1878" y2="1309.4" stroke="#c49212" stroke-width="5.5" stroke-linecap="butt"/><path d="M1661 386 L1759 383 L1761 720 L1664 723 Z" fill="#b08000"/><rect x="1661" y="386" width="6" height="337" fill="#946c00"/><path d="M1664 498 L1760 496" stroke="#6e5000" stroke-width="2"/><path d="M1664 611 L1760 609" stroke="#6e5000" stroke-width="2"/><rect x="1666" y="388" width="93" height="106" rx="8" fill="none" stroke="#c89400" stroke-width="1.5" opacity="0.7"/><rect x="1656" y="409" width="10" height="10" rx="2" fill="#a87a00"/><rect x="1656" y="468" width="10" height="10" rx="2" fill="#a87a00"/><rect x="1759" y="402" width="8" height="9" rx="2" fill="#a87a00"/><ellipse cx="1713" cy="443" rx="42" ry="44" fill="none" stroke="#c08c06" stroke-width="3"/><path d="M1713 401 L1746 402 A40 42 0 0 1 1746 486 L1713 487 A40 43 0 0 1 1713 401 Z" fill="url(#visorOut)"/><ellipse cx="1746" cy="444" rx="40" ry="42" fill="url(#visorIn)"/><ellipse cx="1729.5" cy="444" rx="23.5" ry="38" fill="url(#lensR)"/><ellipse cx="1746" cy="444" rx="40" ry="42" fill="none" stroke="#c08a00" stroke-width="2.2"/><path d="M1722 485 L1768 478" stroke="#6a4c00" stroke-width="1.5"/><rect x="1666" y="501" width="93" height="106" rx="8" fill="none" stroke="#c89400" stroke-width="1.5" opacity="0.7"/><rect x="1656" y="522" width="10" height="10" rx="2" fill="#a87a00"/><rect x="1656" y="581" width="10" height="10" rx="2" fill="#a87a00"/><rect x="1759" y="515" width="8" height="9" rx="2" fill="#a87a00"/><ellipse cx="1713" cy="556" rx="42" ry="44" fill="none" stroke="#c08c06" stroke-width="3"/><path d="M1713 514 L1746 515 A40 42 0 0 1 1746 599 L1713 600 A40 43 0 0 1 1713 514 Z" fill="url(#visorOut)"/><ellipse cx="1746" cy="557" rx="40" ry="42" fill="url(#visorIn)"/><ellipse cx="1729.5" cy="557" rx="23.5" ry="38" fill="url(#lensY)"/><ellipse cx="1729.5" cy="557" rx="23.5" ry="38" fill="none" stroke="#000" stroke-width="0.8" stroke-dasharray="1 2" opacity="0.35"/><ellipse cx="1746" cy="557" rx="40" ry="42" fill="none" stroke="#c08a00" stroke-width="2.2"/><path d="M1722 598 L1768 591" stroke="#6a4c00" stroke-width="1.5"/><rect x="1666" y="614" width="93" height="106" rx="8" fill="none" stroke="#c89400" stroke-width="1.5" opacity="0.7"/><rect x="1656" y="635" width="10" height="10" rx="2" fill="#a87a00"/><rect x="1656" y="694" width="10" height="10" rx="2" fill="#a87a00"/><rect x="1759" y="628" width="8" height="9" rx="2" fill="#a87a00"/><ellipse cx="1713" cy="669" rx="42" ry="44" fill="none" stroke="#c08c06" stroke-width="3"/><path d="M1713 627 L1746 628 A40 42 0 0 1 1746 712 L1713 713 A40 43 0 0 1 1713 627 Z" fill="url(#visorOut)"/><ellipse cx="1746" cy="670" rx="40" ry="42" fill="url(#visorIn)"/><ellipse cx="1729.5" cy="670" rx="23.5" ry="38" fill="url(#lensG)"/><ellipse cx="1729.5" cy="670" rx="23.5" ry="38" fill="none" stroke="#000" stroke-width="0.8" stroke-dasharray="1 2" opacity="0.35"/><ellipse cx="1746" cy="670" rx="40" ry="42" fill="none" stroke="#c08a00" stroke-width="2.2"/><path d="M1722 711 L1768 704" stroke="#6a4c00" stroke-width="1.5"/><ellipse cx="3347" cy="375.5" rx="35" ry="9" fill="none" stroke="#111" stroke-width="7" opacity="0.6"/><ellipse cx="3347" cy="375.5" rx="35" ry="9" fill="none" stroke="#a8a8a8" stroke-width="3.5"/><path d="M3330 341 L3352 339 L3367 343 L3366 374 L3344 376 L3330 372 Z" fill="#8d8d8d"/><path d="M3312 376 A35 9 0 0 0 3382 376" fill="none" stroke="#c4c4c4" stroke-width="3.5"/><line x1="92" y1="1904" x2="92" y2="1877" stroke="#1f3fe0" stroke-width="1.5"/><line x1="92" y1="1904" x2="73" y2="1904" stroke="#d02020" stroke-width="1.5"/><line x1="92" y1="1904" x2="104" y2="1909" stroke="#20a020" stroke-width="1.5"/><text x="90" y="1883" font-family="Liberation Sans" font-size="14" font-weight="700" fill="#1030e0">z</text><text x="70" y="1907" font-family="Liberation Sans" font-size="14" font-weight="700" fill="#d01010">x</text><text x="102" y="1912" font-family="Liberation Sans" font-size="14" font-weight="700" fill="#10a010">y</text></g><rect x="67" y="302" width="3335" height="1627" fill="none" stroke="#9c8632" stroke-width="2"/></svg>
<div class="t" style="left:71.7px;top:310.6px;font-size:17.0px;color:#dedede;font-weight:400;letter-spacing:-0.6px;">[ + ]</div>
<div class="t" style="left:105.3px;top:310.6px;font-size:17.0px;color:#dedede;font-weight:400;">[Perspective ]</div>
<div class="t" style="left:215.2px;top:310.6px;font-size:17.0px;color:#dedede;font-weight:400;">[Standard ]</div>
<div class="t" style="left:304.6px;top:310.6px;font-size:17.0px;color:#dedede;font-weight:400;">[Default Shading ]</div>
</body></html>
